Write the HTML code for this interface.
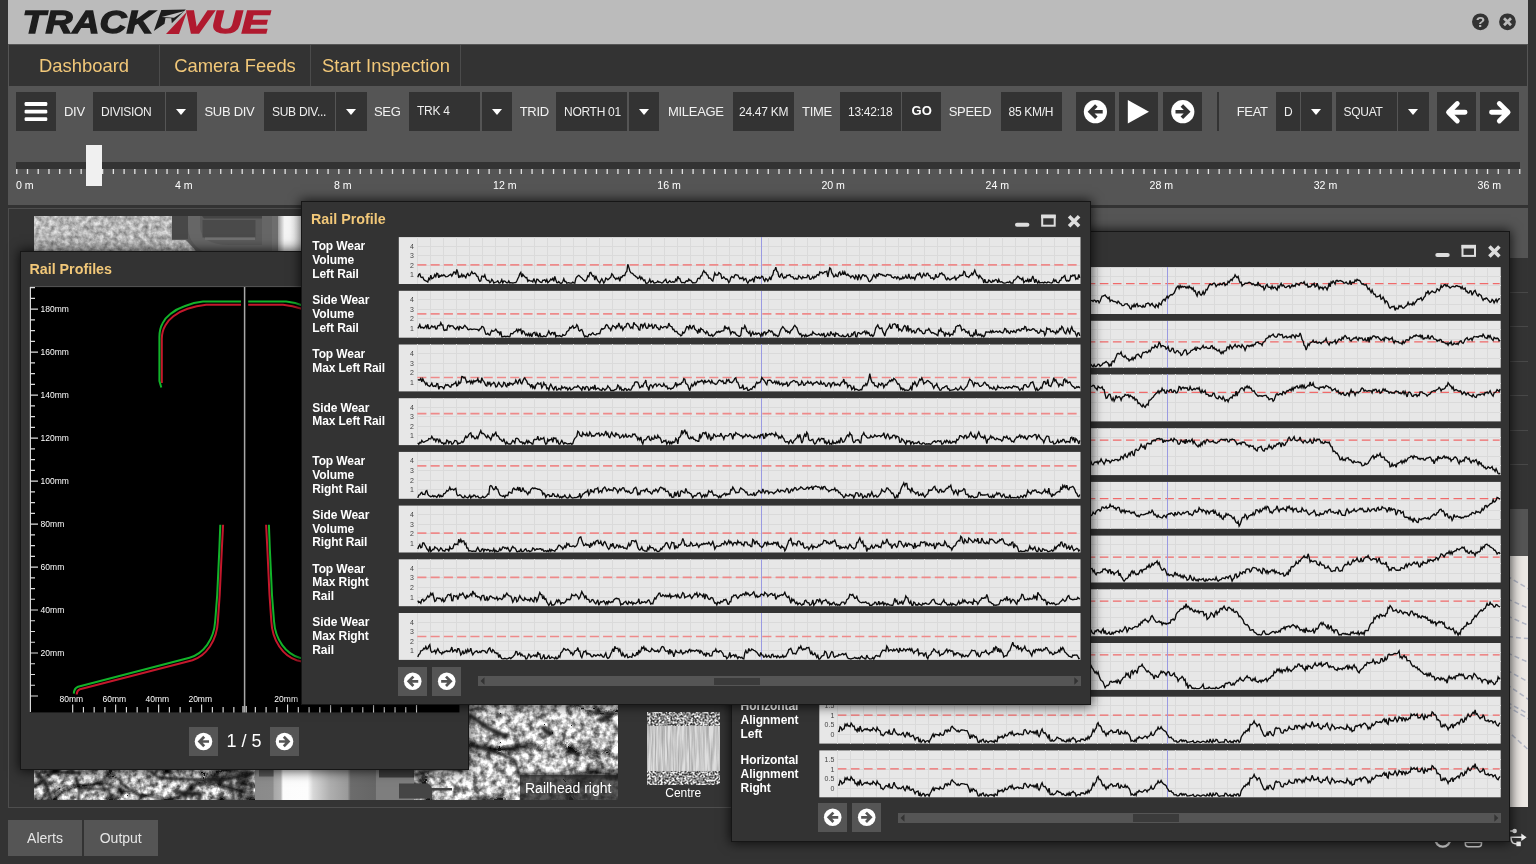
<!DOCTYPE html>
<html lang="en"><head><meta charset="utf-8"><title>TrackVue</title>
<style>
*{box-sizing:border-box;margin:0;padding:0}
html{background:#333}
html,body{width:1536px;height:864px;overflow:hidden;background:#333;font-family:"Liberation Sans",sans-serif;color:#fff}
#root{position:absolute;left:0;top:0;width:1536px;height:864px;overflow:hidden;will-change:transform}
.a{position:absolute}
#hdr{left:8px;top:0;width:1520px;height:44px;background:#bbb}
#nav{left:8px;top:44px;width:1520px;height:43px;background:#333;border:1px solid #555}
.tab{position:absolute;top:0;height:41px;line-height:41px;text-align:center;font-size:18.4px;color:#f2c879;width:150px}
.tsep{position:absolute;top:0;width:1px;height:41px;background:#4b4b4b}
#tb{left:8px;top:87px;width:1520px;height:117.5px;background:#555}
.bx{position:absolute;top:92px;height:39px;line-height:41px;background:#333;font-size:12px;letter-spacing:-.28px;color:#eee;padding-left:8px;white-space:nowrap;overflow:hidden}
.lb{position:absolute;top:92px;height:39px;line-height:39.4px;font-size:13px;letter-spacing:-.3px;color:#f2f2f2;white-space:nowrap}
.ar{position:absolute;top:92px;height:39px;background:#333;width:30.5px}
.ar:after{content:"";position:absolute;left:10.2px;top:17.2px;border-left:5.3px solid transparent;border-right:5.3px solid transparent;border-top:6.2px solid #fff}
.btn{position:absolute;top:92px;height:39px;width:39.2px;background:#333}
.btn svg{position:absolute;left:0;top:0}
.dlg{position:absolute;background:#333;box-shadow:inset 0 0 0 1px #161616,0 0 11px 1px rgba(0,0,0,.75)}
.dt{position:absolute;font-weight:bold;font-size:14px;color:#f2c879;white-space:nowrap;line-height:16px}
.rl{position:absolute;font-weight:bold;font-size:12px;letter-spacing:-.1px;line-height:13.8px;color:#fff;white-space:nowrap}
.yl{font-size:7px;fill:#444;font-family:"Liberation Sans",sans-serif}
.cl{font-size:8.5px;fill:#fff;font-family:"Liberation Sans",sans-serif}
.sb{position:absolute;background:#555;width:29px;height:29px}
.btab{position:absolute;top:820px;height:35.5px;line-height:37.5px;background:#555;color:#e6e6e6;font-size:14px;text-align:center}
.tl{position:absolute;top:178px;font-size:10.6px;line-height:14px;color:#fff;white-space:nowrap}
</style></head>
<body><div id="root">
<svg width="0" height="0" style="position:absolute">
<defs>
<filter id="rocks" x="0" y="0" width="100%" height="100%" color-interpolation-filters="sRGB">
 <feTurbulence type="turbulence" baseFrequency="0.018 0.035" numOctaves="2" seed="7" result="lo"/>
 <feColorMatrix in="lo" type="matrix" values="4.5 0 0 0 0  4.5 0 0 0 0  4.5 0 0 0 0  0 0 0 0 1" result="lo2"/>
 <feTurbulence type="fractalNoise" baseFrequency="0.16" numOctaves="3" seed="9" result="hi"/>
 <feColorMatrix in="hi" type="matrix" values="2.2 0 0 0 -.6  2.2 0 0 0 -.6  2.2 0 0 0 -.6  0 0 0 0 1" result="hi2"/>
 <feComposite in="lo2" in2="hi2" operator="arithmetic" k1="0.62" k2="0.3" k3="0.12" k4="0.02"/>
</filter>
<filter id="rocks2" x="0" y="0" width="100%" height="100%" color-interpolation-filters="sRGB">
 <feTurbulence type="turbulence" baseFrequency="0.014 0.02" numOctaves="2" seed="31" result="lo"/>
 <feColorMatrix in="lo" type="matrix" values="5 0 0 0 0  5 0 0 0 0  5 0 0 0 0  0 0 0 0 1" result="lo2"/>
 <feTurbulence type="fractalNoise" baseFrequency="0.15" numOctaves="3" seed="12" result="hi"/>
 <feColorMatrix in="hi" type="matrix" values="2.2 0 0 0 -.55  2.2 0 0 0 -.55  2.2 0 0 0 -.55  0 0 0 0 1" result="hi2"/>
 <feComposite in="lo2" in2="hi2" operator="arithmetic" k1="0.62" k2="0.32" k3="0.12" k4="0.02"/>
</filter>
<filter id="blur1" x="-5%" y="-5%" width="110%" height="110%"><feGaussianBlur stdDeviation="0.8"/></filter>
<filter id="grain" x="0" y="0" width="100%" height="100%" color-interpolation-filters="sRGB">
 <feTurbulence type="fractalNoise" baseFrequency="0.2" numOctaves="3" seed="3" result="n"/>
 <feColorMatrix in="n" type="matrix" values="0.62 0 0 0 .4  0.62 0 0 0 .4  0.62 0 0 0 .4  0 0 0 0 1"/>
</filter>
<filter id="speck" x="0" y="0" width="100%" height="100%" color-interpolation-filters="sRGB">
 <feTurbulence type="fractalNoise" baseFrequency="0.5" numOctaves="2" seed="11" result="n"/>
 <feColorMatrix in="n" type="matrix" values="0 0 0 0 0  0 0 0 0 0  0 0 0 0 0  2.4 2.4 0 0 -1.9" result="a"/>
 <feFlood flood-color="#f0f0f0"/><feComposite in2="a" operator="in" result="w"/>
 <feFlood flood-color="#3a3a3a" result="k"/>
 <feMerge><feMergeNode in="k"/><feMergeNode in="w"/></feMerge>
</filter>
<filter id="streak" x="0" y="0" width="100%" height="100%" color-interpolation-filters="sRGB">
 <feTurbulence type="fractalNoise" baseFrequency="0.6 0.03" numOctaves="2" seed="5" result="n"/>
 <feColorMatrix in="n" type="matrix" values="0 0 0 0 0  0 0 0 0 0  0 0 0 0 0  1.5 1.5 0 0 -1.1" result="a"/>
 <feFlood flood-color="#a8a8a8"/><feComposite in2="a" operator="in" result="w"/>
 <feFlood flood-color="#dedede" result="k"/>
 <feMerge><feMergeNode in="k"/><feMergeNode in="w"/></feMerge>
</filter>
</defs></svg>
<div id="hdr" class="a"></div>
<svg class="a" style="left:0;top:0" width="300" height="44" viewBox="0 0 300 44">
<text x="22.6" y="33.2" style="font:italic bold 32px 'Liberation Sans',sans-serif;text-transform:uppercase" fill="#1d1d1d" stroke="#1d1d1d" stroke-width="1.3" stroke-linejoin="miter" textLength="131" lengthAdjust="spacingAndGlyphs">Track</text>
<polygon points="161.3,10 185.8,9.5 171.8,23.3 171.3,18.3 165.5,18.1 164.5,23.8 153.8,31.1" fill="#1d1d1d"/>
<polygon points="161.6,17 184.6,11.1 174,17.7" fill="#c2c2c2"/>
<polygon points="186.9,11.8 179,33.9 166,33.9" fill="#b01a2f"/>
<text x="183.5" y="33.2" style="font:italic bold 32px 'Liberation Sans',sans-serif;text-transform:uppercase" fill="#b01a2f" stroke="#b01a2f" stroke-width="1.3" textLength="86" lengthAdjust="spacingAndGlyphs">Vue</text>
</svg>
<svg class="a" style="left:1468px;top:10px" width="56" height="24" viewBox="1468 10 56 24">
<circle cx="1480.4" cy="21.8" r="8.4" fill="#333"/>
<text x="1480.5" y="27.3" text-anchor="middle" font-family="Liberation Sans,sans-serif" font-weight="bold" font-size="15.5" fill="#bbb">?</text>
<circle cx="1507.5" cy="21.8" r="8.4" fill="#333"/>
<path d="M1504 18.3L1511 25.3M1511 18.3L1504 25.3" stroke="#bbb" stroke-width="2.7"/>
</svg>
<div id="nav" class="a">
<div class="tab" style="left:0">Dashboard</div><div class="tsep" style="left:150px"></div>
<div class="tab" style="left:151px">Camera Feeds</div><div class="tsep" style="left:301px"></div>
<div class="tab" style="left:302px">Start Inspection</div><div class="tsep" style="left:451px"></div>
</div>
<div id="tb" class="a"></div>
<div class="btn" style="left:16px;width:40px"><svg width="40" height="40"><rect x="8.6" y="10.1" width="22.7" height="3.8" rx="1.2" fill="#fff"/><rect x="8.6" y="17.7" width="22.7" height="3.8" rx="1.2" fill="#fff"/><rect x="8.6" y="25.2" width="22.7" height="3.8" rx="1.2" fill="#fff"/></svg></div>
<div class="lb" style="left:64px">DIV</div>
<div class="bx" style="left:93px;width:72px;">DIVISION</div>
<div class="ar" style="left:166px;width:30.5px"></div>
<div class="lb" style="left:204.5px">SUB DIV</div>
<div class="bx" style="left:264px;width:71px;">SUB DIV...</div>
<div class="ar" style="left:336px;width:30.5px"></div>
<div class="lb" style="left:374px">SEG</div>
<div class="bx" style="left:409px;width:71px;line-height:39px">TRK 4</div>
<div class="ar" style="left:481.5px;width:30.5px"></div>
<div class="lb" style="left:519.7px">TRID</div>
<div class="bx" style="left:556px;width:71px;">NORTH 01</div>
<div class="ar" style="left:628.5px;width:30.5px"></div>
<div class="lb" style="left:668px">MILEAGE</div>
<div class="bx" style="left:733px;width:61px;padding-left:6px">24.47 KM</div>
<div class="lb" style="left:802px">TIME</div>
<div class="bx" style="left:840px;width:61px;">13:42:18</div>
<div class="bx" style="left:902px;width:39.3px;padding:0;text-align:center;font-weight:bold;font-size:13px;color:#fff;line-height:38px;letter-spacing:0">GO</div>
<div class="lb" style="left:948.7px">SPEED</div>
<div class="bx" style="left:1001px;width:61px;padding-left:7.5px">85 KM/H</div>
<div class="btn" style="left:1075.7px"><svg width="40" height="40"><circle cx="19.4" cy="19.7" r="11.6" fill="#fff"/><path d="M26.71 19.70H14.18 M20.33 13.55L14.18 19.70L20.33 25.85" stroke="#333" stroke-width="3.60" fill="none" stroke-linecap="butt" stroke-linejoin="miter"/></svg></div>
<div class="btn" style="left:1119.1px"><svg width="40" height="40"><path d="M8.8 7.9L30 19.7L8.8 31.5Z" fill="#fff"/></svg></div>
<div class="btn" style="left:1162.5px"><svg width="40" height="40"><circle cx="19.8" cy="19.7" r="11.6" fill="#fff"/><path d="M12.49 19.70H25.02 M18.87 13.55L25.02 19.70L18.87 25.85" stroke="#333" stroke-width="3.60" fill="none" stroke-linecap="butt" stroke-linejoin="miter"/></svg></div>
<div class="a" style="left:1217px;top:92px;width:1.6px;height:39px;background:#333"></div>
<div class="lb" style="left:1236.7px">FEAT</div>
<div class="bx" style="left:1276px;width:24px;">D</div>
<div class="ar" style="left:1301px;width:31px"></div>
<div class="bx" style="left:1335.5px;width:61.5px;">SQUAT</div>
<div class="ar" style="left:1398px;width:30.5px"></div>
<div class="btn" style="left:1437px"><svg width="40" height="40"><path d="M28.1 20.25H12.2 M20.3 11.45L11.5 20.25L20.3 29.05" stroke="#fff" stroke-width="4.8" fill="none" stroke-linecap="round" stroke-linejoin="round"/></svg></div>
<div class="btn" style="left:1480px"><svg width="40" height="40"><path d="M11.5 20.25H27.4 M19.3 11.45L28.1 20.25L19.3 29.05" stroke="#fff" stroke-width="4.8" fill="none" stroke-linecap="round" stroke-linejoin="round"/></svg></div>
<div class="a" style="left:16px;top:162px;width:1504px;height:7px;background:#333"></div>
<svg class="a" style="left:16px;top:169px" width="1505" height="5"><path d="M0.75 0V5M11.49 0V5M22.22 0V5M32.96 0V5M43.69 0V5M54.43 0V5M65.16 0V5M75.90 0V5M86.64 0V5M97.37 0V5M108.11 0V5M118.84 0V5M129.58 0V5M140.31 0V5M151.05 0V5M161.79 0V5M172.52 0V5M183.26 0V5M193.99 0V5M204.73 0V5M215.46 0V5M226.20 0V5M236.94 0V5M247.67 0V5M258.41 0V5M269.14 0V5M279.88 0V5M290.61 0V5M301.35 0V5M312.09 0V5M322.82 0V5M333.56 0V5M344.29 0V5M355.03 0V5M365.76 0V5M376.50 0V5M387.24 0V5M397.97 0V5M408.71 0V5M419.44 0V5M430.18 0V5M440.91 0V5M451.65 0V5M462.39 0V5M473.12 0V5M483.86 0V5M494.59 0V5M505.33 0V5M516.06 0V5M526.80 0V5M537.54 0V5M548.27 0V5M559.01 0V5M569.74 0V5M580.48 0V5M591.21 0V5M601.95 0V5M612.69 0V5M623.42 0V5M634.16 0V5M644.89 0V5M655.63 0V5M666.36 0V5M677.10 0V5M687.84 0V5M698.57 0V5M709.31 0V5M720.04 0V5M730.78 0V5M741.51 0V5M752.25 0V5M762.99 0V5M773.72 0V5M784.46 0V5M795.19 0V5M805.93 0V5M816.66 0V5M827.40 0V5M838.14 0V5M848.87 0V5M859.61 0V5M870.34 0V5M881.08 0V5M891.81 0V5M902.55 0V5M913.29 0V5M924.02 0V5M934.76 0V5M945.49 0V5M956.23 0V5M966.96 0V5M977.70 0V5M988.44 0V5M999.17 0V5M1009.91 0V5M1020.64 0V5M1031.38 0V5M1042.11 0V5M1052.85 0V5M1063.59 0V5M1074.32 0V5M1085.06 0V5M1095.79 0V5M1106.53 0V5M1117.26 0V5M1128.00 0V5M1138.74 0V5M1149.47 0V5M1160.21 0V5M1170.94 0V5M1181.68 0V5M1192.41 0V5M1203.15 0V5M1213.89 0V5M1224.62 0V5M1235.36 0V5M1246.09 0V5M1256.83 0V5M1267.56 0V5M1278.30 0V5M1289.04 0V5M1299.77 0V5M1310.51 0V5M1321.24 0V5M1331.98 0V5M1342.71 0V5M1353.45 0V5M1364.19 0V5M1374.92 0V5M1385.66 0V5M1396.39 0V5M1407.13 0V5M1417.86 0V5M1428.60 0V5M1439.34 0V5M1450.07 0V5M1460.81 0V5M1471.54 0V5M1482.28 0V5M1493.01 0V5M1503.75 0V5" stroke="#e4e4e4" stroke-width="1.3"/></svg>
<div class="a" style="left:86px;top:145px;width:16px;height:41px;background:#f0f0f0"></div>
<div class="tl" style="left:16px">0 m</div>
<div class="tl" style="left:175px">4 m</div>
<div class="tl" style="left:334px">8 m</div>
<div class="tl" style="left:493px">12 m</div>
<div class="tl" style="left:657.3px">16 m</div>
<div class="tl" style="left:821.4px">20 m</div>
<div class="tl" style="left:985.5px">24 m</div>
<div class="tl" style="left:1149.6px">28 m</div>
<div class="tl" style="left:1313.7px">32 m</div>
<div class="tl" style="left:1477.5px">36 m</div>
<div class="a" style="left:8px;top:208px;width:1000px;height:600px;border:1px solid #4e4e4e;background:#343434"></div>
<div class="a" style="left:1000px;top:208px;width:528px;height:600px;background:#343434"></div>
<div class="a" style="left:1000px;top:208px;width:528px;height:50px;background:#555"></div>
<div class="a" style="left:1000px;top:292.0px;width:528px;height:1px;background:#494949"></div>
<div class="a" style="left:1000px;top:326.4px;width:528px;height:1px;background:#494949"></div>
<div class="a" style="left:1000px;top:360.8px;width:528px;height:1px;background:#494949"></div>
<div class="a" style="left:1000px;top:395.2px;width:528px;height:1px;background:#494949"></div>
<div class="a" style="left:1000px;top:429.6px;width:528px;height:1px;background:#494949"></div>
<div class="a" style="left:1000px;top:464.0px;width:528px;height:1px;background:#494949"></div>
<div class="a" style="left:1000px;top:508.5px;width:528px;height:48px;background:#555"></div>
<svg class="a" style="left:1400px;top:556px" width="128" height="251" viewBox="1400 556 128 251">
<rect x="1400" y="556" width="128" height="251" fill="#ece8e4"/>
<path d="M1500 571.8L1530 589.8M1500 595.6L1530 609.1M1500 612.6L1530 626.1M1500 635.8L1530 638.8M1500 649.6L1530 663.1M1500 666.4L1530 682.9M1500 679.6L1530 700.6M1500 698.4L1530 714.9M1500 701.8L1530 719.8M1500 724.2L1530 751.2" stroke="#b4b8c6" stroke-width="1.5" stroke-dasharray="5 3" fill="none"/>
</svg>
<svg class="a" style="left:34px;top:216px" width="270" height="40" viewBox="0 0 270 40">
<rect width="165" height="40" filter="url(#grain)"/>
<path d="M138 0H270V40H166Q160 32 152 24H138Z" fill="#5c5c5c"/>
<rect x="138" y="0" width="16" height="23" fill="#484848"/>
<path d="M165 -4 H232 V2.5 H170 Z" fill="#454545"/>
<path d="M160 -2 V10 C160 28 176 35 196 35 H234 V-2" stroke="#666" stroke-width="12" fill="none"/>
<rect x="168.5" y="4" width="53" height="17.5" fill="#4a4a4a"/>
<rect x="171" y="21.5" width="50" height="2.5" fill="#727272"/>
<rect x="238" width="9" height="40" fill="#6e6e6e"/>
<rect x="244" width="26" height="40" fill="url(#gw)"/>
<defs><linearGradient id="gw" x1="0" x2="1" y1="0" y2="0"><stop offset="0" stop-color="#9a9a9a"/><stop offset=".25" stop-color="#f4f4f4"/><stop offset="1" stop-color="#fff"/></linearGradient></defs>
</svg>
<svg class="a" style="left:34px;top:700px" width="584" height="100" viewBox="34 700 584 100">
<rect x="34" y="700" width="224" height="100" filter="url(#rocks)"/>
<rect x="255" y="700" width="215" height="100" fill="url(#gr)"/>
<rect x="259" y="769" width="14.5" height="7.5" fill="#595959"/>
<rect x="376" y="700" width="40" height="100" fill="#7e7e7e"/>
<rect x="379" y="769" width="37" height="8.5" fill="#3c3c3c"/>
<rect x="414" y="700" width="204" height="100" filter="url(#rocks2)"/>
<path d="M399 783.5H426Q431 784 431.5 788H452V790.5H432V798.6H399Z" fill="#454545"/>
<g fill="none" stroke="#161616" stroke-linecap="round" stroke-linejoin="round" opacity=".85" filter="url(#blur1)">
<path d="M35.3 771.5L44.4 780.6L51 799" stroke-width="3.2"/>
<path d="M45 771.5L80 773" stroke-width="3"/>
<path d="M75.3 777.6L79.8 788L78.3 799M79.8 788L108.5 789.7L111.5 799" stroke-width="2.6"/>
<path d="M120.6 783.6L141.8 796.5" stroke-width="2.4"/>
<path d="M150 771L158.4 777.6Q181 780 226.4 779.5L253.5 773" stroke-width="3"/>
<path d="M178 792.7L200.7 794.2L199 799" stroke-width="4"/>
<path d="M231 782L234 799" stroke-width="2.4"/>
<path d="M471 716L488 728L505.5 736.5" stroke-width="5"/>
<path d="M471 745.5L496 752L514.7 760L520 776.5" stroke-width="2.6"/>
<path d="M542 727L553 734L546 733Z" stroke-width="3"/>
<path d="M598.5 720L613 713.7L606 721Z" stroke-width="3"/>
<path d="M569 751L578 754" stroke-width="4"/>
<path d="M522 774L617 777" stroke-width="5" opacity=".6"/>
<path d="M415 775L440 768L462 771" stroke-width="2.4"/>
</g>
<rect x="520" y="775" width="98" height="25" fill="rgba(34,34,34,.74)"/>
<defs><linearGradient id="gr" x1="255" x2="470" y1="0" y2="0" gradientUnits="userSpaceOnUse">
<stop offset="0" stop-color="#8a8a8a"/><stop offset=".083" stop-color="#8c8c8c"/><stop offset=".09" stop-color="#a8a8a8"/><stop offset=".12" stop-color="#b4b4b4"/><stop offset=".13" stop-color="#fcfcfc"/><stop offset=".245" stop-color="#fdfdfd"/><stop offset=".27" stop-color="#d8d8d8"/><stop offset=".35" stop-color="#aeaeae"/><stop offset=".43" stop-color="#9a9a9a"/><stop offset=".445" stop-color="#6c6c6c"/><stop offset=".56" stop-color="#666"/><stop offset=".57" stop-color="#7e7e7e"/><stop offset="1" stop-color="#7e7e7e"/></linearGradient></defs>
</svg>
<div class="a" style="left:525px;top:777.5px;font-size:14px;line-height:20px;color:#fff;white-space:nowrap">Railhead right</div>
<svg class="a" style="left:647px;top:712px" width="72.5" height="73" viewBox="0 0 72.5 73">
<rect width="72.5" height="73" filter="url(#speck)"/>
<path d="M0 17 Q36 13 72.5 16 V56 Q60 54.5 50 57 Q36 60 20 57.5 Q8 56 0 59 Z" filter="url(#streak)"/>
</svg>
<div class="a" style="left:647px;top:786px;width:72.5px;text-align:center;font-size:12px;line-height:14px;color:#fff">Centre</div>
<div class="btab" style="left:8px;width:74px">Alerts</div>
<div class="btab" style="left:84px;width:73.5px">Output</div>
<svg class="a" style="left:1430px;top:824px" width="100" height="30" viewBox="1430 824 100 30">
<circle cx="1442.8" cy="839" r="7.6" fill="none" stroke="#ddd" stroke-width="2.2"/>
<rect x="1465.3" y="834" width="16.2" height="12.8" rx="3" fill="none" stroke="#ddd" stroke-width="1.5"/>
<path d="M1466 842.5H1481" stroke="#ddd" stroke-width="1.3"/>
<circle cx="1514.6" cy="831" r="2.3" fill="#eee"/>
<path d="M1510.5 837.3H1522 M1514.6 831H1510.2 M1511 837.3C1511 843 1513 844 1517.5 844" stroke="#eee" stroke-width="1.5" fill="none"/>
<path d="M1521.3 833.6L1526.6 837.3L1521.3 841Z" fill="#eee"/>
<rect x="1516.4" y="841.6" width="4.4" height="4.6" fill="#eee"/>
</svg>
<div class="dlg" style="left:20px;top:251px;width:449px;height:518.5px">
<div class="dt" style="left:9.4px;top:10.2px;font-size:14.3px">Rail Profiles</div>
<svg class="a" style="left:0;top:0" width="449" height="518.5" viewBox="20 251 449 518.5"><rect x="30" y="287" width="429.4" height="425.4" fill="#000"/>
<path d="M30 286.6H459.4" stroke="#555" stroke-width="1"/>
<path d="M30.4 287V712 M30 696.00H38.00M30 685.25H35.00M30 674.51H35.00M30 663.76H35.00M30 653.02H38.00M30 642.27H35.00M30 631.53H35.00M30 620.78H35.00M30 610.04H38.00M30 599.29H35.00M30 588.55H35.00M30 577.81H35.00M30 567.06H38.00M30 556.32H35.00M30 545.57H35.00M30 534.83H35.00M30 524.08H38.00M30 513.34H35.00M30 502.59H35.00M30 491.85H35.00M30 481.10H38.00M30 470.36H35.00M30 459.61H35.00M30 448.87H35.00M30 438.12H38.00M30 427.38H35.00M30 416.63H35.00M30 405.89H35.00M30 395.14H38.00M30 384.40H35.00M30 373.65H35.00M30 362.91H35.00M30 352.16H38.00M30 341.42H35.00M30 330.67H35.00M30 319.93H35.00M30 309.18H38.00M30 298.44H35.00M30 287.69H35.00" stroke="#ddd" stroke-width="1.15" fill="none"/>
<text class="cl" x="40.6" y="656.12">20mm</text>
<text class="cl" x="40.6" y="613.14">40mm</text>
<text class="cl" x="40.6" y="570.16">60mm</text>
<text class="cl" x="40.6" y="527.18">80mm</text>
<text class="cl" x="40.6" y="484.20">100mm</text>
<text class="cl" x="40.6" y="441.22">120mm</text>
<text class="cl" x="40.6" y="398.24">140mm</text>
<text class="cl" x="40.6" y="355.26">160mm</text>
<text class="cl" x="40.6" y="312.28">180mm</text>
<path d="M72.68 712.4V704.40M83.43 712.4V706.90M94.17 712.4V706.90M104.91 712.4V706.90M115.66 712.4V704.40M126.41 712.4V706.90M137.15 712.4V706.90M147.89 712.4V706.90M158.64 712.4V704.40M169.38 712.4V706.90M180.13 712.4V706.90M190.88 712.4V706.90M201.62 712.4V704.40M212.37 712.4V706.90M223.11 712.4V706.90M233.85 712.4V706.90M255.34 712.4V706.90M266.09 712.4V706.90M276.83 712.4V706.90M287.58 712.4V704.40M298.32 712.4V706.90M309.07 712.4V706.90M319.81 712.4V706.90M330.56 712.4V704.40M341.31 712.4V706.90M352.05 712.4V706.90M362.79 712.4V706.90M373.54 712.4V704.40M384.28 712.4V706.90M395.03 712.4V706.90M405.77 712.4V706.90M416.52 712.4V704.40" stroke="#ddd" stroke-width="1.15" fill="none"/>
<text class="cl" x="71.28" y="702.3" text-anchor="middle">80mm</text>
<text class="cl" x="114.26" y="702.3" text-anchor="middle">60mm</text>
<text class="cl" x="157.24" y="702.3" text-anchor="middle">40mm</text>
<text class="cl" x="200.22" y="702.3" text-anchor="middle">20mm</text>
<text class="cl" x="286.18" y="702.3" text-anchor="middle">20mm</text>
<text class="cl" x="329.16" y="702.3" text-anchor="middle">40mm</text>
<text class="cl" x="372.14" y="702.3" text-anchor="middle">60mm</text>
<text class="cl" x="415.12" y="702.3" text-anchor="middle">80mm</text>
<path d="M244.60 287V712.4" stroke="#a8a8a8" stroke-width="1.5"/>
<path d="M243 706V712.4M246.2 706V712.4" stroke="#ddd" stroke-width="1.2"/>
<g fill="none" stroke-width="2" stroke-linejoin="round">
<path d="M161.8 383V339C161.8 333 163.2 329 165.6 325C167.6 321.5 170 318.8 173.4 316.2C177.5 313 182 310.7 187.5 308.8C193 306.8 199 305.3 206.2 304.7H241" stroke="#c4182c"/><path d="M223.1 524.7L221.9 548L219.7 595L217.9 621C217 641 206 656 192.5 660.2L80 689.2C77.5 690.3 76.8 692 76.7 694.5" stroke="#c4182c"/>
<path d="M161.3 387.5L159.4 381V337C159.4 330 160.5 327 162.5 323.4C164.5 319.5 167 316.5 170.3 314C174.5 310.5 179 308 184.4 306.2C190 304 196 302.2 203 301.6H241" stroke="#12b32a"/><path d="M220.3 524.7L219.4 548L217.2 595L215.2 621C214 640 203 654 189.5 657.7L78 686.8C75 688 74 690 73.8 693.6" stroke="#12b32a"/>
</g>
<g transform="translate(489.20 0) scale(-1 1)" fill="none" stroke-width="2" stroke-linejoin="round">
<path d="M161.8 383V339C161.8 333 163.2 329 165.6 325C167.6 321.5 170 318.8 173.4 316.2C177.5 313 182 310.7 187.5 308.8C193 306.8 199 305.3 206.2 304.7H241" stroke="#c4182c"/><path d="M223.1 524.7L221.9 548L219.7 595L217.9 621C217 641 206 656 192.5 660.2L80 689.2C77.5 690.3 76.8 692 76.7 694.5" stroke="#c4182c"/>
<path d="M161.3 387.5L159.4 381V337C159.4 330 160.5 327 162.5 323.4C164.5 319.5 167 316.5 170.3 314C174.5 310.5 179 308 184.4 306.2C190 304 196 302.2 203 301.6H241" stroke="#12b32a"/><path d="M220.3 524.7L219.4 548L217.2 595L215.2 621C214 640 203 654 189.5 657.7L78 686.8C75 688 74 690 73.8 693.6" stroke="#12b32a"/>
</g></svg>
<div class="sb" style="left:169px;top:476px"><svg width="29" height="29"><circle cx="14.5" cy="14.5" r="8.8" fill="#fff"/><path d="M20.04 14.50H10.54 M15.20 9.84L10.54 14.50L15.20 19.16" stroke="#555" stroke-width="2.73" fill="none" stroke-linecap="butt" stroke-linejoin="miter"/></svg></div>
<div class="a" style="left:198px;top:476px;width:52px;text-align:center;font-size:18px;line-height:29px;color:#fff">1 / 5</div>
<div class="sb" style="left:250px;top:476px"><svg width="29" height="29"><circle cx="14.5" cy="14.5" r="8.8" fill="#fff"/><path d="M8.96 14.50H18.46 M13.80 9.84L18.46 14.50L13.80 19.16" stroke="#555" stroke-width="2.73" fill="none" stroke-linecap="butt" stroke-linejoin="miter"/></svg></div>
</div>
<div class="dlg" style="left:730.5px;top:231.4px;width:779px;height:610.3px">
<div class="rl" style="left:10.1px;top:468.9px">Horizontal<br>Alignment<br>Left</div>
<div class="rl" style="left:10.1px;top:522.6px">Horizontal<br>Alignment<br>Right</div>
<svg class="a" style="left:0;top:0" width="779" height="610.3" viewBox="730.5 231.4 779 610.3"><rect x="818.80" y="267.50" width="681.40" height="46.90" fill="#e7e7e7"/>
<path d="M837.30 267.50V314.40M850.30 267.50V314.40M863.30 267.50V314.40M876.30 267.50V314.40M889.30 267.50V314.40M902.30 267.50V314.40M915.30 267.50V314.40M928.30 267.50V314.40M941.30 267.50V314.40M954.30 267.50V314.40M967.30 267.50V314.40M980.30 267.50V314.40M993.30 267.50V314.40M1006.30 267.50V314.40M1019.30 267.50V314.40M1032.30 267.50V314.40M1045.30 267.50V314.40M1058.30 267.50V314.40M1071.30 267.50V314.40M1084.30 267.50V314.40M1097.30 267.50V314.40M1110.30 267.50V314.40M1123.30 267.50V314.40M1136.30 267.50V314.40M1149.30 267.50V314.40M1162.30 267.50V314.40M1175.30 267.50V314.40M1188.30 267.50V314.40M1201.30 267.50V314.40M1214.30 267.50V314.40M1227.30 267.50V314.40M1240.30 267.50V314.40M1253.30 267.50V314.40M1266.30 267.50V314.40M1279.30 267.50V314.40M1292.30 267.50V314.40M1305.30 267.50V314.40M1318.30 267.50V314.40M1331.30 267.50V314.40M1344.30 267.50V314.40M1357.30 267.50V314.40M1370.30 267.50V314.40M1383.30 267.50V314.40M1396.30 267.50V314.40M1409.30 267.50V314.40M1422.30 267.50V314.40M1435.30 267.50V314.40M1448.30 267.50V314.40M1461.30 267.50V314.40M1474.30 267.50V314.40M1487.30 267.50V314.40M837.30 276.60H1500.20M837.30 286.15H1500.20M837.30 295.70H1500.20M837.30 305.25H1500.20" stroke="#dadada" stroke-width="1" fill="none" shape-rendering="crispEdges"/>
<path d="M837.30 284.10H1499.20" stroke="#f06a6a" stroke-width="1.25" stroke-dasharray="8.6 4.5" fill="none"/>
<path d="M1167.20 267.50V314.40" stroke="#9a9ae2" stroke-width="1" fill="none" shape-rendering="crispEdges"/>
<polyline points="837.6,298.6 838.6,298.1 839.6,299.0 840.6,296.4 841.6,296.2 842.6,297.7 843.6,297.6 844.6,299.0 845.6,297.8 846.6,297.7 847.6,299.3 848.6,297.3 849.6,296.2 850.6,296.5 851.6,300.6 852.6,302.5 853.6,298.3 854.6,298.2 855.6,298.5 856.6,299.4 857.6,296.4 858.6,298.2 859.6,297.8 860.6,297.5 861.6,298.4 862.6,299.1 863.6,297.6 864.6,296.6 865.6,299.2 866.6,299.4 867.6,298.3 868.6,299.5 869.6,296.5 870.6,296.2 871.6,298.3 872.6,297.7 873.6,297.6 874.6,297.4 875.6,298.3 876.6,297.6 877.6,297.9 878.6,298.5 879.6,298.2 880.6,297.8 881.6,297.1 882.6,298.4 883.6,298.1 884.6,294.2 885.6,297.1 886.6,297.0 887.6,296.5 888.6,296.4 889.6,296.8 890.6,295.7 891.6,294.7 892.6,295.8 893.6,295.7 894.6,296.2 895.6,296.4 896.6,294.1 897.6,295.2 898.6,297.8 899.6,299.0 900.6,296.9 901.6,298.1 902.6,294.6 903.6,295.1 904.6,295.9 905.6,297.0 906.6,295.4 907.6,294.4 908.6,292.2 909.6,294.6 910.6,293.3 911.6,294.2 912.6,293.9 913.6,294.7 914.6,294.1 915.6,295.5 916.6,296.5 917.6,296.5 918.6,294.8 919.6,295.1 920.6,294.9 921.6,293.9 922.6,292.6 923.6,294.7 924.6,295.1 925.6,295.4 926.6,295.9 927.6,295.4 928.6,294.9 929.6,294.5 930.6,298.7 931.6,294.2 932.6,294.6 933.6,293.8 934.6,293.5 935.6,294.4 936.6,296.4 937.6,295.4 938.6,296.3 939.6,294.2 940.6,293.9 941.6,294.3 942.6,292.2 943.6,292.8 944.6,291.6 945.6,291.7 946.6,290.2 947.6,290.5 948.6,291.4 949.6,290.5 950.6,292.3 951.6,293.4 952.6,294.4 953.6,293.2 954.6,290.9 955.6,290.1 956.6,292.1 957.6,295.9 958.6,292.3 959.6,293.2 960.6,293.4 961.6,292.5 962.6,295.8 963.6,296.4 964.6,297.2 965.6,297.5 966.6,296.9 967.6,295.4 968.6,295.7 969.6,296.2 970.6,295.5 971.6,296.1 972.6,295.3 973.6,297.5 974.6,298.3 975.6,297.7 976.6,297.2 977.6,298.0 978.6,298.4 979.6,295.8 980.6,296.5 981.6,295.1 982.6,291.3 983.6,290.4 984.6,292.8 985.6,295.6 986.6,295.6 987.6,296.2 988.6,297.5 989.6,295.2 990.6,296.5 991.6,295.6 992.6,296.8 993.6,295.3 994.6,296.1 995.6,294.0 996.6,297.0 997.6,295.2 998.6,293.4 999.6,297.3 1000.6,295.7 1001.6,298.4 1002.6,296.9 1003.6,295.1 1004.6,295.0 1005.6,294.7 1006.6,295.6 1007.6,297.0 1008.6,296.7 1009.6,297.2 1010.6,295.5 1011.6,297.5 1012.6,298.9 1013.6,298.9 1014.6,300.9 1015.6,298.9 1016.6,300.0 1017.6,296.8 1018.6,299.3 1019.6,297.3 1020.6,299.0 1021.6,298.1 1022.6,298.5 1023.6,299.2 1024.6,298.3 1025.6,297.6 1026.6,301.3 1027.6,298.8 1028.6,299.3 1029.6,297.4 1030.6,295.3 1031.6,295.8 1032.6,296.6 1033.6,301.4 1034.6,300.2 1035.6,300.0 1036.6,295.5 1037.6,296.6 1038.6,298.3 1039.6,299.1 1040.6,298.8 1041.6,297.9 1042.6,300.3 1043.6,298.6 1044.6,300.3 1045.6,298.6 1046.6,300.2 1047.6,302.6 1048.6,303.0 1049.6,301.2 1050.6,299.1 1051.6,299.3 1052.6,301.4 1053.6,299.1 1054.6,303.1 1055.6,303.6 1056.6,304.3 1057.6,301.9 1058.6,302.6 1059.6,302.0 1060.6,302.5 1061.6,301.3 1062.6,301.3 1063.6,303.0 1064.6,301.1 1065.6,301.7 1066.6,303.7 1067.6,304.8 1068.6,304.4 1069.6,304.2 1070.6,301.3 1071.6,302.9 1072.6,304.0 1073.6,303.6 1074.6,301.1 1075.6,301.3 1076.6,301.9 1077.6,305.1 1078.6,302.3 1079.6,299.9 1080.6,299.0 1081.6,302.1 1082.6,300.8 1083.6,302.0 1084.6,302.5 1085.6,302.2 1086.6,301.2 1087.6,301.1 1088.6,301.5 1089.6,301.4 1090.6,301.1 1091.6,300.9 1092.6,301.9 1093.6,300.4 1094.6,300.9 1095.6,302.5 1096.6,301.0 1097.6,301.0 1098.6,303.3 1099.6,301.7 1100.6,298.8 1101.6,296.5 1102.6,296.4 1103.6,296.1 1104.6,295.3 1105.6,296.9 1106.6,297.8 1107.6,299.1 1108.6,297.7 1109.6,301.8 1110.6,300.6 1111.6,300.5 1112.6,301.7 1113.6,301.9 1114.6,302.1 1115.6,302.4 1116.6,303.6 1117.6,301.6 1118.6,302.7 1119.6,304.0 1120.6,304.2 1121.6,306.1 1122.6,306.1 1123.6,305.7 1124.6,304.3 1125.6,304.3 1126.6,304.1 1127.6,305.6 1128.6,306.4 1129.6,308.8 1130.6,309.6 1131.6,306.0 1132.6,307.2 1133.6,304.8 1134.6,307.8 1135.6,304.9 1136.6,304.0 1137.6,307.0 1138.6,306.2 1139.6,306.1 1140.6,306.9 1141.6,307.6 1142.6,306.0 1143.6,307.5 1144.6,307.2 1145.6,304.0 1146.6,303.8 1147.6,303.5 1148.6,304.2 1149.6,306.1 1150.6,304.7 1151.6,303.8 1152.6,305.9 1153.6,306.7 1154.6,308.0 1155.6,305.0 1156.6,306.0 1157.6,307.6 1158.6,303.4 1159.6,304.4 1160.6,305.2 1161.6,302.0 1162.6,300.4 1163.6,299.6 1164.6,301.1 1165.6,298.4 1166.6,296.6 1167.6,298.5 1168.6,296.5 1169.6,295.7 1170.6,295.0 1171.6,295.4 1172.6,294.5 1173.6,293.5 1174.6,291.3 1175.6,288.6 1176.6,287.4 1177.6,286.4 1178.6,288.9 1179.6,285.9 1180.6,287.9 1181.6,286.7 1182.6,287.6 1183.6,286.8 1184.6,287.1 1185.6,288.5 1186.6,287.0 1187.6,288.5 1188.6,286.5 1189.6,288.1 1190.6,287.9 1191.6,289.8 1192.6,288.2 1193.6,291.7 1194.6,291.1 1195.6,294.1 1196.6,296.3 1197.6,292.6 1198.6,292.0 1199.6,294.6 1200.6,295.6 1201.6,294.5 1202.6,291.9 1203.6,294.7 1204.6,293.0 1205.6,289.8 1206.6,290.2 1207.6,287.9 1208.6,285.6 1209.6,284.4 1210.6,285.2 1211.6,285.2 1212.6,283.9 1213.6,283.5 1214.6,284.4 1215.6,287.0 1216.6,285.6 1217.6,284.7 1218.6,285.4 1219.6,283.8 1220.6,284.8 1221.6,285.1 1222.6,283.5 1223.6,283.1 1224.6,285.9 1225.6,284.7 1226.6,285.0 1227.6,281.8 1228.6,283.0 1229.6,281.1 1230.6,279.7 1231.6,280.9 1232.6,278.3 1233.6,277.9 1234.6,275.2 1235.6,276.9 1236.6,278.0 1237.6,276.8 1238.6,280.6 1239.6,283.1 1240.6,282.6 1241.6,286.4 1242.6,285.0 1243.6,284.8 1244.6,283.7 1245.6,283.7 1246.6,283.8 1247.6,283.2 1248.6,282.7 1249.6,283.0 1250.6,283.7 1251.6,285.0 1252.6,284.1 1253.6,284.9 1254.6,285.9 1255.6,285.0 1256.6,285.7 1257.6,282.4 1258.6,285.9 1259.6,285.3 1260.6,286.9 1261.6,287.3 1262.6,286.7 1263.6,290.2 1264.6,288.5 1265.6,285.8 1266.6,284.7 1267.6,287.3 1268.6,287.8 1269.6,287.5 1270.6,289.3 1271.6,286.3 1272.6,288.8 1273.6,287.6 1274.6,287.6 1275.6,289.2 1276.6,290.4 1277.6,286.4 1278.6,288.0 1279.6,285.7 1280.6,283.8 1281.6,286.4 1282.6,285.4 1283.6,286.4 1284.6,287.7 1285.6,288.0 1286.6,286.9 1287.6,286.5 1288.6,286.1 1289.6,288.3 1290.6,287.0 1291.6,285.2 1292.6,286.8 1293.6,285.9 1294.6,286.7 1295.6,283.9 1296.6,284.3 1297.6,284.8 1298.6,285.6 1299.6,283.5 1300.6,282.9 1301.6,283.5 1302.6,283.7 1303.6,282.1 1304.6,284.9 1305.6,285.6 1306.6,284.4 1307.6,287.6 1308.6,287.0 1309.6,287.3 1310.6,286.7 1311.6,284.7 1312.6,285.3 1313.6,283.8 1314.6,287.4 1315.6,286.8 1316.6,283.7 1317.6,286.4 1318.6,289.4 1319.6,287.3 1320.6,288.3 1321.6,287.7 1322.6,289.9 1323.6,287.9 1324.6,287.2 1325.6,288.3 1326.6,290.3 1327.6,287.7 1328.6,283.4 1329.6,287.2 1330.6,282.3 1331.6,283.4 1332.6,281.4 1333.6,282.8 1334.6,284.5 1335.6,281.0 1336.6,280.6 1337.6,281.8 1338.6,281.4 1339.6,280.9 1340.6,281.2 1341.6,281.8 1342.6,282.4 1343.6,283.6 1344.6,283.3 1345.6,282.4 1346.6,283.7 1347.6,284.5 1348.6,284.2 1349.6,280.8 1350.6,285.2 1351.6,282.6 1352.6,282.8 1353.6,283.1 1354.6,280.5 1355.6,281.6 1356.6,279.8 1357.6,280.6 1358.6,280.5 1359.6,281.4 1360.6,283.2 1361.6,284.5 1362.6,284.2 1363.6,285.2 1364.6,285.4 1365.6,284.9 1366.6,287.3 1367.6,289.6 1368.6,288.6 1369.6,290.9 1370.6,292.9 1371.6,290.4 1372.6,293.2 1373.6,294.8 1374.6,294.6 1375.6,297.3 1376.6,297.3 1377.6,296.7 1378.6,296.6 1379.6,295.4 1380.6,299.7 1381.6,299.2 1382.6,297.4 1383.6,299.7 1384.6,303.2 1385.6,301.2 1386.6,302.0 1387.6,304.2 1388.6,307.4 1389.6,308.7 1390.6,307.7 1391.6,306.9 1392.6,307.1 1393.6,306.6 1394.6,310.8 1395.6,308.4 1396.6,309.3 1397.6,309.2 1398.6,306.2 1399.6,307.1 1400.6,306.0 1401.6,307.7 1402.6,308.7 1403.6,308.4 1404.6,307.1 1405.6,306.3 1406.6,305.5 1407.6,302.7 1408.6,305.2 1409.6,304.6 1410.6,304.4 1411.6,305.4 1412.6,302.8 1413.6,304.9 1414.6,303.1 1415.6,301.9 1416.6,300.2 1417.6,299.4 1418.6,299.6 1419.6,299.0 1420.6,298.1 1421.6,300.8 1422.6,299.5 1423.6,297.6 1424.6,296.8 1425.6,292.9 1426.6,293.4 1427.6,291.0 1428.6,294.5 1429.6,293.5 1430.6,292.4 1431.6,291.3 1432.6,292.3 1433.6,292.7 1434.6,293.1 1435.6,291.8 1436.6,289.2 1437.6,289.8 1438.6,291.1 1439.6,289.4 1440.6,286.0 1441.6,287.8 1442.6,286.8 1443.6,285.2 1444.6,284.9 1445.6,286.6 1446.6,285.2 1447.6,286.9 1448.6,287.2 1449.6,288.4 1450.6,287.6 1451.6,286.9 1452.6,286.6 1453.6,287.3 1454.6,287.2 1455.6,286.2 1456.6,286.2 1457.6,286.7 1458.6,286.9 1459.6,287.1 1460.6,288.9 1461.6,287.0 1462.6,289.5 1463.6,289.5 1464.6,288.5 1465.6,291.9 1466.6,291.7 1467.6,293.5 1468.6,293.3 1469.6,291.2 1470.6,291.4 1471.6,295.7 1472.6,293.5 1473.6,291.6 1474.6,290.8 1475.6,293.4 1476.6,295.5 1477.6,296.5 1478.6,294.4 1479.6,295.2 1480.6,295.9 1481.6,298.6 1482.6,300.7 1483.6,299.0 1484.6,299.6 1485.6,298.3 1486.6,299.0 1487.6,300.3 1488.6,301.4 1489.6,302.8 1490.6,302.1 1491.6,299.9 1492.6,300.9 1493.6,303.3 1494.6,301.3 1495.6,299.6 1496.6,302.3 1497.6,300.2 1498.6,299.1 1499.6,299.2" fill="none" stroke="#0c0c0c" stroke-width="1.35" stroke-linejoin="miter" stroke-miterlimit="3"/>
<rect x="818.80" y="321.20" width="681.40" height="46.90" fill="#e7e7e7"/>
<path d="M837.30 321.20V368.10M850.30 321.20V368.10M863.30 321.20V368.10M876.30 321.20V368.10M889.30 321.20V368.10M902.30 321.20V368.10M915.30 321.20V368.10M928.30 321.20V368.10M941.30 321.20V368.10M954.30 321.20V368.10M967.30 321.20V368.10M980.30 321.20V368.10M993.30 321.20V368.10M1006.30 321.20V368.10M1019.30 321.20V368.10M1032.30 321.20V368.10M1045.30 321.20V368.10M1058.30 321.20V368.10M1071.30 321.20V368.10M1084.30 321.20V368.10M1097.30 321.20V368.10M1110.30 321.20V368.10M1123.30 321.20V368.10M1136.30 321.20V368.10M1149.30 321.20V368.10M1162.30 321.20V368.10M1175.30 321.20V368.10M1188.30 321.20V368.10M1201.30 321.20V368.10M1214.30 321.20V368.10M1227.30 321.20V368.10M1240.30 321.20V368.10M1253.30 321.20V368.10M1266.30 321.20V368.10M1279.30 321.20V368.10M1292.30 321.20V368.10M1305.30 321.20V368.10M1318.30 321.20V368.10M1331.30 321.20V368.10M1344.30 321.20V368.10M1357.30 321.20V368.10M1370.30 321.20V368.10M1383.30 321.20V368.10M1396.30 321.20V368.10M1409.30 321.20V368.10M1422.30 321.20V368.10M1435.30 321.20V368.10M1448.30 321.20V368.10M1461.30 321.20V368.10M1474.30 321.20V368.10M1487.30 321.20V368.10M837.30 330.30H1500.20M837.30 339.85H1500.20M837.30 349.40H1500.20M837.30 358.95H1500.20" stroke="#dadada" stroke-width="1" fill="none" shape-rendering="crispEdges"/>
<path d="M837.30 342.20H1499.20" stroke="#f06a6a" stroke-width="1.25" stroke-dasharray="8.6 4.5" fill="none"/>
<path d="M1167.20 321.20V368.10" stroke="#9a9ae2" stroke-width="1" fill="none" shape-rendering="crispEdges"/>
<polyline points="837.6,362.6 838.6,361.1 839.6,358.7 840.6,360.6 841.6,361.6 842.6,358.8 843.6,359.5 844.6,360.1 845.6,364.3 846.6,363.4 847.6,365.6 848.6,360.8 849.6,363.6 850.6,364.2 851.6,363.7 852.6,362.2 853.6,365.5 854.6,366.6 855.6,366.6 856.6,364.3 857.6,363.7 858.6,363.9 859.6,366.2 860.6,364.3 861.6,363.2 862.6,362.3 863.6,361.6 864.6,360.7 865.6,360.5 866.6,359.6 867.6,363.5 868.6,360.3 869.6,360.6 870.6,363.9 871.6,362.3 872.6,361.7 873.6,362.5 874.6,362.0 875.6,365.4 876.6,362.7 877.6,360.1 878.6,363.6 879.6,364.8 880.6,361.7 881.6,362.2 882.6,362.3 883.6,360.0 884.6,361.2 885.6,361.9 886.6,362.6 887.6,361.1 888.6,363.6 889.6,364.6 890.6,363.5 891.6,362.2 892.6,361.4 893.6,359.6 894.6,360.1 895.6,361.9 896.6,363.0 897.6,361.3 898.6,357.7 899.6,359.9 900.6,359.9 901.6,361.7 902.6,359.5 903.6,361.5 904.6,360.0 905.6,360.1 906.6,360.3 907.6,359.6 908.6,359.6 909.6,361.4 910.6,360.3 911.6,361.5 912.6,362.2 913.6,360.9 914.6,361.5 915.6,359.9 916.6,362.7 917.6,362.9 918.6,361.4 919.6,360.6 920.6,362.4 921.6,363.6 922.6,362.1 923.6,362.9 924.6,362.8 925.6,361.9 926.6,363.5 927.6,360.3 928.6,359.5 929.6,363.7 930.6,365.4 931.6,365.2 932.6,364.1 933.6,364.8 934.6,362.4 935.6,359.6 936.6,358.1 937.6,359.9 938.6,361.8 939.6,363.3 940.6,361.3 941.6,360.2 942.6,363.4 943.6,362.6 944.6,362.3 945.6,361.6 946.6,362.7 947.6,363.6 948.6,364.6 949.6,365.9 950.6,363.4 951.6,363.0 952.6,361.2 953.6,360.9 954.6,363.4 955.6,362.8 956.6,364.1 957.6,364.7 958.6,364.2 959.6,362.0 960.6,361.3 961.6,361.4 962.6,360.1 963.6,362.6 964.6,362.6 965.6,364.2 966.6,363.9 967.6,361.0 968.6,363.4 969.6,364.0 970.6,363.1 971.6,363.2 972.6,361.5 973.6,358.5 974.6,361.8 975.6,360.1 976.6,362.2 977.6,364.5 978.6,364.9 979.6,365.5 980.6,363.5 981.6,362.8 982.6,363.9 983.6,358.3 984.6,362.7 985.6,361.7 986.6,363.1 987.6,362.4 988.6,362.1 989.6,363.7 990.6,363.9 991.6,364.2 992.6,366.9 993.6,366.1 994.6,365.8 995.6,364.7 996.6,362.6 997.6,365.3 998.6,361.8 999.6,360.7 1000.6,360.2 1001.6,358.6 1002.6,361.8 1003.6,360.3 1004.6,359.3 1005.6,358.6 1006.6,361.3 1007.6,361.0 1008.6,360.9 1009.6,364.6 1010.6,363.6 1011.6,362.9 1012.6,364.3 1013.6,364.9 1014.6,365.6 1015.6,363.9 1016.6,365.2 1017.6,364.5 1018.6,363.8 1019.6,363.6 1020.6,364.9 1021.6,367.0 1022.6,365.8 1023.6,365.2 1024.6,365.1 1025.6,364.3 1026.6,363.1 1027.6,362.8 1028.6,360.5 1029.6,359.9 1030.6,361.2 1031.6,362.1 1032.6,362.1 1033.6,360.3 1034.6,361.1 1035.6,361.4 1036.6,362.1 1037.6,364.1 1038.6,362.2 1039.6,362.3 1040.6,364.1 1041.6,365.2 1042.6,363.4 1043.6,364.2 1044.6,365.7 1045.6,363.4 1046.6,364.7 1047.6,363.2 1048.6,364.5 1049.6,364.8 1050.6,365.7 1051.6,366.8 1052.6,366.6 1053.6,364.0 1054.6,364.1 1055.6,363.5 1056.6,365.0 1057.6,364.3 1058.6,366.9 1059.6,366.1 1060.6,366.5 1061.6,367.0 1062.6,366.5 1063.6,366.6 1064.6,366.7 1065.6,366.4 1066.6,366.9 1067.6,365.2 1068.6,366.5 1069.6,366.8 1070.6,366.3 1071.6,366.7 1072.6,365.5 1073.6,365.1 1074.6,365.5 1075.6,362.6 1076.6,362.9 1077.6,364.4 1078.6,363.2 1079.6,360.8 1080.6,363.2 1081.6,364.3 1082.6,367.1 1083.6,366.9 1084.6,365.2 1085.6,366.5 1086.6,364.5 1087.6,362.8 1088.6,362.7 1089.6,365.2 1090.6,365.0 1091.6,366.4 1092.6,367.1 1093.6,364.9 1094.6,366.9 1095.6,366.7 1096.6,365.9 1097.6,364.6 1098.6,364.7 1099.6,366.6 1100.6,365.8 1101.6,365.1 1102.6,363.5 1103.6,363.5 1104.6,362.8 1105.6,361.8 1106.6,363.0 1107.6,363.6 1108.6,366.5 1109.6,364.7 1110.6,366.7 1111.6,362.0 1112.6,361.3 1113.6,362.5 1114.6,359.5 1115.6,357.1 1116.6,354.4 1117.6,353.7 1118.6,354.5 1119.6,354.3 1120.6,352.4 1121.6,356.1 1122.6,356.9 1123.6,357.6 1124.6,356.0 1125.6,357.9 1126.6,359.2 1127.6,359.1 1128.6,361.4 1129.6,360.0 1130.6,360.2 1131.6,358.1 1132.6,360.3 1133.6,357.8 1134.6,358.8 1135.6,355.6 1136.6,355.1 1137.6,354.6 1138.6,355.7 1139.6,357.0 1140.6,358.0 1141.6,354.6 1142.6,352.7 1143.6,353.0 1144.6,352.6 1145.6,352.0 1146.6,353.3 1147.6,352.5 1148.6,350.6 1149.6,352.1 1150.6,350.2 1151.6,347.6 1152.6,348.2 1153.6,348.2 1154.6,345.7 1155.6,347.2 1156.6,348.1 1157.6,345.9 1158.6,342.7 1159.6,343.9 1160.6,347.2 1161.6,346.1 1162.6,346.0 1163.6,346.7 1164.6,347.0 1165.6,349.5 1166.6,348.6 1167.6,347.0 1168.6,350.9 1169.6,352.0 1170.6,351.0 1171.6,348.7 1172.6,348.8 1173.6,352.4 1174.6,353.4 1175.6,352.3 1176.6,350.9 1177.6,351.4 1178.6,353.0 1179.6,353.2 1180.6,355.9 1181.6,355.1 1182.6,353.2 1183.6,351.1 1184.6,350.1 1185.6,350.6 1186.6,355.0 1187.6,353.9 1188.6,353.4 1189.6,352.7 1190.6,350.8 1191.6,350.8 1192.6,349.8 1193.6,349.8 1194.6,348.0 1195.6,351.1 1196.6,347.8 1197.6,348.5 1198.6,348.7 1199.6,349.7 1200.6,348.5 1201.6,347.6 1202.6,345.9 1203.6,348.4 1204.6,348.1 1205.6,347.1 1206.6,348.4 1207.6,349.0 1208.6,348.5 1209.6,348.6 1210.6,346.4 1211.6,346.0 1212.6,348.9 1213.6,347.9 1214.6,349.9 1215.6,349.5 1216.6,351.0 1217.6,351.4 1218.6,350.2 1219.6,352.5 1220.6,354.0 1221.6,352.0 1222.6,353.7 1223.6,351.3 1224.6,351.2 1225.6,351.0 1226.6,347.4 1227.6,347.2 1228.6,349.1 1229.6,345.5 1230.6,346.9 1231.6,349.1 1232.6,347.3 1233.6,346.5 1234.6,344.8 1235.6,347.0 1236.6,347.6 1237.6,345.9 1238.6,345.9 1239.6,347.1 1240.6,348.0 1241.6,345.2 1242.6,346.6 1243.6,347.9 1244.6,350.7 1245.6,348.2 1246.6,345.9 1247.6,345.9 1248.6,347.0 1249.6,345.8 1250.6,346.7 1251.6,345.1 1252.6,346.6 1253.6,344.9 1254.6,344.9 1255.6,342.6 1256.6,342.7 1257.6,342.4 1258.6,343.9 1259.6,344.0 1260.6,344.3 1261.6,345.8 1262.6,342.8 1263.6,342.1 1264.6,341.5 1265.6,338.9 1266.6,338.6 1267.6,338.1 1268.6,336.1 1269.6,337.5 1270.6,335.9 1271.6,335.6 1272.6,334.6 1273.6,336.5 1274.6,337.4 1275.6,337.7 1276.6,337.0 1277.6,334.6 1278.6,334.4 1279.6,335.5 1280.6,335.0 1281.6,334.9 1282.6,338.2 1283.6,338.0 1284.6,337.0 1285.6,336.6 1286.6,338.3 1287.6,337.6 1288.6,337.5 1289.6,336.6 1290.6,338.1 1291.6,335.4 1292.6,335.3 1293.6,336.5 1294.6,338.3 1295.6,335.4 1296.6,336.3 1297.6,336.8 1298.6,336.4 1299.6,333.3 1300.6,336.2 1301.6,340.1 1302.6,341.6 1303.6,345.7 1304.6,346.5 1305.6,350.4 1306.6,347.8 1307.6,344.2 1308.6,345.7 1309.6,343.4 1310.6,342.9 1311.6,342.4 1312.6,340.6 1313.6,342.8 1314.6,342.8 1315.6,341.7 1316.6,343.4 1317.6,343.4 1318.6,342.4 1319.6,343.0 1320.6,344.0 1321.6,342.6 1322.6,342.6 1323.6,341.2 1324.6,341.0 1325.6,338.9 1326.6,342.4 1327.6,343.9 1328.6,345.5 1329.6,342.8 1330.6,342.6 1331.6,343.4 1332.6,342.3 1333.6,342.2 1334.6,340.6 1335.6,344.0 1336.6,342.5 1337.6,340.7 1338.6,339.3 1339.6,340.2 1340.6,340.9 1341.6,337.8 1342.6,339.2 1343.6,337.0 1344.6,335.9 1345.6,337.1 1346.6,338.8 1347.6,338.6 1348.6,338.3 1349.6,340.8 1350.6,341.5 1351.6,339.8 1352.6,339.3 1353.6,338.3 1354.6,338.7 1355.6,337.4 1356.6,339.4 1357.6,340.8 1358.6,338.0 1359.6,338.9 1360.6,338.3 1361.6,338.5 1362.6,340.7 1363.6,340.5 1364.6,338.9 1365.6,341.2 1366.6,341.2 1367.6,337.5 1368.6,342.8 1369.6,337.2 1370.6,339.4 1371.6,337.7 1372.6,336.4 1373.6,336.4 1374.6,337.0 1375.6,338.3 1376.6,337.1 1377.6,337.3 1378.6,338.6 1379.6,339.7 1380.6,340.8 1381.6,340.4 1382.6,339.0 1383.6,341.2 1384.6,337.6 1385.6,337.7 1386.6,338.8 1387.6,338.7 1388.6,340.5 1389.6,339.1 1390.6,339.2 1391.6,337.9 1392.6,341.4 1393.6,343.5 1394.6,341.1 1395.6,341.9 1396.6,342.2 1397.6,342.0 1398.6,343.2 1399.6,343.5 1400.6,343.4 1401.6,344.5 1402.6,341.4 1403.6,343.6 1404.6,342.2 1405.6,340.3 1406.6,340.2 1407.6,340.6 1408.6,340.4 1409.6,337.4 1410.6,338.4 1411.6,338.2 1412.6,337.2 1413.6,336.0 1414.6,336.7 1415.6,335.3 1416.6,336.3 1417.6,336.3 1418.6,337.0 1419.6,335.6 1420.6,337.9 1421.6,335.4 1422.6,339.4 1423.6,339.2 1424.6,338.1 1425.6,338.5 1426.6,338.4 1427.6,335.3 1428.6,339.0 1429.6,339.1 1430.6,336.8 1431.6,336.2 1432.6,337.7 1433.6,339.6 1434.6,339.6 1435.6,339.9 1436.6,341.7 1437.6,340.6 1438.6,341.3 1439.6,339.8 1440.6,340.1 1441.6,342.6 1442.6,342.2 1443.6,343.1 1444.6,343.2 1445.6,344.2 1446.6,343.5 1447.6,345.6 1448.6,343.3 1449.6,344.0 1450.6,342.1 1451.6,345.3 1452.6,345.1 1453.6,343.5 1454.6,344.4 1455.6,344.6 1456.6,343.7 1457.6,344.9 1458.6,342.8 1459.6,341.6 1460.6,341.3 1461.6,343.2 1462.6,343.7 1463.6,342.2 1464.6,339.8 1465.6,338.8 1466.6,338.0 1467.6,340.3 1468.6,340.2 1469.6,339.1 1470.6,338.5 1471.6,340.7 1472.6,338.2 1473.6,336.9 1474.6,337.1 1475.6,337.2 1476.6,337.2 1477.6,337.6 1478.6,336.6 1479.6,336.4 1480.6,336.2 1481.6,337.0 1482.6,334.6 1483.6,336.2 1484.6,338.3 1485.6,338.3 1486.6,338.9 1487.6,335.3 1488.6,337.8 1489.6,335.9 1490.6,338.3 1491.6,339.8 1492.6,340.8 1493.6,337.8 1494.6,338.6 1495.6,339.1 1496.6,338.5 1497.6,339.0 1498.6,341.2 1499.6,340.3" fill="none" stroke="#0c0c0c" stroke-width="1.35" stroke-linejoin="miter" stroke-miterlimit="3"/>
<rect x="818.80" y="374.90" width="681.40" height="46.90" fill="#e7e7e7"/>
<path d="M837.30 374.90V421.80M850.30 374.90V421.80M863.30 374.90V421.80M876.30 374.90V421.80M889.30 374.90V421.80M902.30 374.90V421.80M915.30 374.90V421.80M928.30 374.90V421.80M941.30 374.90V421.80M954.30 374.90V421.80M967.30 374.90V421.80M980.30 374.90V421.80M993.30 374.90V421.80M1006.30 374.90V421.80M1019.30 374.90V421.80M1032.30 374.90V421.80M1045.30 374.90V421.80M1058.30 374.90V421.80M1071.30 374.90V421.80M1084.30 374.90V421.80M1097.30 374.90V421.80M1110.30 374.90V421.80M1123.30 374.90V421.80M1136.30 374.90V421.80M1149.30 374.90V421.80M1162.30 374.90V421.80M1175.30 374.90V421.80M1188.30 374.90V421.80M1201.30 374.90V421.80M1214.30 374.90V421.80M1227.30 374.90V421.80M1240.30 374.90V421.80M1253.30 374.90V421.80M1266.30 374.90V421.80M1279.30 374.90V421.80M1292.30 374.90V421.80M1305.30 374.90V421.80M1318.30 374.90V421.80M1331.30 374.90V421.80M1344.30 374.90V421.80M1357.30 374.90V421.80M1370.30 374.90V421.80M1383.30 374.90V421.80M1396.30 374.90V421.80M1409.30 374.90V421.80M1422.30 374.90V421.80M1435.30 374.90V421.80M1448.30 374.90V421.80M1461.30 374.90V421.80M1474.30 374.90V421.80M1487.30 374.90V421.80M837.30 384.00H1500.20M837.30 393.55H1500.20M837.30 403.10H1500.20M837.30 412.65H1500.20" stroke="#dadada" stroke-width="1" fill="none" shape-rendering="crispEdges"/>
<path d="M837.30 392.90H1499.20" stroke="#f06a6a" stroke-width="1.25" stroke-dasharray="8.6 4.5" fill="none"/>
<path d="M1167.20 374.90V421.80" stroke="#9a9ae2" stroke-width="1" fill="none" shape-rendering="crispEdges"/>
<polyline points="837.6,392.7 838.6,391.3 839.6,396.4 840.6,393.2 841.6,394.0 842.6,391.8 843.6,394.1 844.6,392.9 845.6,393.3 846.6,393.7 847.6,390.6 848.6,393.2 849.6,392.4 850.6,392.4 851.6,393.6 852.6,391.1 853.6,391.8 854.6,394.5 855.6,395.6 856.6,394.0 857.6,392.3 858.6,394.6 859.6,391.3 860.6,392.5 861.6,393.2 862.6,395.1 863.6,393.3 864.6,394.4 865.6,392.0 866.6,390.1 867.6,389.1 868.6,391.4 869.6,388.8 870.6,392.1 871.6,392.9 872.6,392.5 873.6,391.1 874.6,394.7 875.6,390.8 876.6,389.6 877.6,392.0 878.6,390.8 879.6,391.4 880.6,391.5 881.6,391.1 882.6,390.9 883.6,392.5 884.6,392.3 885.6,391.9 886.6,390.6 887.6,390.3 888.6,390.2 889.6,390.8 890.6,390.0 891.6,391.1 892.6,392.3 893.6,391.0 894.6,388.5 895.6,391.4 896.6,391.5 897.6,388.6 898.6,391.1 899.6,390.4 900.6,390.1 901.6,390.4 902.6,389.7 903.6,388.6 904.6,389.8 905.6,390.1 906.6,390.8 907.6,390.7 908.6,392.1 909.6,392.6 910.6,393.2 911.6,391.5 912.6,392.5 913.6,393.8 914.6,388.3 915.6,391.3 916.6,390.2 917.6,390.6 918.6,392.4 919.6,392.1 920.6,393.1 921.6,393.5 922.6,395.1 923.6,391.9 924.6,392.8 925.6,394.6 926.6,392.9 927.6,390.5 928.6,390.0 929.6,391.6 930.6,394.1 931.6,394.9 932.6,395.3 933.6,395.1 934.6,394.7 935.6,395.0 936.6,393.2 937.6,392.9 938.6,391.7 939.6,393.8 940.6,393.1 941.6,392.7 942.6,393.8 943.6,391.5 944.6,394.7 945.6,393.2 946.6,391.8 947.6,388.9 948.6,389.0 949.6,392.4 950.6,395.8 951.6,391.9 952.6,392.2 953.6,392.3 954.6,391.4 955.6,389.4 956.6,392.2 957.6,390.5 958.6,388.5 959.6,387.9 960.6,386.9 961.6,389.9 962.6,388.9 963.6,389.7 964.6,393.2 965.6,389.9 966.6,390.2 967.6,390.6 968.6,390.8 969.6,387.8 970.6,387.1 971.6,389.6 972.6,391.1 973.6,391.2 974.6,392.0 975.6,391.9 976.6,390.9 977.6,389.4 978.6,389.0 979.6,387.0 980.6,389.1 981.6,388.6 982.6,390.2 983.6,389.4 984.6,390.7 985.6,391.7 986.6,391.5 987.6,392.7 988.6,391.3 989.6,392.3 990.6,390.8 991.6,390.0 992.6,389.6 993.6,389.8 994.6,391.8 995.6,391.4 996.6,391.1 997.6,394.3 998.6,393.2 999.6,392.3 1000.6,393.4 1001.6,390.1 1002.6,391.3 1003.6,393.3 1004.6,392.0 1005.6,390.3 1006.6,390.5 1007.6,393.0 1008.6,393.5 1009.6,392.5 1010.6,390.0 1011.6,390.8 1012.6,393.4 1013.6,391.1 1014.6,391.7 1015.6,392.0 1016.6,389.9 1017.6,390.3 1018.6,391.5 1019.6,391.5 1020.6,392.1 1021.6,390.5 1022.6,393.5 1023.6,389.7 1024.6,392.1 1025.6,392.3 1026.6,390.8 1027.6,391.6 1028.6,391.3 1029.6,389.1 1030.6,389.4 1031.6,389.3 1032.6,387.1 1033.6,386.7 1034.6,389.2 1035.6,390.6 1036.6,391.9 1037.6,391.1 1038.6,388.8 1039.6,386.2 1040.6,387.7 1041.6,389.6 1042.6,389.9 1043.6,389.4 1044.6,389.8 1045.6,389.7 1046.6,390.2 1047.6,389.0 1048.6,385.4 1049.6,388.7 1050.6,388.2 1051.6,387.1 1052.6,386.3 1053.6,386.4 1054.6,387.1 1055.6,388.0 1056.6,388.2 1057.6,388.0 1058.6,387.9 1059.6,387.0 1060.6,386.4 1061.6,387.3 1062.6,385.1 1063.6,387.4 1064.6,384.5 1065.6,383.2 1066.6,389.4 1067.6,389.5 1068.6,388.3 1069.6,385.9 1070.6,387.7 1071.6,388.2 1072.6,387.8 1073.6,386.9 1074.6,388.0 1075.6,388.5 1076.6,390.5 1077.6,387.5 1078.6,389.3 1079.6,389.0 1080.6,390.0 1081.6,390.8 1082.6,390.0 1083.6,388.1 1084.6,389.8 1085.6,387.7 1086.6,385.8 1087.6,385.9 1088.6,386.3 1089.6,387.6 1090.6,386.7 1091.6,386.5 1092.6,385.7 1093.6,386.0 1094.6,388.2 1095.6,388.7 1096.6,390.3 1097.6,386.7 1098.6,387.6 1099.6,388.4 1100.6,388.3 1101.6,387.2 1102.6,390.1 1103.6,390.1 1104.6,394.7 1105.6,398.7 1106.6,398.3 1107.6,396.1 1108.6,394.6 1109.6,394.7 1110.6,398.6 1111.6,400.7 1112.6,398.3 1113.6,401.6 1114.6,399.4 1115.6,395.8 1116.6,398.3 1117.6,397.4 1118.6,397.0 1119.6,398.0 1120.6,400.6 1121.6,397.8 1122.6,397.0 1123.6,396.8 1124.6,394.9 1125.6,395.5 1126.6,395.6 1127.6,395.1 1128.6,397.5 1129.6,395.6 1130.6,396.7 1131.6,397.0 1132.6,398.9 1133.6,397.7 1134.6,400.5 1135.6,399.6 1136.6,400.3 1137.6,403.9 1138.6,403.5 1139.6,404.4 1140.6,406.1 1141.6,407.2 1142.6,404.9 1143.6,406.8 1144.6,407.8 1145.6,405.8 1146.6,404.6 1147.6,405.4 1148.6,400.6 1149.6,400.6 1150.6,399.8 1151.6,398.3 1152.6,397.7 1153.6,396.0 1154.6,395.0 1155.6,393.7 1156.6,393.1 1157.6,391.2 1158.6,393.5 1159.6,391.4 1160.6,392.0 1161.6,388.8 1162.6,391.0 1163.6,390.4 1164.6,393.4 1165.6,393.6 1166.6,390.7 1167.6,391.4 1168.6,392.0 1169.6,390.1 1170.6,389.9 1171.6,392.6 1172.6,392.7 1173.6,390.7 1174.6,391.3 1175.6,393.3 1176.6,393.1 1177.6,390.9 1178.6,387.0 1179.6,387.5 1180.6,390.1 1181.6,388.2 1182.6,387.5 1183.6,388.9 1184.6,388.0 1185.6,388.7 1186.6,388.1 1187.6,390.6 1188.6,390.3 1189.6,387.1 1190.6,389.5 1191.6,390.6 1192.6,389.8 1193.6,388.9 1194.6,389.9 1195.6,389.2 1196.6,388.3 1197.6,389.5 1198.6,388.0 1199.6,391.5 1200.6,393.1 1201.6,390.5 1202.6,392.8 1203.6,392.4 1204.6,391.0 1205.6,394.9 1206.6,394.6 1207.6,395.0 1208.6,396.6 1209.6,395.8 1210.6,396.8 1211.6,395.9 1212.6,393.5 1213.6,393.6 1214.6,396.7 1215.6,398.2 1216.6,399.0 1217.6,399.1 1218.6,396.7 1219.6,397.7 1220.6,398.9 1221.6,399.8 1222.6,397.1 1223.6,399.2 1224.6,401.5 1225.6,400.2 1226.6,400.0 1227.6,402.1 1228.6,399.4 1229.6,398.3 1230.6,397.5 1231.6,398.5 1232.6,395.4 1233.6,396.0 1234.6,396.1 1235.6,391.6 1236.6,396.4 1237.6,392.7 1238.6,392.5 1239.6,389.9 1240.6,388.8 1241.6,388.2 1242.6,389.2 1243.6,391.0 1244.6,387.6 1245.6,388.0 1246.6,386.4 1247.6,388.4 1248.6,386.9 1249.6,388.8 1250.6,388.6 1251.6,391.2 1252.6,391.7 1253.6,391.1 1254.6,393.4 1255.6,394.7 1256.6,395.6 1257.6,396.8 1258.6,395.9 1259.6,396.4 1260.6,396.1 1261.6,396.8 1262.6,396.2 1263.6,396.0 1264.6,395.8 1265.6,395.8 1266.6,397.6 1267.6,398.0 1268.6,400.2 1269.6,399.4 1270.6,399.0 1271.6,399.1 1272.6,401.6 1273.6,400.5 1274.6,397.6 1275.6,394.8 1276.6,394.1 1277.6,395.4 1278.6,394.8 1279.6,394.0 1280.6,394.3 1281.6,395.2 1282.6,391.9 1283.6,392.6 1284.6,394.2 1285.6,392.5 1286.6,391.0 1287.6,391.6 1288.6,390.4 1289.6,389.6 1290.6,391.1 1291.6,388.3 1292.6,390.6 1293.6,387.8 1294.6,388.5 1295.6,386.8 1296.6,386.3 1297.6,388.4 1298.6,388.3 1299.6,386.0 1300.6,388.1 1301.6,384.8 1302.6,388.2 1303.6,385.8 1304.6,388.8 1305.6,388.0 1306.6,386.8 1307.6,385.7 1308.6,386.3 1309.6,382.3 1310.6,385.9 1311.6,385.8 1312.6,383.4 1313.6,386.8 1314.6,387.6 1315.6,388.1 1316.6,388.3 1317.6,388.4 1318.6,389.8 1319.6,387.4 1320.6,387.7 1321.6,387.7 1322.6,387.1 1323.6,388.6 1324.6,387.4 1325.6,386.1 1326.6,386.6 1327.6,387.0 1328.6,388.3 1329.6,387.7 1330.6,388.9 1331.6,391.1 1332.6,390.3 1333.6,389.7 1334.6,389.0 1335.6,391.3 1336.6,392.1 1337.6,390.9 1338.6,394.0 1339.6,393.1 1340.6,394.9 1341.6,393.8 1342.6,393.2 1343.6,395.3 1344.6,395.8 1345.6,395.1 1346.6,393.2 1347.6,393.7 1348.6,396.1 1349.6,392.9 1350.6,390.2 1351.6,392.9 1352.6,391.9 1353.6,393.0 1354.6,395.7 1355.6,393.0 1356.6,392.4 1357.6,393.4 1358.6,392.3 1359.6,391.9 1360.6,389.6 1361.6,388.4 1362.6,389.0 1363.6,391.5 1364.6,390.6 1365.6,391.3 1366.6,391.7 1367.6,391.3 1368.6,390.9 1369.6,391.4 1370.6,391.1 1371.6,393.3 1372.6,390.1 1373.6,391.0 1374.6,389.7 1375.6,389.8 1376.6,392.4 1377.6,391.7 1378.6,390.5 1379.6,393.6 1380.6,393.1 1381.6,391.5 1382.6,389.4 1383.6,391.1 1384.6,389.5 1385.6,391.7 1386.6,391.4 1387.6,392.0 1388.6,393.6 1389.6,392.4 1390.6,392.6 1391.6,393.5 1392.6,393.1 1393.6,393.7 1394.6,392.0 1395.6,391.3 1396.6,392.1 1397.6,391.9 1398.6,393.7 1399.6,393.0 1400.6,394.3 1401.6,393.5 1402.6,391.7 1403.6,394.3 1404.6,391.8 1405.6,394.6 1406.6,397.3 1407.6,393.4 1408.6,392.5 1409.6,392.7 1410.6,394.3 1411.6,396.5 1412.6,396.8 1413.6,395.4 1414.6,395.3 1415.6,394.8 1416.6,396.8 1417.6,395.5 1418.6,395.9 1419.6,392.4 1420.6,392.3 1421.6,392.3 1422.6,393.8 1423.6,393.8 1424.6,394.4 1425.6,394.9 1426.6,396.5 1427.6,395.3 1428.6,394.7 1429.6,394.3 1430.6,392.7 1431.6,391.8 1432.6,391.5 1433.6,391.0 1434.6,391.8 1435.6,390.5 1436.6,389.9 1437.6,389.4 1438.6,387.8 1439.6,388.9 1440.6,391.4 1441.6,389.5 1442.6,389.6 1443.6,389.4 1444.6,388.4 1445.6,386.4 1446.6,386.4 1447.6,383.1 1448.6,384.5 1449.6,386.1 1450.6,386.7 1451.6,389.1 1452.6,387.4 1453.6,391.1 1454.6,390.5 1455.6,389.9 1456.6,390.6 1457.6,391.3 1458.6,391.9 1459.6,391.1 1460.6,392.1 1461.6,394.7 1462.6,393.7 1463.6,392.3 1464.6,393.3 1465.6,395.3 1466.6,394.0 1467.6,393.4 1468.6,395.2 1469.6,395.7 1470.6,396.1 1471.6,397.2 1472.6,394.9 1473.6,396.5 1474.6,397.6 1475.6,397.9 1476.6,395.3 1477.6,395.3 1478.6,394.7 1479.6,395.5 1480.6,394.5 1481.6,394.5 1482.6,394.1 1483.6,395.5 1484.6,392.9 1485.6,393.1 1486.6,392.4 1487.6,393.9 1488.6,392.8 1489.6,391.1 1490.6,393.5 1491.6,395.3 1492.6,396.5 1493.6,393.3 1494.6,392.9 1495.6,392.2 1496.6,390.0 1497.6,390.8 1498.6,392.0 1499.6,389.3" fill="none" stroke="#0c0c0c" stroke-width="1.35" stroke-linejoin="miter" stroke-miterlimit="3"/>
<rect x="818.80" y="428.60" width="681.40" height="46.90" fill="#e7e7e7"/>
<path d="M837.30 428.60V475.50M850.30 428.60V475.50M863.30 428.60V475.50M876.30 428.60V475.50M889.30 428.60V475.50M902.30 428.60V475.50M915.30 428.60V475.50M928.30 428.60V475.50M941.30 428.60V475.50M954.30 428.60V475.50M967.30 428.60V475.50M980.30 428.60V475.50M993.30 428.60V475.50M1006.30 428.60V475.50M1019.30 428.60V475.50M1032.30 428.60V475.50M1045.30 428.60V475.50M1058.30 428.60V475.50M1071.30 428.60V475.50M1084.30 428.60V475.50M1097.30 428.60V475.50M1110.30 428.60V475.50M1123.30 428.60V475.50M1136.30 428.60V475.50M1149.30 428.60V475.50M1162.30 428.60V475.50M1175.30 428.60V475.50M1188.30 428.60V475.50M1201.30 428.60V475.50M1214.30 428.60V475.50M1227.30 428.60V475.50M1240.30 428.60V475.50M1253.30 428.60V475.50M1266.30 428.60V475.50M1279.30 428.60V475.50M1292.30 428.60V475.50M1305.30 428.60V475.50M1318.30 428.60V475.50M1331.30 428.60V475.50M1344.30 428.60V475.50M1357.30 428.60V475.50M1370.30 428.60V475.50M1383.30 428.60V475.50M1396.30 428.60V475.50M1409.30 428.60V475.50M1422.30 428.60V475.50M1435.30 428.60V475.50M1448.30 428.60V475.50M1461.30 428.60V475.50M1474.30 428.60V475.50M1487.30 428.60V475.50M837.30 437.70H1500.20M837.30 447.25H1500.20M837.30 456.80H1500.20M837.30 466.35H1500.20" stroke="#dadada" stroke-width="1" fill="none" shape-rendering="crispEdges"/>
<path d="M837.30 440.60H1499.20" stroke="#f06a6a" stroke-width="1.25" stroke-dasharray="8.6 4.5" fill="none"/>
<path d="M1167.20 428.60V475.50" stroke="#9a9ae2" stroke-width="1" fill="none" shape-rendering="crispEdges"/>
<polyline points="837.6,463.7 838.6,462.5 839.6,461.4 840.6,461.0 841.6,459.1 842.6,460.3 843.6,460.3 844.6,458.2 845.6,459.1 846.6,460.0 847.6,456.4 848.6,462.1 849.6,462.3 850.6,460.5 851.6,460.1 852.6,460.8 853.6,458.3 854.6,456.9 855.6,459.9 856.6,460.2 857.6,454.9 858.6,456.0 859.6,455.2 860.6,458.8 861.6,459.9 862.6,458.2 863.6,457.9 864.6,458.8 865.6,455.1 866.6,457.9 867.6,459.1 868.6,459.0 869.6,460.1 870.6,458.8 871.6,459.7 872.6,460.7 873.6,458.3 874.6,460.4 875.6,459.1 876.6,457.5 877.6,458.6 878.6,459.4 879.6,456.7 880.6,458.4 881.6,457.4 882.6,456.5 883.6,459.0 884.6,459.9 885.6,457.0 886.6,458.9 887.6,455.8 888.6,458.9 889.6,463.0 890.6,459.4 891.6,462.2 892.6,459.0 893.6,462.4 894.6,458.7 895.6,460.4 896.6,460.8 897.6,459.9 898.6,462.3 899.6,459.4 900.6,460.7 901.6,460.0 902.6,461.8 903.6,463.9 904.6,460.0 905.6,462.0 906.6,462.6 907.6,460.2 908.6,461.9 909.6,459.3 910.6,461.9 911.6,461.4 912.6,460.9 913.6,458.2 914.6,453.9 915.6,459.5 916.6,460.5 917.6,461.7 918.6,465.0 919.6,462.8 920.6,462.5 921.6,462.4 922.6,462.4 923.6,459.7 924.6,460.1 925.6,460.3 926.6,462.3 927.6,464.8 928.6,463.8 929.6,462.1 930.6,462.6 931.6,463.2 932.6,465.0 933.6,464.3 934.6,462.1 935.6,460.4 936.6,461.0 937.6,458.9 938.6,460.4 939.6,461.1 940.6,462.5 941.6,460.4 942.6,460.5 943.6,458.7 944.6,460.1 945.6,456.9 946.6,458.7 947.6,461.8 948.6,463.6 949.6,462.0 950.6,461.6 951.6,460.4 952.6,459.0 953.6,459.0 954.6,461.4 955.6,464.5 956.6,462.4 957.6,461.4 958.6,460.1 959.6,461.1 960.6,460.9 961.6,458.6 962.6,458.3 963.6,460.6 964.6,462.5 965.6,461.7 966.6,460.2 967.6,462.0 968.6,459.4 969.6,459.0 970.6,460.1 971.6,459.8 972.6,461.0 973.6,460.9 974.6,460.0 975.6,462.3 976.6,461.4 977.6,460.9 978.6,460.3 979.6,463.4 980.6,461.3 981.6,462.9 982.6,461.0 983.6,460.0 984.6,460.8 985.6,462.5 986.6,463.4 987.6,463.0 988.6,462.9 989.6,463.6 990.6,462.1 991.6,462.1 992.6,461.4 993.6,460.7 994.6,462.8 995.6,463.8 996.6,464.0 997.6,461.6 998.6,461.5 999.6,461.0 1000.6,459.9 1001.6,459.0 1002.6,458.8 1003.6,459.9 1004.6,460.8 1005.6,461.3 1006.6,460.2 1007.6,460.9 1008.6,460.7 1009.6,462.2 1010.6,461.3 1011.6,463.6 1012.6,466.2 1013.6,464.8 1014.6,467.8 1015.6,461.6 1016.6,463.0 1017.6,463.9 1018.6,462.2 1019.6,463.9 1020.6,462.8 1021.6,462.2 1022.6,460.8 1023.6,461.6 1024.6,462.1 1025.6,460.8 1026.6,462.2 1027.6,463.0 1028.6,464.1 1029.6,465.6 1030.6,466.4 1031.6,465.5 1032.6,464.3 1033.6,464.7 1034.6,464.7 1035.6,464.4 1036.6,465.0 1037.6,466.9 1038.6,467.4 1039.6,465.1 1040.6,466.9 1041.6,465.4 1042.6,467.2 1043.6,465.5 1044.6,465.0 1045.6,463.6 1046.6,464.7 1047.6,467.3 1048.6,465.7 1049.6,468.0 1050.6,464.3 1051.6,467.6 1052.6,465.9 1053.6,466.4 1054.6,463.6 1055.6,464.8 1056.6,466.0 1057.6,467.2 1058.6,468.8 1059.6,467.3 1060.6,463.9 1061.6,466.3 1062.6,467.6 1063.6,466.5 1064.6,466.0 1065.6,464.4 1066.6,468.3 1067.6,466.2 1068.6,465.6 1069.6,466.7 1070.6,464.2 1071.6,466.4 1072.6,464.0 1073.6,466.4 1074.6,469.2 1075.6,469.2 1076.6,466.9 1077.6,467.4 1078.6,467.0 1079.6,466.6 1080.6,466.0 1081.6,465.5 1082.6,464.9 1083.6,465.9 1084.6,465.6 1085.6,465.2 1086.6,464.3 1087.6,464.6 1088.6,464.0 1089.6,463.9 1090.6,462.2 1091.6,465.1 1092.6,465.2 1093.6,463.2 1094.6,462.3 1095.6,462.9 1096.6,461.9 1097.6,464.0 1098.6,461.7 1099.6,462.0 1100.6,459.3 1101.6,461.5 1102.6,462.7 1103.6,464.7 1104.6,462.5 1105.6,459.9 1106.6,461.3 1107.6,460.9 1108.6,461.2 1109.6,463.2 1110.6,461.9 1111.6,460.3 1112.6,461.1 1113.6,461.1 1114.6,459.8 1115.6,460.0 1116.6,459.9 1117.6,461.1 1118.6,460.2 1119.6,460.2 1120.6,456.8 1121.6,457.2 1122.6,459.1 1123.6,455.9 1124.6,454.5 1125.6,457.1 1126.6,457.9 1127.6,455.5 1128.6,453.4 1129.6,455.5 1130.6,452.3 1131.6,451.9 1132.6,455.5 1133.6,456.0 1134.6,450.7 1135.6,449.7 1136.6,450.6 1137.6,450.9 1138.6,449.8 1139.6,447.8 1140.6,444.9 1141.6,446.9 1142.6,447.9 1143.6,446.3 1144.6,450.1 1145.6,446.0 1146.6,443.7 1147.6,443.6 1148.6,444.4 1149.6,443.9 1150.6,444.3 1151.6,441.0 1152.6,441.3 1153.6,440.4 1154.6,441.3 1155.6,439.9 1156.6,439.2 1157.6,439.2 1158.6,438.8 1159.6,439.8 1160.6,439.4 1161.6,439.5 1162.6,443.1 1163.6,440.7 1164.6,442.0 1165.6,441.1 1166.6,441.0 1167.6,441.4 1168.6,441.0 1169.6,440.8 1170.6,439.1 1171.6,440.5 1172.6,441.7 1173.6,438.7 1174.6,440.0 1175.6,440.2 1176.6,441.1 1177.6,444.4 1178.6,444.6 1179.6,443.4 1180.6,440.4 1181.6,441.5 1182.6,442.6 1183.6,441.2 1184.6,444.3 1185.6,439.6 1186.6,442.8 1187.6,441.5 1188.6,440.7 1189.6,442.3 1190.6,441.1 1191.6,439.6 1192.6,443.6 1193.6,441.6 1194.6,443.9 1195.6,445.3 1196.6,446.1 1197.6,447.3 1198.6,445.3 1199.6,446.7 1200.6,443.2 1201.6,445.2 1202.6,442.0 1203.6,441.3 1204.6,443.8 1205.6,441.5 1206.6,439.9 1207.6,440.6 1208.6,442.1 1209.6,442.5 1210.6,442.1 1211.6,442.1 1212.6,441.1 1213.6,442.9 1214.6,442.8 1215.6,443.7 1216.6,443.3 1217.6,442.0 1218.6,442.0 1219.6,440.5 1220.6,439.6 1221.6,439.8 1222.6,440.3 1223.6,439.7 1224.6,440.9 1225.6,439.4 1226.6,439.9 1227.6,442.3 1228.6,442.3 1229.6,439.8 1230.6,440.4 1231.6,439.5 1232.6,439.8 1233.6,440.0 1234.6,441.4 1235.6,442.6 1236.6,445.0 1237.6,443.9 1238.6,443.9 1239.6,443.2 1240.6,444.8 1241.6,442.5 1242.6,442.9 1243.6,442.5 1244.6,443.3 1245.6,445.3 1246.6,445.4 1247.6,445.7 1248.6,447.3 1249.6,445.7 1250.6,446.5 1251.6,446.8 1252.6,446.3 1253.6,449.3 1254.6,448.8 1255.6,450.7 1256.6,451.3 1257.6,448.0 1258.6,447.8 1259.6,447.3 1260.6,446.6 1261.6,449.5 1262.6,451.2 1263.6,451.5 1264.6,449.1 1265.6,448.9 1266.6,449.6 1267.6,447.9 1268.6,445.5 1269.6,448.0 1270.6,446.9 1271.6,449.4 1272.6,448.3 1273.6,445.8 1274.6,446.8 1275.6,445.7 1276.6,444.0 1277.6,444.7 1278.6,443.0 1279.6,443.5 1280.6,447.5 1281.6,443.5 1282.6,444.0 1283.6,445.9 1284.6,445.4 1285.6,442.9 1286.6,442.3 1287.6,439.1 1288.6,437.6 1289.6,439.3 1290.6,441.0 1291.6,440.5 1292.6,438.7 1293.6,437.1 1294.6,440.6 1295.6,440.8 1296.6,441.4 1297.6,440.4 1298.6,440.1 1299.6,437.3 1300.6,441.1 1301.6,441.9 1302.6,443.4 1303.6,441.3 1304.6,440.8 1305.6,442.3 1306.6,443.2 1307.6,442.5 1308.6,442.0 1309.6,439.8 1310.6,441.8 1311.6,443.8 1312.6,443.2 1313.6,439.1 1314.6,440.9 1315.6,441.4 1316.6,439.6 1317.6,440.1 1318.6,439.6 1319.6,440.7 1320.6,443.3 1321.6,442.3 1322.6,443.9 1323.6,443.5 1324.6,441.8 1325.6,442.9 1326.6,442.6 1327.6,443.3 1328.6,442.5 1329.6,445.0 1330.6,447.0 1331.6,447.3 1332.6,451.9 1333.6,451.5 1334.6,452.1 1335.6,453.8 1336.6,453.5 1337.6,455.3 1338.6,457.0 1339.6,460.2 1340.6,460.1 1341.6,458.0 1342.6,460.7 1343.6,459.8 1344.6,460.9 1345.6,458.6 1346.6,458.6 1347.6,458.1 1348.6,460.2 1349.6,460.2 1350.6,460.7 1351.6,462.4 1352.6,463.3 1353.6,461.3 1354.6,462.5 1355.6,462.8 1356.6,462.6 1357.6,462.1 1358.6,463.0 1359.6,462.7 1360.6,463.6 1361.6,466.2 1362.6,466.0 1363.6,465.7 1364.6,463.7 1365.6,464.8 1366.6,464.4 1367.6,463.8 1368.6,461.7 1369.6,460.3 1370.6,458.4 1371.6,457.1 1372.6,455.9 1373.6,458.9 1374.6,457.0 1375.6,457.5 1376.6,454.9 1377.6,456.2 1378.6,455.7 1379.6,453.7 1380.6,457.4 1381.6,457.8 1382.6,457.3 1383.6,457.5 1384.6,460.6 1385.6,460.6 1386.6,461.2 1387.6,462.7 1388.6,462.5 1389.6,467.2 1390.6,466.8 1391.6,464.1 1392.6,466.5 1393.6,465.5 1394.6,465.0 1395.6,467.7 1396.6,463.9 1397.6,463.9 1398.6,463.0 1399.6,462.7 1400.6,461.1 1401.6,463.7 1402.6,461.3 1403.6,462.8 1404.6,460.0 1405.6,461.9 1406.6,460.4 1407.6,458.4 1408.6,458.1 1409.6,457.7 1410.6,456.5 1411.6,456.8 1412.6,458.7 1413.6,456.1 1414.6,457.3 1415.6,457.0 1416.6,457.5 1417.6,459.3 1418.6,458.7 1419.6,459.9 1420.6,458.7 1421.6,459.2 1422.6,458.8 1423.6,460.6 1424.6,460.6 1425.6,459.0 1426.6,458.3 1427.6,458.4 1428.6,457.7 1429.6,457.4 1430.6,458.9 1431.6,461.3 1432.6,460.6 1433.6,464.2 1434.6,461.1 1435.6,459.3 1436.6,460.6 1437.6,456.5 1438.6,458.9 1439.6,458.0 1440.6,459.0 1441.6,458.7 1442.6,457.4 1443.6,456.4 1444.6,458.5 1445.6,457.3 1446.6,458.4 1447.6,457.5 1448.6,459.4 1449.6,458.7 1450.6,461.5 1451.6,459.9 1452.6,459.7 1453.6,458.0 1454.6,457.3 1455.6,458.0 1456.6,459.2 1457.6,462.2 1458.6,464.2 1459.6,460.9 1460.6,462.3 1461.6,461.6 1462.6,460.5 1463.6,461.6 1464.6,457.8 1465.6,457.3 1466.6,458.8 1467.6,459.7 1468.6,458.6 1469.6,461.6 1470.6,463.3 1471.6,461.3 1472.6,460.6 1473.6,462.2 1474.6,460.8 1475.6,460.0 1476.6,462.6 1477.6,464.9 1478.6,461.6 1479.6,464.3 1480.6,463.5 1481.6,466.3 1482.6,466.0 1483.6,468.1 1484.6,467.6 1485.6,469.4 1486.6,468.7 1487.6,467.2 1488.6,467.9 1489.6,468.8 1490.6,468.0 1491.6,466.9 1492.6,470.0 1493.6,469.8 1494.6,471.7 1495.6,469.2 1496.6,471.4 1497.6,473.9 1498.6,474.4 1499.6,473.4" fill="none" stroke="#0c0c0c" stroke-width="1.35" stroke-linejoin="miter" stroke-miterlimit="3"/>
<rect x="818.80" y="482.30" width="681.40" height="46.90" fill="#e7e7e7"/>
<path d="M837.30 482.30V529.20M850.30 482.30V529.20M863.30 482.30V529.20M876.30 482.30V529.20M889.30 482.30V529.20M902.30 482.30V529.20M915.30 482.30V529.20M928.30 482.30V529.20M941.30 482.30V529.20M954.30 482.30V529.20M967.30 482.30V529.20M980.30 482.30V529.20M993.30 482.30V529.20M1006.30 482.30V529.20M1019.30 482.30V529.20M1032.30 482.30V529.20M1045.30 482.30V529.20M1058.30 482.30V529.20M1071.30 482.30V529.20M1084.30 482.30V529.20M1097.30 482.30V529.20M1110.30 482.30V529.20M1123.30 482.30V529.20M1136.30 482.30V529.20M1149.30 482.30V529.20M1162.30 482.30V529.20M1175.30 482.30V529.20M1188.30 482.30V529.20M1201.30 482.30V529.20M1214.30 482.30V529.20M1227.30 482.30V529.20M1240.30 482.30V529.20M1253.30 482.30V529.20M1266.30 482.30V529.20M1279.30 482.30V529.20M1292.30 482.30V529.20M1305.30 482.30V529.20M1318.30 482.30V529.20M1331.30 482.30V529.20M1344.30 482.30V529.20M1357.30 482.30V529.20M1370.30 482.30V529.20M1383.30 482.30V529.20M1396.30 482.30V529.20M1409.30 482.30V529.20M1422.30 482.30V529.20M1435.30 482.30V529.20M1448.30 482.30V529.20M1461.30 482.30V529.20M1474.30 482.30V529.20M1487.30 482.30V529.20M837.30 491.40H1500.20M837.30 500.95H1500.20M837.30 510.50H1500.20M837.30 520.05H1500.20" stroke="#dadada" stroke-width="1" fill="none" shape-rendering="crispEdges"/>
<path d="M837.30 499.10H1499.20" stroke="#f06a6a" stroke-width="1.25" stroke-dasharray="8.6 4.5" fill="none"/>
<path d="M1167.20 482.30V529.20" stroke="#9a9ae2" stroke-width="1" fill="none" shape-rendering="crispEdges"/>
<polyline points="837.6,516.5 838.6,510.5 839.6,512.0 840.6,511.3 841.6,511.8 842.6,513.1 843.6,511.3 844.6,512.1 845.6,509.7 846.6,509.7 847.6,513.0 848.6,512.8 849.6,511.4 850.6,513.1 851.6,510.2 852.6,510.5 853.6,510.3 854.6,511.5 855.6,511.0 856.6,511.9 857.6,509.8 858.6,512.4 859.6,513.8 860.6,511.7 861.6,515.2 862.6,517.2 863.6,514.1 864.6,514.6 865.6,514.9 866.6,514.9 867.6,516.7 868.6,515.7 869.6,512.3 870.6,513.8 871.6,516.3 872.6,515.8 873.6,514.9 874.6,510.7 875.6,512.3 876.6,514.0 877.6,513.8 878.6,514.8 879.6,514.0 880.6,512.2 881.6,511.7 882.6,510.6 883.6,511.6 884.6,511.8 885.6,513.7 886.6,514.1 887.6,514.9 888.6,516.1 889.6,514.9 890.6,516.4 891.6,512.6 892.6,512.5 893.6,515.3 894.6,514.9 895.6,516.1 896.6,513.0 897.6,514.9 898.6,513.4 899.6,514.2 900.6,515.3 901.6,514.9 902.6,513.9 903.6,515.2 904.6,513.6 905.6,513.5 906.6,510.9 907.6,513.5 908.6,512.9 909.6,513.7 910.6,513.2 911.6,511.7 912.6,511.0 913.6,512.6 914.6,514.7 915.6,515.5 916.6,512.9 917.6,514.1 918.6,512.1 919.6,515.5 920.6,513.9 921.6,510.8 922.6,512.0 923.6,512.5 924.6,513.8 925.6,513.4 926.6,510.9 927.6,512.5 928.6,512.0 929.6,513.5 930.6,512.5 931.6,513.5 932.6,515.2 933.6,513.4 934.6,515.5 935.6,515.5 936.6,515.4 937.6,516.5 938.6,514.1 939.6,515.4 940.6,515.6 941.6,514.5 942.6,516.2 943.6,512.6 944.6,514.0 945.6,511.6 946.6,514.8 947.6,513.8 948.6,514.7 949.6,513.1 950.6,514.9 951.6,514.2 952.6,512.8 953.6,514.7 954.6,513.1 955.6,511.9 956.6,512.2 957.6,515.0 958.6,514.4 959.6,515.7 960.6,516.5 961.6,515.6 962.6,514.8 963.6,515.3 964.6,514.8 965.6,514.1 966.6,515.5 967.6,514.8 968.6,517.2 969.6,515.1 970.6,513.6 971.6,516.0 972.6,516.3 973.6,515.8 974.6,515.4 975.6,514.7 976.6,513.1 977.6,515.1 978.6,514.6 979.6,516.8 980.6,516.6 981.6,517.7 982.6,515.2 983.6,513.0 984.6,517.7 985.6,515.7 986.6,515.3 987.6,514.5 988.6,516.1 989.6,514.9 990.6,517.5 991.6,515.8 992.6,514.7 993.6,515.3 994.6,512.3 995.6,515.7 996.6,517.9 997.6,517.7 998.6,519.9 999.6,518.8 1000.6,516.8 1001.6,520.4 1002.6,516.3 1003.6,520.2 1004.6,521.1 1005.6,520.5 1006.6,520.5 1007.6,520.5 1008.6,519.1 1009.6,519.5 1010.6,519.4 1011.6,515.0 1012.6,514.2 1013.6,515.2 1014.6,517.8 1015.6,517.0 1016.6,519.7 1017.6,517.2 1018.6,518.5 1019.6,517.6 1020.6,518.4 1021.6,517.7 1022.6,519.1 1023.6,518.0 1024.6,517.4 1025.6,519.0 1026.6,516.5 1027.6,516.0 1028.6,517.3 1029.6,516.4 1030.6,515.4 1031.6,515.8 1032.6,516.0 1033.6,514.2 1034.6,514.1 1035.6,515.7 1036.6,519.1 1037.6,517.9 1038.6,517.0 1039.6,517.8 1040.6,518.9 1041.6,517.8 1042.6,517.7 1043.6,516.1 1044.6,515.6 1045.6,514.5 1046.6,517.7 1047.6,515.0 1048.6,518.3 1049.6,517.1 1050.6,516.5 1051.6,513.3 1052.6,515.3 1053.6,513.5 1054.6,516.4 1055.6,515.8 1056.6,516.3 1057.6,518.4 1058.6,514.9 1059.6,517.0 1060.6,517.8 1061.6,517.3 1062.6,517.6 1063.6,518.7 1064.6,518.7 1065.6,519.0 1066.6,518.2 1067.6,518.7 1068.6,520.5 1069.6,520.9 1070.6,519.7 1071.6,521.7 1072.6,519.9 1073.6,517.0 1074.6,518.0 1075.6,516.3 1076.6,514.2 1077.6,516.5 1078.6,513.8 1079.6,516.9 1080.6,517.0 1081.6,517.1 1082.6,519.6 1083.6,519.6 1084.6,519.1 1085.6,517.5 1086.6,517.0 1087.6,516.2 1088.6,518.1 1089.6,516.6 1090.6,516.1 1091.6,515.3 1092.6,512.5 1093.6,513.9 1094.6,514.4 1095.6,511.8 1096.6,511.0 1097.6,510.1 1098.6,510.1 1099.6,511.5 1100.6,510.4 1101.6,507.4 1102.6,507.5 1103.6,508.6 1104.6,508.3 1105.6,507.0 1106.6,508.9 1107.6,508.0 1108.6,507.8 1109.6,504.9 1110.6,506.9 1111.6,506.9 1112.6,506.3 1113.6,508.6 1114.6,508.1 1115.6,510.0 1116.6,508.4 1117.6,507.6 1118.6,508.0 1119.6,511.3 1120.6,512.9 1121.6,510.5 1122.6,511.9 1123.6,510.4 1124.6,513.2 1125.6,511.3 1126.6,511.7 1127.6,512.1 1128.6,511.4 1129.6,512.8 1130.6,513.8 1131.6,512.6 1132.6,513.2 1133.6,512.3 1134.6,514.4 1135.6,515.7 1136.6,516.7 1137.6,515.7 1138.6,517.2 1139.6,515.8 1140.6,514.7 1141.6,515.0 1142.6,515.2 1143.6,514.9 1144.6,514.8 1145.6,514.1 1146.6,513.9 1147.6,513.9 1148.6,511.9 1149.6,513.3 1150.6,512.9 1151.6,510.7 1152.6,512.3 1153.6,515.4 1154.6,514.7 1155.6,516.1 1156.6,517.6 1157.6,515.5 1158.6,517.3 1159.6,517.6 1160.6,518.0 1161.6,518.3 1162.6,516.9 1163.6,515.6 1164.6,516.5 1165.6,517.9 1166.6,515.1 1167.6,514.7 1168.6,514.0 1169.6,514.5 1170.6,513.2 1171.6,513.8 1172.6,515.0 1173.6,516.0 1174.6,512.6 1175.6,515.2 1176.6,514.8 1177.6,512.5 1178.6,512.9 1179.6,514.5 1180.6,515.2 1181.6,514.1 1182.6,512.7 1183.6,514.0 1184.6,513.1 1185.6,512.6 1186.6,511.9 1187.6,512.0 1188.6,514.8 1189.6,514.2 1190.6,515.0 1191.6,515.9 1192.6,514.6 1193.6,511.7 1194.6,510.6 1195.6,512.6 1196.6,512.4 1197.6,511.7 1198.6,508.1 1199.6,509.7 1200.6,509.9 1201.6,512.1 1202.6,510.1 1203.6,511.1 1204.6,511.6 1205.6,514.0 1206.6,511.0 1207.6,511.8 1208.6,514.1 1209.6,512.3 1210.6,511.3 1211.6,511.6 1212.6,510.5 1213.6,514.1 1214.6,511.3 1215.6,513.6 1216.6,515.5 1217.6,515.8 1218.6,513.8 1219.6,517.3 1220.6,516.1 1221.6,519.0 1222.6,519.8 1223.6,516.5 1224.6,517.2 1225.6,514.0 1226.6,515.5 1227.6,514.5 1228.6,515.6 1229.6,515.9 1230.6,516.3 1231.6,517.7 1232.6,519.0 1233.6,517.7 1234.6,520.8 1235.6,523.0 1236.6,523.5 1237.6,521.9 1238.6,526.5 1239.6,524.8 1240.6,522.0 1241.6,518.4 1242.6,517.7 1243.6,518.0 1244.6,514.8 1245.6,515.9 1246.6,519.4 1247.6,517.7 1248.6,516.1 1249.6,516.0 1250.6,515.0 1251.6,515.7 1252.6,513.2 1253.6,515.5 1254.6,513.8 1255.6,510.1 1256.6,510.2 1257.6,511.4 1258.6,512.9 1259.6,509.9 1260.6,512.1 1261.6,510.9 1262.6,508.7 1263.6,509.4 1264.6,507.2 1265.6,509.5 1266.6,506.6 1267.6,507.3 1268.6,509.7 1269.6,512.8 1270.6,512.1 1271.6,513.6 1272.6,512.0 1273.6,510.3 1274.6,510.1 1275.6,509.2 1276.6,506.2 1277.6,510.0 1278.6,512.0 1279.6,509.8 1280.6,509.4 1281.6,509.6 1282.6,508.3 1283.6,509.8 1284.6,510.0 1285.6,511.3 1286.6,507.3 1287.6,508.3 1288.6,506.7 1289.6,509.2 1290.6,509.7 1291.6,508.4 1292.6,511.8 1293.6,509.4 1294.6,509.4 1295.6,508.7 1296.6,511.5 1297.6,512.6 1298.6,512.0 1299.6,511.6 1300.6,512.3 1301.6,508.3 1302.6,510.0 1303.6,511.6 1304.6,511.6 1305.6,510.4 1306.6,512.3 1307.6,514.0 1308.6,515.2 1309.6,514.4 1310.6,513.5 1311.6,513.0 1312.6,512.4 1313.6,510.8 1314.6,512.7 1315.6,516.1 1316.6,515.0 1317.6,515.2 1318.6,516.1 1319.6,513.5 1320.6,514.9 1321.6,514.2 1322.6,514.8 1323.6,513.5 1324.6,511.6 1325.6,511.6 1326.6,513.3 1327.6,511.2 1328.6,509.9 1329.6,509.7 1330.6,512.6 1331.6,512.6 1332.6,512.0 1333.6,513.4 1334.6,513.6 1335.6,512.7 1336.6,512.6 1337.6,514.8 1338.6,510.6 1339.6,511.4 1340.6,513.8 1341.6,515.7 1342.6,515.5 1343.6,515.7 1344.6,515.8 1345.6,511.5 1346.6,509.3 1347.6,511.0 1348.6,513.6 1349.6,512.3 1350.6,512.7 1351.6,511.3 1352.6,511.2 1353.6,509.4 1354.6,511.4 1355.6,512.0 1356.6,510.9 1357.6,510.4 1358.6,509.9 1359.6,508.7 1360.6,509.9 1361.6,508.7 1362.6,510.3 1363.6,512.3 1364.6,511.7 1365.6,512.1 1366.6,511.9 1367.6,508.7 1368.6,510.2 1369.6,511.9 1370.6,510.9 1371.6,509.6 1372.6,509.5 1373.6,509.0 1374.6,511.2 1375.6,511.6 1376.6,508.5 1377.6,507.8 1378.6,510.4 1379.6,510.0 1380.6,509.9 1381.6,507.2 1382.6,508.2 1383.6,508.5 1384.6,508.6 1385.6,509.7 1386.6,512.2 1387.6,510.5 1388.6,507.6 1389.6,510.9 1390.6,508.8 1391.6,510.5 1392.6,509.6 1393.6,509.3 1394.6,510.3 1395.6,515.6 1396.6,513.3 1397.6,510.6 1398.6,511.0 1399.6,511.1 1400.6,513.6 1401.6,512.6 1402.6,512.0 1403.6,516.8 1404.6,517.9 1405.6,517.5 1406.6,517.9 1407.6,517.9 1408.6,519.7 1409.6,517.6 1410.6,520.3 1411.6,519.7 1412.6,522.7 1413.6,518.2 1414.6,520.7 1415.6,521.2 1416.6,522.7 1417.6,522.9 1418.6,518.9 1419.6,519.6 1420.6,520.3 1421.6,519.1 1422.6,519.2 1423.6,518.5 1424.6,518.1 1425.6,518.7 1426.6,519.1 1427.6,518.1 1428.6,519.7 1429.6,518.9 1430.6,516.8 1431.6,516.3 1432.6,515.2 1433.6,514.4 1434.6,515.6 1435.6,515.4 1436.6,513.3 1437.6,512.9 1438.6,510.8 1439.6,509.8 1440.6,509.7 1441.6,511.9 1442.6,511.2 1443.6,512.6 1444.6,516.8 1445.6,514.5 1446.6,514.2 1447.6,517.3 1448.6,518.4 1449.6,516.7 1450.6,517.4 1451.6,520.8 1452.6,518.9 1453.6,514.9 1454.6,517.3 1455.6,517.5 1456.6,516.3 1457.6,517.1 1458.6,517.8 1459.6,517.2 1460.6,518.7 1461.6,517.8 1462.6,518.3 1463.6,517.4 1464.6,516.5 1465.6,517.2 1466.6,516.4 1467.6,516.9 1468.6,516.0 1469.6,514.6 1470.6,515.0 1471.6,512.8 1472.6,513.0 1473.6,513.9 1474.6,514.1 1475.6,511.6 1476.6,512.6 1477.6,512.2 1478.6,512.5 1479.6,513.4 1480.6,511.9 1481.6,509.0 1482.6,510.7 1483.6,509.1 1484.6,506.1 1485.6,505.9 1486.6,507.7 1487.6,506.2 1488.6,505.3 1489.6,504.3 1490.6,503.9 1491.6,503.5 1492.6,500.2 1493.6,502.5 1494.6,502.1 1495.6,500.6 1496.6,497.8 1497.6,498.2 1498.6,499.1 1499.6,499.4" fill="none" stroke="#0c0c0c" stroke-width="1.35" stroke-linejoin="miter" stroke-miterlimit="3"/>
<rect x="818.80" y="536.00" width="681.40" height="46.90" fill="#e7e7e7"/>
<path d="M837.30 536.00V582.90M850.30 536.00V582.90M863.30 536.00V582.90M876.30 536.00V582.90M889.30 536.00V582.90M902.30 536.00V582.90M915.30 536.00V582.90M928.30 536.00V582.90M941.30 536.00V582.90M954.30 536.00V582.90M967.30 536.00V582.90M980.30 536.00V582.90M993.30 536.00V582.90M1006.30 536.00V582.90M1019.30 536.00V582.90M1032.30 536.00V582.90M1045.30 536.00V582.90M1058.30 536.00V582.90M1071.30 536.00V582.90M1084.30 536.00V582.90M1097.30 536.00V582.90M1110.30 536.00V582.90M1123.30 536.00V582.90M1136.30 536.00V582.90M1149.30 536.00V582.90M1162.30 536.00V582.90M1175.30 536.00V582.90M1188.30 536.00V582.90M1201.30 536.00V582.90M1214.30 536.00V582.90M1227.30 536.00V582.90M1240.30 536.00V582.90M1253.30 536.00V582.90M1266.30 536.00V582.90M1279.30 536.00V582.90M1292.30 536.00V582.90M1305.30 536.00V582.90M1318.30 536.00V582.90M1331.30 536.00V582.90M1344.30 536.00V582.90M1357.30 536.00V582.90M1370.30 536.00V582.90M1383.30 536.00V582.90M1396.30 536.00V582.90M1409.30 536.00V582.90M1422.30 536.00V582.90M1435.30 536.00V582.90M1448.30 536.00V582.90M1461.30 536.00V582.90M1474.30 536.00V582.90M1487.30 536.00V582.90M837.30 545.10H1500.20M837.30 554.65H1500.20M837.30 564.20H1500.20M837.30 573.75H1500.20" stroke="#dadada" stroke-width="1" fill="none" shape-rendering="crispEdges"/>
<path d="M837.30 557.50H1499.20" stroke="#f06a6a" stroke-width="1.25" stroke-dasharray="8.6 4.5" fill="none"/>
<path d="M1167.20 536.00V582.90" stroke="#9a9ae2" stroke-width="1" fill="none" shape-rendering="crispEdges"/>
<polyline points="837.6,567.8 838.6,568.9 839.6,570.4 840.6,569.9 841.6,569.7 842.6,569.9 843.6,572.4 844.6,571.0 845.6,569.6 846.6,571.2 847.6,569.9 848.6,569.9 849.6,569.3 850.6,569.1 851.6,570.8 852.6,573.5 853.6,573.3 854.6,571.2 855.6,570.5 856.6,571.5 857.6,571.8 858.6,571.9 859.6,570.5 860.6,571.5 861.6,571.0 862.6,572.9 863.6,570.1 864.6,569.9 865.6,569.5 866.6,571.0 867.6,573.1 868.6,571.9 869.6,570.8 870.6,571.3 871.6,571.8 872.6,572.3 873.6,571.4 874.6,571.6 875.6,572.1 876.6,572.3 877.6,571.0 878.6,567.8 879.6,567.8 880.6,568.7 881.6,570.9 882.6,568.4 883.6,566.9 884.6,568.1 885.6,568.9 886.6,569.6 887.6,571.5 888.6,573.2 889.6,572.6 890.6,571.4 891.6,570.1 892.6,569.3 893.6,567.7 894.6,567.8 895.6,572.6 896.6,572.4 897.6,573.8 898.6,572.2 899.6,572.4 900.6,574.2 901.6,572.5 902.6,572.2 903.6,570.5 904.6,570.4 905.6,570.2 906.6,571.5 907.6,571.7 908.6,571.2 909.6,572.6 910.6,572.2 911.6,574.1 912.6,571.6 913.6,569.9 914.6,570.7 915.6,571.7 916.6,569.8 917.6,570.5 918.6,569.0 919.6,569.8 920.6,571.6 921.6,572.1 922.6,570.6 923.6,568.2 924.6,570.6 925.6,569.5 926.6,568.7 927.6,566.3 928.6,569.1 929.6,567.8 930.6,569.5 931.6,572.7 932.6,573.0 933.6,571.7 934.6,568.6 935.6,570.8 936.6,571.2 937.6,572.1 938.6,572.2 939.6,571.5 940.6,571.2 941.6,571.0 942.6,570.8 943.6,570.5 944.6,571.6 945.6,573.5 946.6,572.1 947.6,570.8 948.6,569.1 949.6,571.2 950.6,574.9 951.6,575.6 952.6,573.4 953.6,574.1 954.6,575.6 955.6,574.6 956.6,570.3 957.6,572.5 958.6,572.9 959.6,570.1 960.6,573.6 961.6,574.9 962.6,576.9 963.6,574.8 964.6,573.8 965.6,576.4 966.6,575.4 967.6,575.5 968.6,572.3 969.6,573.5 970.6,573.8 971.6,574.1 972.6,571.7 973.6,573.6 974.6,572.3 975.6,572.2 976.6,569.6 977.6,571.5 978.6,573.9 979.6,572.3 980.6,572.5 981.6,569.9 982.6,570.9 983.6,572.0 984.6,570.5 985.6,571.4 986.6,570.4 987.6,570.5 988.6,570.1 989.6,571.6 990.6,568.6 991.6,569.1 992.6,569.4 993.6,572.3 994.6,573.6 995.6,573.0 996.6,569.6 997.6,572.1 998.6,574.2 999.6,573.5 1000.6,571.6 1001.6,572.1 1002.6,572.2 1003.6,571.4 1004.6,570.1 1005.6,570.9 1006.6,573.7 1007.6,574.3 1008.6,574.0 1009.6,572.5 1010.6,573.9 1011.6,574.4 1012.6,571.9 1013.6,573.6 1014.6,572.5 1015.6,574.3 1016.6,572.7 1017.6,574.2 1018.6,574.2 1019.6,570.5 1020.6,569.3 1021.6,572.3 1022.6,570.3 1023.6,571.8 1024.6,572.6 1025.6,571.7 1026.6,572.3 1027.6,572.2 1028.6,574.4 1029.6,573.2 1030.6,575.1 1031.6,572.9 1032.6,571.2 1033.6,572.9 1034.6,571.4 1035.6,575.2 1036.6,573.8 1037.6,574.1 1038.6,574.3 1039.6,572.4 1040.6,575.4 1041.6,574.0 1042.6,574.5 1043.6,573.5 1044.6,574.2 1045.6,574.5 1046.6,575.6 1047.6,576.5 1048.6,576.7 1049.6,574.1 1050.6,576.0 1051.6,574.8 1052.6,574.3 1053.6,574.8 1054.6,577.6 1055.6,577.9 1056.6,577.5 1057.6,576.2 1058.6,577.4 1059.6,576.6 1060.6,578.3 1061.6,577.2 1062.6,575.3 1063.6,576.3 1064.6,573.9 1065.6,575.0 1066.6,572.7 1067.6,573.6 1068.6,575.5 1069.6,576.4 1070.6,574.9 1071.6,572.4 1072.6,572.6 1073.6,573.7 1074.6,577.0 1075.6,575.6 1076.6,575.4 1077.6,573.8 1078.6,572.7 1079.6,572.0 1080.6,573.5 1081.6,574.0 1082.6,573.0 1083.6,572.8 1084.6,572.8 1085.6,574.9 1086.6,572.5 1087.6,575.1 1088.6,574.4 1089.6,569.6 1090.6,569.1 1091.6,569.0 1092.6,572.3 1093.6,570.6 1094.6,573.9 1095.6,575.1 1096.6,573.1 1097.6,573.0 1098.6,573.3 1099.6,573.3 1100.6,572.1 1101.6,572.4 1102.6,569.6 1103.6,569.9 1104.6,569.1 1105.6,570.8 1106.6,570.8 1107.6,573.7 1108.6,570.2 1109.6,570.1 1110.6,574.5 1111.6,572.1 1112.6,572.6 1113.6,574.9 1114.6,573.4 1115.6,572.9 1116.6,572.1 1117.6,571.0 1118.6,576.2 1119.6,573.7 1120.6,577.1 1121.6,578.1 1122.6,580.3 1123.6,581.5 1124.6,580.2 1125.6,578.8 1126.6,579.0 1127.6,577.9 1128.6,575.0 1129.6,576.2 1130.6,572.7 1131.6,571.3 1132.6,573.7 1133.6,571.7 1134.6,573.9 1135.6,575.2 1136.6,574.3 1137.6,574.9 1138.6,573.4 1139.6,570.8 1140.6,570.2 1141.6,572.6 1142.6,570.0 1143.6,569.9 1144.6,569.4 1145.6,569.4 1146.6,566.7 1147.6,567.5 1148.6,565.0 1149.6,567.8 1150.6,566.5 1151.6,564.0 1152.6,565.6 1153.6,564.4 1154.6,563.1 1155.6,563.1 1156.6,561.5 1157.6,564.7 1158.6,563.0 1159.6,566.6 1160.6,568.9 1161.6,570.6 1162.6,570.3 1163.6,568.9 1164.6,569.7 1165.6,572.5 1166.6,575.4 1167.6,574.3 1168.6,576.0 1169.6,575.3 1170.6,575.0 1171.6,575.4 1172.6,577.0 1173.6,575.4 1174.6,572.4 1175.6,575.4 1176.6,574.2 1177.6,576.1 1178.6,576.3 1179.6,575.2 1180.6,577.8 1181.6,576.3 1182.6,578.3 1183.6,575.8 1184.6,577.5 1185.6,578.0 1186.6,580.7 1187.6,580.1 1188.6,579.2 1189.6,575.3 1190.6,577.8 1191.6,580.5 1192.6,580.9 1193.6,578.0 1194.6,579.8 1195.6,581.0 1196.6,579.9 1197.6,581.5 1198.6,579.3 1199.6,580.0 1200.6,580.2 1201.6,579.6 1202.6,578.9 1203.6,581.2 1204.6,581.8 1205.6,579.6 1206.6,581.2 1207.6,580.5 1208.6,579.2 1209.6,579.8 1210.6,580.4 1211.6,580.2 1212.6,579.2 1213.6,580.0 1214.6,580.3 1215.6,577.6 1216.6,580.4 1217.6,581.6 1218.6,580.8 1219.6,580.1 1220.6,580.0 1221.6,578.6 1222.6,578.4 1223.6,578.7 1224.6,579.0 1225.6,577.1 1226.6,577.4 1227.6,578.6 1228.6,576.8 1229.6,576.0 1230.6,578.4 1231.6,581.6 1232.6,579.4 1233.6,578.5 1234.6,574.8 1235.6,574.5 1236.6,578.1 1237.6,577.0 1238.6,576.2 1239.6,572.7 1240.6,573.6 1241.6,574.3 1242.6,572.2 1243.6,572.3 1244.6,573.3 1245.6,569.8 1246.6,569.4 1247.6,569.6 1248.6,569.6 1249.6,572.4 1250.6,571.4 1251.6,569.1 1252.6,567.8 1253.6,568.0 1254.6,568.3 1255.6,568.5 1256.6,570.2 1257.6,571.3 1258.6,569.6 1259.6,570.7 1260.6,572.9 1261.6,573.8 1262.6,568.8 1263.6,569.4 1264.6,571.4 1265.6,573.4 1266.6,570.4 1267.6,573.9 1268.6,571.9 1269.6,572.3 1270.6,571.0 1271.6,570.1 1272.6,571.7 1273.6,570.2 1274.6,573.4 1275.6,571.7 1276.6,573.2 1277.6,573.5 1278.6,572.9 1279.6,574.8 1280.6,574.3 1281.6,574.1 1282.6,573.6 1283.6,576.5 1284.6,576.1 1285.6,574.8 1286.6,573.0 1287.6,575.5 1288.6,570.6 1289.6,571.4 1290.6,567.4 1291.6,566.9 1292.6,567.3 1293.6,566.4 1294.6,565.3 1295.6,562.2 1296.6,564.0 1297.6,564.0 1298.6,560.9 1299.6,561.6 1300.6,559.5 1301.6,558.6 1302.6,557.8 1303.6,556.2 1304.6,558.0 1305.6,557.4 1306.6,558.4 1307.6,554.2 1308.6,557.6 1309.6,562.4 1310.6,560.8 1311.6,561.8 1312.6,562.2 1313.6,561.4 1314.6,561.3 1315.6,561.7 1316.6,564.4 1317.6,565.0 1318.6,565.8 1319.6,562.5 1320.6,564.3 1321.6,565.6 1322.6,565.3 1323.6,565.6 1324.6,568.8 1325.6,568.3 1326.6,568.3 1327.6,566.5 1328.6,568.5 1329.6,569.4 1330.6,571.5 1331.6,571.9 1332.6,571.2 1333.6,571.1 1334.6,571.4 1335.6,568.1 1336.6,567.5 1337.6,568.6 1338.6,571.3 1339.6,571.6 1340.6,570.8 1341.6,571.2 1342.6,567.9 1343.6,566.2 1344.6,564.7 1345.6,565.2 1346.6,565.0 1347.6,562.4 1348.6,564.7 1349.6,565.4 1350.6,564.6 1351.6,562.1 1352.6,560.1 1353.6,562.0 1354.6,561.0 1355.6,560.5 1356.6,558.4 1357.6,561.1 1358.6,562.1 1359.6,562.0 1360.6,558.4 1361.6,562.0 1362.6,561.7 1363.6,558.8 1364.6,558.2 1365.6,557.3 1366.6,557.8 1367.6,556.0 1368.6,558.4 1369.6,559.2 1370.6,560.6 1371.6,560.0 1372.6,559.2 1373.6,559.2 1374.6,559.7 1375.6,559.2 1376.6,562.5 1377.6,560.9 1378.6,558.2 1379.6,561.8 1380.6,563.8 1381.6,564.3 1382.6,563.5 1383.6,564.4 1384.6,564.6 1385.6,562.3 1386.6,567.2 1387.6,567.1 1388.6,570.9 1389.6,569.6 1390.6,570.7 1391.6,568.0 1392.6,568.4 1393.6,568.0 1394.6,569.8 1395.6,570.7 1396.6,570.4 1397.6,570.9 1398.6,570.4 1399.6,570.6 1400.6,568.0 1401.6,568.3 1402.6,568.7 1403.6,569.0 1404.6,566.3 1405.6,564.6 1406.6,567.4 1407.6,565.3 1408.6,563.8 1409.6,564.9 1410.6,565.8 1411.6,564.7 1412.6,563.4 1413.6,562.5 1414.6,564.0 1415.6,564.3 1416.6,562.6 1417.6,564.3 1418.6,567.3 1419.6,567.2 1420.6,563.8 1421.6,565.2 1422.6,562.1 1423.6,563.4 1424.6,563.1 1425.6,563.9 1426.6,563.4 1427.6,560.3 1428.6,561.8 1429.6,560.0 1430.6,560.8 1431.6,560.6 1432.6,561.7 1433.6,560.1 1434.6,560.2 1435.6,557.8 1436.6,558.3 1437.6,560.3 1438.6,558.2 1439.6,556.8 1440.6,554.2 1441.6,554.6 1442.6,555.9 1443.6,557.3 1444.6,555.6 1445.6,554.1 1446.6,553.2 1447.6,553.9 1448.6,551.7 1449.6,554.4 1450.6,552.0 1451.6,554.6 1452.6,552.0 1453.6,551.9 1454.6,551.2 1455.6,551.2 1456.6,549.0 1457.6,549.6 1458.6,550.3 1459.6,549.1 1460.6,548.7 1461.6,547.4 1462.6,548.5 1463.6,547.6 1464.6,550.5 1465.6,552.2 1466.6,551.0 1467.6,553.3 1468.6,553.8 1469.6,552.0 1470.6,551.2 1471.6,553.6 1472.6,553.0 1473.6,553.9 1474.6,556.0 1475.6,552.7 1476.6,553.4 1477.6,552.1 1478.6,552.4 1479.6,551.7 1480.6,547.7 1481.6,549.6 1482.6,547.0 1483.6,548.0 1484.6,545.4 1485.6,544.8 1486.6,544.6 1487.6,546.0 1488.6,545.8 1489.6,547.3 1490.6,547.7 1491.6,548.4 1492.6,548.9 1493.6,550.6 1494.6,550.5 1495.6,552.2 1496.6,554.4 1497.6,553.3 1498.6,552.9 1499.6,554.3" fill="none" stroke="#0c0c0c" stroke-width="1.35" stroke-linejoin="miter" stroke-miterlimit="3"/>
<rect x="818.80" y="589.70" width="681.40" height="46.90" fill="#e7e7e7"/>
<path d="M837.30 589.70V636.60M850.30 589.70V636.60M863.30 589.70V636.60M876.30 589.70V636.60M889.30 589.70V636.60M902.30 589.70V636.60M915.30 589.70V636.60M928.30 589.70V636.60M941.30 589.70V636.60M954.30 589.70V636.60M967.30 589.70V636.60M980.30 589.70V636.60M993.30 589.70V636.60M1006.30 589.70V636.60M1019.30 589.70V636.60M1032.30 589.70V636.60M1045.30 589.70V636.60M1058.30 589.70V636.60M1071.30 589.70V636.60M1084.30 589.70V636.60M1097.30 589.70V636.60M1110.30 589.70V636.60M1123.30 589.70V636.60M1136.30 589.70V636.60M1149.30 589.70V636.60M1162.30 589.70V636.60M1175.30 589.70V636.60M1188.30 589.70V636.60M1201.30 589.70V636.60M1214.30 589.70V636.60M1227.30 589.70V636.60M1240.30 589.70V636.60M1253.30 589.70V636.60M1266.30 589.70V636.60M1279.30 589.70V636.60M1292.30 589.70V636.60M1305.30 589.70V636.60M1318.30 589.70V636.60M1331.30 589.70V636.60M1344.30 589.70V636.60M1357.30 589.70V636.60M1370.30 589.70V636.60M1383.30 589.70V636.60M1396.30 589.70V636.60M1409.30 589.70V636.60M1422.30 589.70V636.60M1435.30 589.70V636.60M1448.30 589.70V636.60M1461.30 589.70V636.60M1474.30 589.70V636.60M1487.30 589.70V636.60M837.30 598.80H1500.20M837.30 608.35H1500.20M837.30 617.90H1500.20M837.30 627.45H1500.20" stroke="#dadada" stroke-width="1" fill="none" shape-rendering="crispEdges"/>
<path d="M837.30 601.50H1499.20" stroke="#f06a6a" stroke-width="1.25" stroke-dasharray="8.6 4.5" fill="none"/>
<path d="M1167.20 589.70V636.60" stroke="#9a9ae2" stroke-width="1" fill="none" shape-rendering="crispEdges"/>
<polyline points="837.6,625.5 838.6,626.2 839.6,624.6 840.6,625.0 841.6,626.2 842.6,625.2 843.6,623.2 844.6,625.6 845.6,626.6 846.6,625.8 847.6,626.0 848.6,623.8 849.6,623.4 850.6,623.8 851.6,620.2 852.6,624.7 853.6,625.6 854.6,626.5 855.6,625.2 856.6,628.3 857.6,625.2 858.6,626.3 859.6,626.7 860.6,627.2 861.6,623.6 862.6,624.8 863.6,625.6 864.6,626.1 865.6,625.7 866.6,629.2 867.6,624.8 868.6,624.7 869.6,626.2 870.6,622.5 871.6,624.8 872.6,625.0 873.6,626.4 874.6,626.2 875.6,625.9 876.6,627.7 877.6,624.7 878.6,621.9 879.6,623.4 880.6,622.8 881.6,625.8 882.6,623.1 883.6,626.6 884.6,628.1 885.6,625.4 886.6,624.8 887.6,623.2 888.6,625.4 889.6,622.4 890.6,623.6 891.6,626.9 892.6,624.7 893.6,628.2 894.6,624.8 895.6,625.2 896.6,625.7 897.6,625.8 898.6,627.4 899.6,626.8 900.6,627.7 901.6,626.7 902.6,629.8 903.6,627.8 904.6,627.9 905.6,628.0 906.6,628.0 907.6,626.7 908.6,624.4 909.6,622.2 910.6,624.7 911.6,623.8 912.6,624.0 913.6,624.9 914.6,623.4 915.6,626.2 916.6,625.8 917.6,626.9 918.6,625.3 919.6,623.7 920.6,624.4 921.6,624.3 922.6,624.5 923.6,623.0 924.6,625.5 925.6,625.4 926.6,623.5 927.6,625.4 928.6,626.0 929.6,623.0 930.6,625.3 931.6,626.3 932.6,626.9 933.6,628.1 934.6,628.0 935.6,628.4 936.6,627.5 937.6,628.7 938.6,628.4 939.6,627.2 940.6,628.3 941.6,628.8 942.6,628.5 943.6,628.4 944.6,628.8 945.6,629.1 946.6,630.6 947.6,630.1 948.6,629.3 949.6,628.1 950.6,623.6 951.6,628.2 952.6,627.7 953.6,625.8 954.6,626.3 955.6,627.3 956.6,626.0 957.6,626.6 958.6,625.1 959.6,626.7 960.6,628.3 961.6,626.4 962.6,625.7 963.6,623.9 964.6,626.6 965.6,627.4 966.6,626.2 967.6,627.7 968.6,625.1 969.6,628.6 970.6,627.1 971.6,627.1 972.6,629.1 973.6,627.6 974.6,629.3 975.6,629.0 976.6,628.6 977.6,629.4 978.6,628.1 979.6,630.4 980.6,630.0 981.6,629.4 982.6,628.3 983.6,628.6 984.6,628.5 985.6,630.6 986.6,628.2 987.6,630.8 988.6,628.2 989.6,628.4 990.6,626.9 991.6,628.8 992.6,629.5 993.6,627.4 994.6,627.1 995.6,628.1 996.6,628.4 997.6,628.7 998.6,627.7 999.6,629.1 1000.6,629.2 1001.6,630.1 1002.6,632.6 1003.6,631.6 1004.6,632.3 1005.6,632.8 1006.6,629.5 1007.6,630.7 1008.6,629.9 1009.6,632.4 1010.6,630.8 1011.6,629.5 1012.6,629.4 1013.6,629.0 1014.6,633.2 1015.6,630.9 1016.6,631.5 1017.6,630.7 1018.6,630.5 1019.6,633.1 1020.6,633.9 1021.6,634.8 1022.6,635.1 1023.6,634.6 1024.6,633.2 1025.6,632.9 1026.6,633.1 1027.6,632.3 1028.6,632.0 1029.6,632.7 1030.6,632.9 1031.6,634.7 1032.6,633.6 1033.6,633.3 1034.6,631.0 1035.6,635.2 1036.6,635.3 1037.6,633.9 1038.6,631.9 1039.6,630.3 1040.6,628.7 1041.6,629.4 1042.6,631.7 1043.6,634.5 1044.6,631.0 1045.6,631.6 1046.6,630.5 1047.6,629.3 1048.6,628.6 1049.6,631.5 1050.6,629.8 1051.6,629.9 1052.6,629.9 1053.6,630.6 1054.6,633.5 1055.6,634.9 1056.6,630.0 1057.6,631.2 1058.6,631.0 1059.6,630.2 1060.6,629.9 1061.6,632.3 1062.6,629.1 1063.6,628.5 1064.6,628.2 1065.6,625.7 1066.6,626.7 1067.6,628.2 1068.6,629.5 1069.6,626.2 1070.6,630.1 1071.6,629.8 1072.6,629.7 1073.6,628.1 1074.6,629.6 1075.6,628.7 1076.6,630.7 1077.6,633.7 1078.6,631.7 1079.6,630.8 1080.6,629.5 1081.6,630.1 1082.6,632.3 1083.6,632.6 1084.6,631.9 1085.6,633.0 1086.6,633.4 1087.6,629.0 1088.6,629.4 1089.6,630.6 1090.6,630.5 1091.6,632.9 1092.6,633.8 1093.6,634.3 1094.6,631.2 1095.6,632.0 1096.6,630.3 1097.6,630.1 1098.6,632.1 1099.6,631.7 1100.6,633.3 1101.6,630.7 1102.6,629.2 1103.6,633.9 1104.6,630.9 1105.6,634.2 1106.6,634.4 1107.6,633.6 1108.6,632.4 1109.6,634.8 1110.6,634.7 1111.6,632.8 1112.6,634.3 1113.6,632.7 1114.6,633.1 1115.6,631.5 1116.6,631.7 1117.6,631.8 1118.6,632.9 1119.6,630.3 1120.6,631.3 1121.6,632.2 1122.6,630.8 1123.6,629.2 1124.6,627.1 1125.6,628.4 1126.6,632.3 1127.6,630.6 1128.6,628.1 1129.6,628.7 1130.6,629.3 1131.6,629.6 1132.6,628.1 1133.6,627.8 1134.6,626.9 1135.6,627.0 1136.6,627.4 1137.6,626.9 1138.6,624.3 1139.6,625.3 1140.6,622.4 1141.6,623.3 1142.6,620.9 1143.6,620.9 1144.6,619.5 1145.6,620.9 1146.6,621.3 1147.6,622.7 1148.6,621.1 1149.6,620.1 1150.6,617.1 1151.6,616.1 1152.6,617.7 1153.6,619.9 1154.6,621.0 1155.6,622.5 1156.6,622.8 1157.6,622.4 1158.6,621.5 1159.6,622.8 1160.6,622.3 1161.6,625.2 1162.6,623.1 1163.6,624.1 1164.6,623.5 1165.6,624.7 1166.6,623.8 1167.6,624.2 1168.6,623.2 1169.6,623.6 1170.6,620.1 1171.6,620.2 1172.6,619.4 1173.6,620.5 1174.6,619.3 1175.6,614.9 1176.6,613.2 1177.6,612.1 1178.6,611.7 1179.6,610.0 1180.6,609.4 1181.6,609.2 1182.6,609.2 1183.6,606.7 1184.6,607.9 1185.6,604.1 1186.6,607.8 1187.6,606.6 1188.6,607.8 1189.6,610.1 1190.6,608.8 1191.6,609.9 1192.6,611.5 1193.6,612.3 1194.6,610.4 1195.6,611.9 1196.6,612.4 1197.6,611.2 1198.6,613.4 1199.6,611.8 1200.6,612.0 1201.6,611.9 1202.6,612.1 1203.6,616.1 1204.6,614.6 1205.6,614.2 1206.6,619.8 1207.6,618.8 1208.6,618.0 1209.6,616.1 1210.6,613.2 1211.6,614.1 1212.6,615.5 1213.6,617.9 1214.6,613.3 1215.6,611.6 1216.6,614.7 1217.6,612.3 1218.6,612.5 1219.6,609.2 1220.6,608.7 1221.6,609.9 1222.6,608.1 1223.6,606.5 1224.6,608.8 1225.6,610.2 1226.6,610.8 1227.6,607.9 1228.6,607.7 1229.6,608.6 1230.6,609.4 1231.6,611.0 1232.6,609.8 1233.6,612.5 1234.6,612.9 1235.6,611.8 1236.6,612.4 1237.6,614.4 1238.6,617.2 1239.6,616.5 1240.6,617.7 1241.6,619.1 1242.6,620.5 1243.6,623.7 1244.6,624.7 1245.6,625.4 1246.6,624.9 1247.6,626.0 1248.6,627.8 1249.6,630.7 1250.6,630.5 1251.6,630.2 1252.6,630.2 1253.6,632.5 1254.6,633.0 1255.6,633.7 1256.6,634.8 1257.6,635.1 1258.6,634.9 1259.6,635.3 1260.6,635.4 1261.6,634.3 1262.6,631.6 1263.6,631.3 1264.6,633.5 1265.6,634.8 1266.6,634.6 1267.6,635.0 1268.6,634.5 1269.6,633.7 1270.6,633.1 1271.6,632.3 1272.6,631.8 1273.6,632.2 1274.6,633.5 1275.6,631.9 1276.6,632.7 1277.6,632.5 1278.6,631.0 1279.6,632.3 1280.6,629.5 1281.6,629.1 1282.6,629.0 1283.6,627.4 1284.6,629.6 1285.6,627.2 1286.6,627.2 1287.6,626.6 1288.6,626.4 1289.6,627.8 1290.6,626.7 1291.6,625.8 1292.6,625.1 1293.6,626.1 1294.6,626.7 1295.6,628.5 1296.6,626.2 1297.6,627.4 1298.6,628.5 1299.6,630.8 1300.6,629.9 1301.6,630.2 1302.6,631.8 1303.6,629.2 1304.6,633.4 1305.6,628.0 1306.6,631.0 1307.6,632.0 1308.6,630.9 1309.6,631.9 1310.6,631.8 1311.6,631.2 1312.6,629.6 1313.6,633.8 1314.6,631.3 1315.6,628.8 1316.6,629.6 1317.6,628.7 1318.6,625.8 1319.6,624.2 1320.6,623.0 1321.6,625.3 1322.6,623.0 1323.6,625.1 1324.6,625.3 1325.6,626.9 1326.6,628.5 1327.6,624.8 1328.6,629.2 1329.6,628.0 1330.6,626.0 1331.6,630.9 1332.6,630.4 1333.6,632.8 1334.6,630.3 1335.6,630.2 1336.6,630.6 1337.6,633.3 1338.6,635.5 1339.6,634.9 1340.6,635.5 1341.6,634.1 1342.6,633.7 1343.6,634.4 1344.6,633.8 1345.6,634.8 1346.6,634.2 1347.6,635.2 1348.6,634.7 1349.6,635.4 1350.6,632.6 1351.6,633.4 1352.6,632.2 1353.6,634.1 1354.6,633.8 1355.6,633.4 1356.6,634.3 1357.6,632.0 1358.6,635.1 1359.6,633.7 1360.6,632.5 1361.6,634.4 1362.6,632.9 1363.6,635.0 1364.6,631.1 1365.6,630.9 1366.6,631.0 1367.6,630.9 1368.6,628.0 1369.6,625.2 1370.6,623.8 1371.6,623.1 1372.6,623.2 1373.6,618.1 1374.6,619.2 1375.6,617.2 1376.6,615.9 1377.6,616.4 1378.6,618.1 1379.6,614.7 1380.6,615.0 1381.6,616.7 1382.6,615.8 1383.6,615.9 1384.6,616.8 1385.6,614.0 1386.6,613.6 1387.6,608.0 1388.6,608.8 1389.6,606.0 1390.6,607.3 1391.6,608.8 1392.6,611.5 1393.6,611.2 1394.6,611.1 1395.6,610.1 1396.6,611.7 1397.6,613.0 1398.6,612.7 1399.6,610.6 1400.6,611.3 1401.6,613.1 1402.6,614.3 1403.6,612.7 1404.6,612.7 1405.6,613.2 1406.6,613.2 1407.6,614.9 1408.6,616.0 1409.6,613.8 1410.6,611.6 1411.6,611.5 1412.6,613.9 1413.6,615.7 1414.6,614.0 1415.6,614.9 1416.6,614.4 1417.6,617.7 1418.6,616.3 1419.6,617.6 1420.6,618.3 1421.6,616.2 1422.6,616.7 1423.6,617.8 1424.6,616.9 1425.6,618.8 1426.6,617.9 1427.6,620.7 1428.6,620.8 1429.6,620.3 1430.6,623.8 1431.6,621.2 1432.6,623.7 1433.6,622.5 1434.6,622.3 1435.6,625.7 1436.6,623.4 1437.6,623.3 1438.6,621.8 1439.6,623.1 1440.6,622.1 1441.6,622.3 1442.6,624.4 1443.6,623.1 1444.6,627.7 1445.6,627.9 1446.6,628.7 1447.6,629.0 1448.6,627.6 1449.6,629.4 1450.6,630.2 1451.6,629.6 1452.6,628.7 1453.6,631.6 1454.6,633.9 1455.6,631.6 1456.6,633.2 1457.6,635.6 1458.6,633.3 1459.6,634.6 1460.6,630.1 1461.6,629.0 1462.6,629.3 1463.6,627.2 1464.6,626.6 1465.6,626.4 1466.6,622.4 1467.6,624.7 1468.6,624.2 1469.6,624.0 1470.6,623.7 1471.6,620.4 1472.6,619.8 1473.6,618.2 1474.6,616.0 1475.6,617.2 1476.6,615.5 1477.6,614.1 1478.6,612.5 1479.6,611.4 1480.6,610.3 1481.6,611.5 1482.6,610.6 1483.6,609.1 1484.6,608.9 1485.6,606.5 1486.6,603.8 1487.6,605.7 1488.6,605.6 1489.6,602.7 1490.6,604.8 1491.6,604.7 1492.6,606.1 1493.6,607.6 1494.6,607.1 1495.6,604.9 1496.6,605.3 1497.6,606.4 1498.6,606.9 1499.6,607.4" fill="none" stroke="#0c0c0c" stroke-width="1.35" stroke-linejoin="miter" stroke-miterlimit="3"/>
<rect x="818.80" y="643.40" width="681.40" height="46.90" fill="#e7e7e7"/>
<path d="M837.30 643.40V690.30M850.30 643.40V690.30M863.30 643.40V690.30M876.30 643.40V690.30M889.30 643.40V690.30M902.30 643.40V690.30M915.30 643.40V690.30M928.30 643.40V690.30M941.30 643.40V690.30M954.30 643.40V690.30M967.30 643.40V690.30M980.30 643.40V690.30M993.30 643.40V690.30M1006.30 643.40V690.30M1019.30 643.40V690.30M1032.30 643.40V690.30M1045.30 643.40V690.30M1058.30 643.40V690.30M1071.30 643.40V690.30M1084.30 643.40V690.30M1097.30 643.40V690.30M1110.30 643.40V690.30M1123.30 643.40V690.30M1136.30 643.40V690.30M1149.30 643.40V690.30M1162.30 643.40V690.30M1175.30 643.40V690.30M1188.30 643.40V690.30M1201.30 643.40V690.30M1214.30 643.40V690.30M1227.30 643.40V690.30M1240.30 643.40V690.30M1253.30 643.40V690.30M1266.30 643.40V690.30M1279.30 643.40V690.30M1292.30 643.40V690.30M1305.30 643.40V690.30M1318.30 643.40V690.30M1331.30 643.40V690.30M1344.30 643.40V690.30M1357.30 643.40V690.30M1370.30 643.40V690.30M1383.30 643.40V690.30M1396.30 643.40V690.30M1409.30 643.40V690.30M1422.30 643.40V690.30M1435.30 643.40V690.30M1448.30 643.40V690.30M1461.30 643.40V690.30M1474.30 643.40V690.30M1487.30 643.40V690.30M837.30 652.50H1500.20M837.30 662.05H1500.20M837.30 671.60H1500.20M837.30 681.15H1500.20" stroke="#dadada" stroke-width="1" fill="none" shape-rendering="crispEdges"/>
<path d="M837.30 655.40H1499.20" stroke="#f06a6a" stroke-width="1.25" stroke-dasharray="8.6 4.5" fill="none"/>
<path d="M1167.20 643.40V690.30" stroke="#9a9ae2" stroke-width="1" fill="none" shape-rendering="crispEdges"/>
<polyline points="837.6,672.0 838.6,674.0 839.6,670.8 840.6,671.1 841.6,673.7 842.6,676.5 843.6,676.9 844.6,677.8 845.6,675.5 846.6,673.6 847.6,674.6 848.6,674.2 849.6,673.6 850.6,672.4 851.6,674.7 852.6,675.1 853.6,674.7 854.6,673.4 855.6,673.3 856.6,672.8 857.6,673.5 858.6,673.3 859.6,672.2 860.6,675.0 861.6,675.1 862.6,674.4 863.6,673.8 864.6,673.4 865.6,672.0 866.6,672.7 867.6,669.5 868.6,670.2 869.6,672.5 870.6,673.3 871.6,674.1 872.6,674.2 873.6,673.7 874.6,671.8 875.6,673.1 876.6,673.3 877.6,673.6 878.6,673.7 879.6,670.7 880.6,670.2 881.6,670.4 882.6,669.9 883.6,672.4 884.6,670.9 885.6,674.4 886.6,671.1 887.6,671.2 888.6,674.2 889.6,673.4 890.6,670.6 891.6,673.8 892.6,671.7 893.6,672.2 894.6,670.8 895.6,668.8 896.6,671.0 897.6,669.8 898.6,671.3 899.6,673.4 900.6,672.5 901.6,673.1 902.6,670.7 903.6,670.6 904.6,671.1 905.6,674.0 906.6,669.6 907.6,670.3 908.6,667.5 909.6,670.2 910.6,671.6 911.6,671.0 912.6,669.0 913.6,667.9 914.6,668.4 915.6,668.9 916.6,668.3 917.6,666.7 918.6,666.9 919.6,665.3 920.6,666.2 921.6,667.1 922.6,667.7 923.6,669.3 924.6,670.4 925.6,668.5 926.6,667.5 927.6,669.2 928.6,670.6 929.6,670.2 930.6,669.4 931.6,668.7 932.6,670.8 933.6,673.3 934.6,673.1 935.6,673.1 936.6,672.1 937.6,673.8 938.6,674.4 939.6,671.8 940.6,675.1 941.6,675.4 942.6,673.9 943.6,670.7 944.6,670.5 945.6,672.6 946.6,672.8 947.6,676.2 948.6,673.5 949.6,673.6 950.6,673.8 951.6,676.7 952.6,677.0 953.6,675.3 954.6,672.3 955.6,672.6 956.6,671.4 957.6,672.5 958.6,670.4 959.6,673.8 960.6,672.4 961.6,671.6 962.6,673.7 963.6,674.2 964.6,674.5 965.6,671.8 966.6,673.9 967.6,674.7 968.6,670.8 969.6,672.5 970.6,668.6 971.6,673.3 972.6,674.5 973.6,671.0 974.6,671.2 975.6,672.1 976.6,673.0 977.6,672.5 978.6,671.5 979.6,672.0 980.6,673.2 981.6,672.1 982.6,670.3 983.6,670.6 984.6,670.5 985.6,671.5 986.6,672.6 987.6,672.2 988.6,672.9 989.6,669.6 990.6,668.6 991.6,668.8 992.6,668.4 993.6,667.8 994.6,667.5 995.6,667.7 996.6,667.8 997.6,669.9 998.6,672.6 999.6,670.8 1000.6,674.5 1001.6,672.7 1002.6,673.4 1003.6,673.4 1004.6,673.1 1005.6,673.0 1006.6,675.2 1007.6,671.3 1008.6,672.5 1009.6,669.5 1010.6,670.7 1011.6,669.6 1012.6,672.4 1013.6,672.8 1014.6,671.4 1015.6,670.5 1016.6,669.9 1017.6,671.5 1018.6,670.6 1019.6,671.4 1020.6,668.3 1021.6,669.3 1022.6,667.5 1023.6,668.2 1024.6,667.8 1025.6,669.4 1026.6,668.6 1027.6,671.6 1028.6,667.7 1029.6,667.3 1030.6,670.5 1031.6,672.4 1032.6,671.5 1033.6,675.7 1034.6,674.9 1035.6,672.0 1036.6,672.6 1037.6,674.5 1038.6,675.6 1039.6,673.6 1040.6,669.1 1041.6,668.9 1042.6,671.3 1043.6,670.9 1044.6,671.0 1045.6,670.4 1046.6,673.7 1047.6,670.8 1048.6,670.6 1049.6,669.5 1050.6,670.2 1051.6,671.3 1052.6,672.1 1053.6,670.4 1054.6,671.1 1055.6,671.4 1056.6,670.6 1057.6,669.2 1058.6,670.5 1059.6,670.9 1060.6,669.8 1061.6,668.0 1062.6,670.4 1063.6,670.5 1064.6,668.6 1065.6,667.4 1066.6,669.1 1067.6,669.4 1068.6,669.0 1069.6,669.1 1070.6,671.3 1071.6,669.6 1072.6,671.6 1073.6,670.8 1074.6,667.9 1075.6,668.4 1076.6,666.6 1077.6,668.9 1078.6,669.1 1079.6,669.2 1080.6,669.9 1081.6,673.4 1082.6,673.1 1083.6,670.7 1084.6,669.2 1085.6,668.1 1086.6,668.7 1087.6,667.5 1088.6,665.8 1089.6,670.4 1090.6,666.1 1091.6,668.0 1092.6,669.4 1093.6,671.6 1094.6,673.4 1095.6,672.0 1096.6,674.4 1097.6,672.5 1098.6,676.5 1099.6,679.0 1100.6,680.9 1101.6,681.4 1102.6,682.5 1103.6,685.3 1104.6,688.1 1105.6,686.5 1106.6,685.7 1107.6,686.0 1108.6,684.9 1109.6,681.9 1110.6,681.6 1111.6,682.6 1112.6,682.4 1113.6,682.0 1114.6,682.4 1115.6,681.1 1116.6,683.7 1117.6,680.3 1118.6,681.5 1119.6,684.4 1120.6,680.8 1121.6,680.0 1122.6,678.1 1123.6,677.6 1124.6,677.6 1125.6,673.6 1126.6,675.3 1127.6,673.7 1128.6,677.3 1129.6,678.2 1130.6,672.0 1131.6,671.0 1132.6,674.3 1133.6,672.1 1134.6,670.9 1135.6,671.6 1136.6,673.8 1137.6,669.1 1138.6,666.9 1139.6,666.8 1140.6,666.6 1141.6,664.7 1142.6,667.2 1143.6,667.8 1144.6,669.4 1145.6,671.1 1146.6,672.4 1147.6,671.2 1148.6,672.4 1149.6,673.1 1150.6,675.1 1151.6,674.7 1152.6,676.4 1153.6,679.4 1154.6,675.8 1155.6,676.0 1156.6,677.6 1157.6,677.7 1158.6,675.2 1159.6,674.1 1160.6,671.6 1161.6,673.2 1162.6,671.9 1163.6,672.6 1164.6,673.6 1165.6,675.5 1166.6,673.2 1167.6,672.0 1168.6,672.7 1169.6,675.7 1170.6,676.1 1171.6,675.8 1172.6,674.3 1173.6,673.4 1174.6,676.7 1175.6,677.3 1176.6,678.0 1177.6,681.6 1178.6,679.8 1179.6,678.7 1180.6,678.4 1181.6,676.7 1182.6,677.9 1183.6,680.7 1184.6,679.7 1185.6,685.5 1186.6,684.1 1187.6,689.0 1188.6,685.7 1189.6,685.6 1190.6,686.7 1191.6,688.8 1192.6,688.5 1193.6,689.2 1194.6,688.5 1195.6,689.0 1196.6,689.1 1197.6,689.1 1198.6,689.1 1199.6,688.4 1200.6,687.7 1201.6,686.6 1202.6,684.8 1203.6,689.1 1204.6,689.1 1205.6,688.9 1206.6,688.6 1207.6,688.8 1208.6,687.4 1209.6,688.5 1210.6,688.7 1211.6,688.9 1212.6,688.6 1213.6,688.8 1214.6,689.1 1215.6,687.6 1216.6,688.5 1217.6,688.9 1218.6,688.6 1219.6,687.7 1220.6,687.7 1221.6,686.2 1222.6,685.9 1223.6,688.4 1224.6,684.3 1225.6,683.4 1226.6,684.1 1227.6,683.3 1228.6,682.6 1229.6,683.2 1230.6,685.5 1231.6,685.4 1232.6,683.8 1233.6,685.4 1234.6,683.5 1235.6,682.5 1236.6,680.9 1237.6,681.4 1238.6,679.7 1239.6,678.1 1240.6,680.1 1241.6,680.7 1242.6,681.5 1243.6,680.2 1244.6,678.5 1245.6,677.8 1246.6,676.3 1247.6,678.2 1248.6,677.9 1249.6,678.4 1250.6,680.5 1251.6,681.4 1252.6,679.2 1253.6,680.6 1254.6,678.4 1255.6,681.9 1256.6,682.0 1257.6,682.7 1258.6,681.5 1259.6,680.7 1260.6,682.6 1261.6,680.6 1262.6,681.5 1263.6,680.6 1264.6,679.8 1265.6,678.8 1266.6,681.7 1267.6,679.9 1268.6,678.5 1269.6,678.6 1270.6,676.8 1271.6,676.2 1272.6,676.2 1273.6,672.0 1274.6,673.3 1275.6,672.5 1276.6,669.6 1277.6,671.1 1278.6,669.3 1279.6,672.3 1280.6,670.3 1281.6,672.9 1282.6,670.2 1283.6,670.1 1284.6,671.6 1285.6,670.0 1286.6,667.9 1287.6,671.6 1288.6,669.6 1289.6,670.5 1290.6,671.8 1291.6,670.5 1292.6,669.6 1293.6,668.7 1294.6,666.6 1295.6,667.6 1296.6,666.9 1297.6,664.6 1298.6,664.4 1299.6,666.3 1300.6,666.8 1301.6,665.9 1302.6,668.7 1303.6,669.4 1304.6,671.1 1305.6,666.3 1306.6,669.9 1307.6,665.9 1308.6,666.9 1309.6,666.6 1310.6,668.5 1311.6,668.8 1312.6,666.6 1313.6,665.3 1314.6,663.3 1315.6,665.8 1316.6,666.3 1317.6,665.7 1318.6,663.7 1319.6,665.1 1320.6,663.1 1321.6,666.7 1322.6,665.9 1323.6,664.4 1324.6,664.7 1325.6,663.2 1326.6,662.9 1327.6,666.0 1328.6,667.9 1329.6,666.3 1330.6,667.6 1331.6,667.2 1332.6,667.0 1333.6,668.3 1334.6,670.0 1335.6,670.1 1336.6,670.8 1337.6,668.3 1338.6,669.7 1339.6,669.1 1340.6,669.0 1341.6,670.0 1342.6,668.3 1343.6,669.1 1344.6,668.1 1345.6,666.8 1346.6,665.9 1347.6,669.9 1348.6,666.3 1349.6,668.3 1350.6,667.4 1351.6,669.4 1352.6,666.6 1353.6,665.1 1354.6,667.9 1355.6,667.7 1356.6,670.5 1357.6,672.2 1358.6,673.2 1359.6,670.9 1360.6,670.0 1361.6,669.1 1362.6,668.4 1363.6,666.4 1364.6,665.1 1365.6,665.8 1366.6,662.7 1367.6,663.0 1368.6,663.7 1369.6,662.9 1370.6,663.0 1371.6,662.7 1372.6,659.9 1373.6,662.0 1374.6,664.1 1375.6,662.4 1376.6,662.4 1377.6,663.5 1378.6,663.6 1379.6,662.8 1380.6,659.0 1381.6,659.0 1382.6,662.0 1383.6,661.4 1384.6,658.0 1385.6,660.3 1386.6,659.1 1387.6,655.0 1388.6,654.4 1389.6,655.3 1390.6,655.0 1391.6,655.3 1392.6,654.9 1393.6,654.0 1394.6,653.9 1395.6,654.1 1396.6,654.1 1397.6,653.1 1398.6,651.4 1399.6,657.9 1400.6,657.0 1401.6,658.9 1402.6,656.7 1403.6,655.8 1404.6,657.8 1405.6,657.4 1406.6,661.1 1407.6,661.0 1408.6,661.0 1409.6,661.4 1410.6,664.1 1411.6,665.7 1412.6,667.0 1413.6,666.2 1414.6,667.3 1415.6,668.3 1416.6,667.5 1417.6,670.1 1418.6,669.4 1419.6,671.0 1420.6,672.0 1421.6,672.4 1422.6,673.7 1423.6,674.8 1424.6,674.8 1425.6,673.9 1426.6,676.3 1427.6,674.2 1428.6,676.7 1429.6,673.0 1430.6,675.7 1431.6,677.3 1432.6,676.6 1433.6,677.2 1434.6,680.5 1435.6,679.7 1436.6,678.3 1437.6,678.1 1438.6,679.2 1439.6,680.4 1440.6,678.1 1441.6,679.8 1442.6,678.6 1443.6,679.3 1444.6,681.2 1445.6,680.4 1446.6,683.6 1447.6,678.9 1448.6,676.6 1449.6,678.9 1450.6,677.7 1451.6,679.4 1452.6,678.5 1453.6,677.1 1454.6,679.1 1455.6,676.2 1456.6,676.2 1457.6,676.2 1458.6,674.2 1459.6,675.8 1460.6,674.5 1461.6,676.0 1462.6,674.7 1463.6,677.0 1464.6,679.3 1465.6,678.4 1466.6,678.9 1467.6,676.9 1468.6,676.0 1469.6,676.0 1470.6,676.5 1471.6,679.2 1472.6,676.7 1473.6,673.8 1474.6,674.8 1475.6,676.2 1476.6,677.9 1477.6,679.4 1478.6,678.4 1479.6,678.7 1480.6,680.3 1481.6,682.6 1482.6,680.2 1483.6,680.1 1484.6,679.6 1485.6,680.6 1486.6,681.1 1487.6,684.7 1488.6,681.2 1489.6,682.6 1490.6,680.8 1491.6,682.5 1492.6,683.1 1493.6,685.0 1494.6,684.5 1495.6,682.2 1496.6,681.9 1497.6,677.4 1498.6,679.2 1499.6,678.1" fill="none" stroke="#0c0c0c" stroke-width="1.35" stroke-linejoin="miter" stroke-miterlimit="3"/>
<rect x="818.80" y="697.10" width="681.40" height="46.90" fill="#e7e7e7"/>
<path d="M837.30 697.10V744.00M850.30 697.10V744.00M863.30 697.10V744.00M876.30 697.10V744.00M889.30 697.10V744.00M902.30 697.10V744.00M915.30 697.10V744.00M928.30 697.10V744.00M941.30 697.10V744.00M954.30 697.10V744.00M967.30 697.10V744.00M980.30 697.10V744.00M993.30 697.10V744.00M1006.30 697.10V744.00M1019.30 697.10V744.00M1032.30 697.10V744.00M1045.30 697.10V744.00M1058.30 697.10V744.00M1071.30 697.10V744.00M1084.30 697.10V744.00M1097.30 697.10V744.00M1110.30 697.10V744.00M1123.30 697.10V744.00M1136.30 697.10V744.00M1149.30 697.10V744.00M1162.30 697.10V744.00M1175.30 697.10V744.00M1188.30 697.10V744.00M1201.30 697.10V744.00M1214.30 697.10V744.00M1227.30 697.10V744.00M1240.30 697.10V744.00M1253.30 697.10V744.00M1266.30 697.10V744.00M1279.30 697.10V744.00M1292.30 697.10V744.00M1305.30 697.10V744.00M1318.30 697.10V744.00M1331.30 697.10V744.00M1344.30 697.10V744.00M1357.30 697.10V744.00M1370.30 697.10V744.00M1383.30 697.10V744.00M1396.30 697.10V744.00M1409.30 697.10V744.00M1422.30 697.10V744.00M1435.30 697.10V744.00M1448.30 697.10V744.00M1461.30 697.10V744.00M1474.30 697.10V744.00M1487.30 697.10V744.00M837.30 706.20H1500.20M837.30 715.75H1500.20M837.30 725.30H1500.20M837.30 734.85H1500.20" stroke="#dadada" stroke-width="1" fill="none" shape-rendering="crispEdges"/>
<text x="833.80" y="708.70" text-anchor="end" class="yl">1.5</text>
<text x="833.80" y="718.25" text-anchor="end" class="yl">1</text>
<text x="833.80" y="727.80" text-anchor="end" class="yl">0.5</text>
<text x="833.80" y="737.35" text-anchor="end" class="yl">0</text>
<path d="M837.30 715.50H1499.20" stroke="#f06a6a" stroke-width="1.25" stroke-dasharray="8.6 4.5" fill="none"/>
<path d="M1167.20 697.10V744.00" stroke="#9a9ae2" stroke-width="1" fill="none" shape-rendering="crispEdges"/>
<polyline points="837.6,731.7 838.6,731.8 839.6,727.2 840.6,728.1 841.6,730.6 842.6,729.5 843.6,729.1 844.6,724.6 845.6,726.2 846.6,724.2 847.6,726.4 848.6,726.2 849.6,727.0 850.6,723.5 851.6,725.1 852.6,726.9 853.6,726.5 854.6,730.2 855.6,730.0 856.6,731.9 857.6,728.2 858.6,732.1 859.6,726.4 860.6,729.9 861.6,731.8 862.6,731.0 863.6,730.0 864.6,729.3 865.6,730.1 866.6,728.9 867.6,730.3 868.6,730.1 869.6,731.4 870.6,730.0 871.6,730.7 872.6,728.1 873.6,729.3 874.6,730.3 875.6,731.7 876.6,727.9 877.6,730.0 878.6,730.9 879.6,731.3 880.6,735.2 881.6,734.9 882.6,736.1 883.6,735.1 884.6,733.3 885.6,732.3 886.6,732.6 887.6,733.7 888.6,730.1 889.6,734.6 890.6,734.4 891.6,734.8 892.6,732.0 893.6,728.8 894.6,732.1 895.6,733.5 896.6,734.4 897.6,735.4 898.6,734.5 899.6,735.2 900.6,735.3 901.6,733.9 902.6,733.1 903.6,735.9 904.6,737.3 905.6,735.0 906.6,732.3 907.6,735.4 908.6,733.8 909.6,736.9 910.6,737.0 911.6,735.9 912.6,735.7 913.6,738.1 914.6,740.4 915.6,738.5 916.6,738.1 917.6,737.8 918.6,742.6 919.6,739.9 920.6,742.7 921.6,741.5 922.6,740.2 923.6,740.8 924.6,742.9 925.6,741.6 926.6,741.2 927.6,741.1 928.6,742.8 929.6,740.2 930.6,738.5 931.6,736.3 932.6,734.4 933.6,737.7 934.6,734.7 935.6,734.8 936.6,735.2 937.6,735.2 938.6,736.1 939.6,733.6 940.6,735.1 941.6,735.4 942.6,735.6 943.6,734.0 944.6,730.8 945.6,730.5 946.6,732.2 947.6,730.2 948.6,731.4 949.6,731.5 950.6,727.7 951.6,726.6 952.6,727.9 953.6,729.0 954.6,729.6 955.6,730.8 956.6,731.9 957.6,730.7 958.6,732.3 959.6,731.5 960.6,730.4 961.6,730.3 962.6,730.6 963.6,730.6 964.6,731.0 965.6,731.1 966.6,731.1 967.6,733.1 968.6,735.6 969.6,739.2 970.6,735.8 971.6,737.7 972.6,735.4 973.6,736.2 974.6,737.8 975.6,737.0 976.6,739.5 977.6,742.6 978.6,742.8 979.6,740.8 980.6,742.1 981.6,740.1 982.6,739.6 983.6,742.2 984.6,742.7 985.6,741.0 986.6,741.8 987.6,742.9 988.6,741.9 989.6,741.5 990.6,741.2 991.6,742.2 992.6,741.5 993.6,743.0 994.6,740.6 995.6,741.7 996.6,742.0 997.6,737.0 998.6,738.3 999.6,737.3 1000.6,737.7 1001.6,736.4 1002.6,738.5 1003.6,737.4 1004.6,734.8 1005.6,736.3 1006.6,736.2 1007.6,735.1 1008.6,733.4 1009.6,732.7 1010.6,734.6 1011.6,732.0 1012.6,734.7 1013.6,736.0 1014.6,734.6 1015.6,734.7 1016.6,733.9 1017.6,733.9 1018.6,735.0 1019.6,734.5 1020.6,734.6 1021.6,735.3 1022.6,735.1 1023.6,730.5 1024.6,730.0 1025.6,731.2 1026.6,733.4 1027.6,734.2 1028.6,733.0 1029.6,731.2 1030.6,732.2 1031.6,732.9 1032.6,732.0 1033.6,733.8 1034.6,732.1 1035.6,734.2 1036.6,730.2 1037.6,735.4 1038.6,736.9 1039.6,734.6 1040.6,731.4 1041.6,729.4 1042.6,732.6 1043.6,733.5 1044.6,733.0 1045.6,734.8 1046.6,736.6 1047.6,738.5 1048.6,734.8 1049.6,741.2 1050.6,741.5 1051.6,740.1 1052.6,741.6 1053.6,741.2 1054.6,740.4 1055.6,739.3 1056.6,737.6 1057.6,738.1 1058.6,739.0 1059.6,739.0 1060.6,739.7 1061.6,741.4 1062.6,740.4 1063.6,741.5 1064.6,742.1 1065.6,742.3 1066.6,740.3 1067.6,741.8 1068.6,739.5 1069.6,742.4 1070.6,739.4 1071.6,739.2 1072.6,738.0 1073.6,739.3 1074.6,739.7 1075.6,742.8 1076.6,741.7 1077.6,741.3 1078.6,741.1 1079.6,741.9 1080.6,739.5 1081.6,739.9 1082.6,739.5 1083.6,740.6 1084.6,740.8 1085.6,738.4 1086.6,739.7 1087.6,736.9 1088.6,739.1 1089.6,737.0 1090.6,736.6 1091.6,733.5 1092.6,730.1 1093.6,732.2 1094.6,729.8 1095.6,728.5 1096.6,724.5 1097.6,723.1 1098.6,726.3 1099.6,726.1 1100.6,727.5 1101.6,730.9 1102.6,732.6 1103.6,731.5 1104.6,733.6 1105.6,736.0 1106.6,733.4 1107.6,734.6 1108.6,732.1 1109.6,731.9 1110.6,730.6 1111.6,731.2 1112.6,733.2 1113.6,732.4 1114.6,732.7 1115.6,732.7 1116.6,730.4 1117.6,730.1 1118.6,734.6 1119.6,734.7 1120.6,731.8 1121.6,733.1 1122.6,734.0 1123.6,734.1 1124.6,731.7 1125.6,734.1 1126.6,732.9 1127.6,734.2 1128.6,735.2 1129.6,737.4 1130.6,741.6 1131.6,740.7 1132.6,741.6 1133.6,742.0 1134.6,740.1 1135.6,742.1 1136.6,738.5 1137.6,738.8 1138.6,737.1 1139.6,738.3 1140.6,738.3 1141.6,739.0 1142.6,738.3 1143.6,737.3 1144.6,736.4 1145.6,736.9 1146.6,738.5 1147.6,736.7 1148.6,736.6 1149.6,735.4 1150.6,732.8 1151.6,735.7 1152.6,736.0 1153.6,734.8 1154.6,732.5 1155.6,730.7 1156.6,730.4 1157.6,727.6 1158.6,729.6 1159.6,729.1 1160.6,727.2 1161.6,729.2 1162.6,730.2 1163.6,731.1 1164.6,731.6 1165.6,732.3 1166.6,734.8 1167.6,736.1 1168.6,738.0 1169.6,738.0 1170.6,737.6 1171.6,739.2 1172.6,739.5 1173.6,741.6 1174.6,741.6 1175.6,741.2 1176.6,742.6 1177.6,742.5 1178.6,742.1 1179.6,740.6 1180.6,740.1 1181.6,741.9 1182.6,740.5 1183.6,741.8 1184.6,740.6 1185.6,741.0 1186.6,742.8 1187.6,742.6 1188.6,742.5 1189.6,742.2 1190.6,742.0 1191.6,741.8 1192.6,741.2 1193.6,742.9 1194.6,743.0 1195.6,742.8 1196.6,741.7 1197.6,741.9 1198.6,742.2 1199.6,742.7 1200.6,742.8 1201.6,742.0 1202.6,741.6 1203.6,741.9 1204.6,742.6 1205.6,742.7 1206.6,740.9 1207.6,742.2 1208.6,742.5 1209.6,739.4 1210.6,742.0 1211.6,743.0 1212.6,740.1 1213.6,742.0 1214.6,741.7 1215.6,739.7 1216.6,740.2 1217.6,742.2 1218.6,743.0 1219.6,742.8 1220.6,742.6 1221.6,742.5 1222.6,742.3 1223.6,742.8 1224.6,740.0 1225.6,740.1 1226.6,741.5 1227.6,742.7 1228.6,742.2 1229.6,741.3 1230.6,742.9 1231.6,742.1 1232.6,743.0 1233.6,740.9 1234.6,741.5 1235.6,742.4 1236.6,740.7 1237.6,740.7 1238.6,742.8 1239.6,742.3 1240.6,737.9 1241.6,735.9 1242.6,734.7 1243.6,732.6 1244.6,733.2 1245.6,731.1 1246.6,731.5 1247.6,729.5 1248.6,731.1 1249.6,724.8 1250.6,725.1 1251.6,724.9 1252.6,723.6 1253.6,721.3 1254.6,723.8 1255.6,724.3 1256.6,726.7 1257.6,725.3 1258.6,724.5 1259.6,726.2 1260.6,729.8 1261.6,731.7 1262.6,734.2 1263.6,736.1 1264.6,736.7 1265.6,735.8 1266.6,733.2 1267.6,736.1 1268.6,732.2 1269.6,731.9 1270.6,733.7 1271.6,735.5 1272.6,736.2 1273.6,734.1 1274.6,729.2 1275.6,727.9 1276.6,729.1 1277.6,728.6 1278.6,728.6 1279.6,729.6 1280.6,733.0 1281.6,733.6 1282.6,733.6 1283.6,730.6 1284.6,730.1 1285.6,731.3 1286.6,731.1 1287.6,729.7 1288.6,727.0 1289.6,728.9 1290.6,729.3 1291.6,729.9 1292.6,729.8 1293.6,729.8 1294.6,726.1 1295.6,726.0 1296.6,728.6 1297.6,726.1 1298.6,725.7 1299.6,726.7 1300.6,727.0 1301.6,729.3 1302.6,726.8 1303.6,728.6 1304.6,725.9 1305.6,724.1 1306.6,725.7 1307.6,726.2 1308.6,726.1 1309.6,727.6 1310.6,725.8 1311.6,722.0 1312.6,724.5 1313.6,726.9 1314.6,726.1 1315.6,726.5 1316.6,725.8 1317.6,723.6 1318.6,728.0 1319.6,728.3 1320.6,729.6 1321.6,728.8 1322.6,726.3 1323.6,727.0 1324.6,727.0 1325.6,724.7 1326.6,723.6 1327.6,727.2 1328.6,728.9 1329.6,730.5 1330.6,728.0 1331.6,725.0 1332.6,726.5 1333.6,727.1 1334.6,729.5 1335.6,728.7 1336.6,728.0 1337.6,728.1 1338.6,728.7 1339.6,727.4 1340.6,727.6 1341.6,728.4 1342.6,728.3 1343.6,729.6 1344.6,729.3 1345.6,729.5 1346.6,725.4 1347.6,727.5 1348.6,727.9 1349.6,730.4 1350.6,728.6 1351.6,731.9 1352.6,731.1 1353.6,731.0 1354.6,727.1 1355.6,726.1 1356.6,727.0 1357.6,725.8 1358.6,725.8 1359.6,724.8 1360.6,727.6 1361.6,725.2 1362.6,724.9 1363.6,723.6 1364.6,723.8 1365.6,725.3 1366.6,726.3 1367.6,729.5 1368.6,727.6 1369.6,729.2 1370.6,727.2 1371.6,724.3 1372.6,726.1 1373.6,725.1 1374.6,724.1 1375.6,722.0 1376.6,722.2 1377.6,722.7 1378.6,722.8 1379.6,722.1 1380.6,723.0 1381.6,722.2 1382.6,720.3 1383.6,719.2 1384.6,722.6 1385.6,719.4 1386.6,723.9 1387.6,724.8 1388.6,718.3 1389.6,720.2 1390.6,721.4 1391.6,721.0 1392.6,721.5 1393.6,719.9 1394.6,717.6 1395.6,719.4 1396.6,722.2 1397.6,720.6 1398.6,717.3 1399.6,718.6 1400.6,718.3 1401.6,721.7 1402.6,718.1 1403.6,718.8 1404.6,721.2 1405.6,718.6 1406.6,720.3 1407.6,720.0 1408.6,718.5 1409.6,718.9 1410.6,714.5 1411.6,716.0 1412.6,715.3 1413.6,714.4 1414.6,716.0 1415.6,715.8 1416.6,714.5 1417.6,718.3 1418.6,718.2 1419.6,718.3 1420.6,716.3 1421.6,714.7 1422.6,717.4 1423.6,720.4 1424.6,715.5 1425.6,717.4 1426.6,718.1 1427.6,715.7 1428.6,716.1 1429.6,715.6 1430.6,716.4 1431.6,712.4 1432.6,713.2 1433.6,715.3 1434.6,714.9 1435.6,716.2 1436.6,720.3 1437.6,720.0 1438.6,721.0 1439.6,721.5 1440.6,727.1 1441.6,727.3 1442.6,725.2 1443.6,726.8 1444.6,724.7 1445.6,726.2 1446.6,727.5 1447.6,730.1 1448.6,727.8 1449.6,728.0 1450.6,725.4 1451.6,724.8 1452.6,728.6 1453.6,725.2 1454.6,725.7 1455.6,724.4 1456.6,723.2 1457.6,722.7 1458.6,724.6 1459.6,722.0 1460.6,719.7 1461.6,719.7 1462.6,722.6 1463.6,722.1 1464.6,718.3 1465.6,719.8 1466.6,717.0 1467.6,714.5 1468.6,716.5 1469.6,717.3 1470.6,716.1 1471.6,714.0 1472.6,712.6 1473.6,714.2 1474.6,710.4 1475.6,714.8 1476.6,714.2 1477.6,716.1 1478.6,717.6 1479.6,719.0 1480.6,717.9 1481.6,717.9 1482.6,715.5 1483.6,716.8 1484.6,720.8 1485.6,721.3 1486.6,721.4 1487.6,720.4 1488.6,722.2 1489.6,721.6 1490.6,721.1 1491.6,721.4 1492.6,723.4 1493.6,722.2 1494.6,721.7 1495.6,724.2 1496.6,725.7 1497.6,726.4 1498.6,724.3 1499.6,723.1" fill="none" stroke="#0c0c0c" stroke-width="1.35" stroke-linejoin="miter" stroke-miterlimit="3"/>
<rect x="818.80" y="750.80" width="681.40" height="46.90" fill="#e7e7e7"/>
<path d="M837.30 750.80V797.70M850.30 750.80V797.70M863.30 750.80V797.70M876.30 750.80V797.70M889.30 750.80V797.70M902.30 750.80V797.70M915.30 750.80V797.70M928.30 750.80V797.70M941.30 750.80V797.70M954.30 750.80V797.70M967.30 750.80V797.70M980.30 750.80V797.70M993.30 750.80V797.70M1006.30 750.80V797.70M1019.30 750.80V797.70M1032.30 750.80V797.70M1045.30 750.80V797.70M1058.30 750.80V797.70M1071.30 750.80V797.70M1084.30 750.80V797.70M1097.30 750.80V797.70M1110.30 750.80V797.70M1123.30 750.80V797.70M1136.30 750.80V797.70M1149.30 750.80V797.70M1162.30 750.80V797.70M1175.30 750.80V797.70M1188.30 750.80V797.70M1201.30 750.80V797.70M1214.30 750.80V797.70M1227.30 750.80V797.70M1240.30 750.80V797.70M1253.30 750.80V797.70M1266.30 750.80V797.70M1279.30 750.80V797.70M1292.30 750.80V797.70M1305.30 750.80V797.70M1318.30 750.80V797.70M1331.30 750.80V797.70M1344.30 750.80V797.70M1357.30 750.80V797.70M1370.30 750.80V797.70M1383.30 750.80V797.70M1396.30 750.80V797.70M1409.30 750.80V797.70M1422.30 750.80V797.70M1435.30 750.80V797.70M1448.30 750.80V797.70M1461.30 750.80V797.70M1474.30 750.80V797.70M1487.30 750.80V797.70M837.30 759.90H1500.20M837.30 769.45H1500.20M837.30 779.00H1500.20M837.30 788.55H1500.20" stroke="#dadada" stroke-width="1" fill="none" shape-rendering="crispEdges"/>
<text x="833.80" y="762.40" text-anchor="end" class="yl">1.5</text>
<text x="833.80" y="771.95" text-anchor="end" class="yl">1</text>
<text x="833.80" y="781.50" text-anchor="end" class="yl">0.5</text>
<text x="833.80" y="791.05" text-anchor="end" class="yl">0</text>
<path d="M837.30 769.20H1499.20" stroke="#f06a6a" stroke-width="1.25" stroke-dasharray="8.6 4.5" fill="none"/>
<path d="M1167.20 750.80V797.70" stroke="#9a9ae2" stroke-width="1" fill="none" shape-rendering="crispEdges"/>
<polyline points="837.6,785.4 838.6,785.5 839.6,780.9 840.6,781.8 841.6,784.3 842.6,783.2 843.6,782.8 844.6,778.3 845.6,779.9 846.6,777.9 847.6,780.1 848.6,779.9 849.6,780.7 850.6,777.2 851.6,778.8 852.6,780.6 853.6,780.2 854.6,783.9 855.6,783.7 856.6,785.6 857.6,781.9 858.6,785.8 859.6,780.1 860.6,783.6 861.6,785.5 862.6,784.7 863.6,783.7 864.6,783.0 865.6,783.8 866.6,782.6 867.6,784.0 868.6,783.8 869.6,785.1 870.6,783.7 871.6,784.4 872.6,781.8 873.6,783.0 874.6,784.0 875.6,785.4 876.6,781.6 877.6,783.7 878.6,784.6 879.6,785.0 880.6,788.9 881.6,788.6 882.6,789.8 883.6,788.8 884.6,787.0 885.6,786.0 886.6,786.3 887.6,787.4 888.6,783.8 889.6,788.3 890.6,788.1 891.6,788.5 892.6,785.7 893.6,782.5 894.6,785.8 895.6,787.2 896.6,788.1 897.6,789.1 898.6,788.2 899.6,788.9 900.6,789.0 901.6,787.6 902.6,786.8 903.6,789.6 904.6,791.0 905.6,788.7 906.6,786.0 907.6,789.1 908.6,787.5 909.6,790.6 910.6,790.7 911.6,789.6 912.6,789.4 913.6,791.8 914.6,794.1 915.6,792.2 916.6,791.8 917.6,791.5 918.6,796.3 919.6,793.6 920.6,796.4 921.6,795.2 922.6,793.9 923.6,794.5 924.6,796.6 925.6,795.3 926.6,794.9 927.6,794.8 928.6,796.5 929.6,793.9 930.6,792.2 931.6,790.0 932.6,788.1 933.6,791.4 934.6,788.4 935.6,788.5 936.6,788.9 937.6,788.9 938.6,789.8 939.6,787.3 940.6,788.8 941.6,789.1 942.6,789.3 943.6,787.7 944.6,784.5 945.6,784.2 946.6,785.9 947.6,783.9 948.6,785.1 949.6,785.2 950.6,781.4 951.6,780.3 952.6,781.6 953.6,782.7 954.6,783.3 955.6,784.5 956.6,785.6 957.6,784.4 958.6,786.0 959.6,785.2 960.6,784.1 961.6,784.0 962.6,784.3 963.6,784.3 964.6,784.7 965.6,784.8 966.6,784.8 967.6,786.8 968.6,789.3 969.6,792.9 970.6,789.5 971.6,791.4 972.6,789.1 973.6,789.9 974.6,791.5 975.6,790.7 976.6,793.2 977.6,796.3 978.6,796.5 979.6,794.5 980.6,795.8 981.6,793.8 982.6,793.3 983.6,795.9 984.6,796.4 985.6,794.7 986.6,795.5 987.6,796.6 988.6,795.6 989.6,795.2 990.6,794.9 991.6,795.9 992.6,795.2 993.6,796.7 994.6,794.3 995.6,795.4 996.6,795.7 997.6,790.7 998.6,792.0 999.6,791.0 1000.6,791.4 1001.6,790.1 1002.6,792.2 1003.6,791.1 1004.6,788.5 1005.6,790.0 1006.6,789.9 1007.6,788.8 1008.6,787.1 1009.6,786.4 1010.6,788.3 1011.6,785.7 1012.6,788.4 1013.6,789.7 1014.6,788.3 1015.6,788.4 1016.6,787.6 1017.6,787.6 1018.6,788.7 1019.6,788.2 1020.6,788.3 1021.6,789.0 1022.6,788.8 1023.6,784.2 1024.6,783.7 1025.6,784.9 1026.6,787.1 1027.6,787.9 1028.6,786.7 1029.6,784.9 1030.6,785.9 1031.6,786.6 1032.6,785.7 1033.6,787.5 1034.6,785.8 1035.6,787.9 1036.6,783.9 1037.6,789.1 1038.6,790.6 1039.6,788.3 1040.6,785.1 1041.6,783.1 1042.6,786.3 1043.6,787.2 1044.6,786.7 1045.6,788.5 1046.6,790.3 1047.6,792.2 1048.6,788.5 1049.6,794.9 1050.6,795.2 1051.6,793.8 1052.6,795.3 1053.6,794.9 1054.6,794.1 1055.6,793.0 1056.6,791.3 1057.6,791.8 1058.6,792.7 1059.6,792.7 1060.6,793.4 1061.6,795.1 1062.6,794.1 1063.6,795.2 1064.6,795.8 1065.6,796.0 1066.6,794.0 1067.6,795.5 1068.6,793.2 1069.6,796.1 1070.6,793.1 1071.6,792.9 1072.6,791.7 1073.6,793.0 1074.6,793.4 1075.6,796.5 1076.6,795.4 1077.6,795.0 1078.6,794.8 1079.6,795.6 1080.6,793.2 1081.6,793.6 1082.6,793.2 1083.6,794.3 1084.6,794.5 1085.6,792.1 1086.6,793.4 1087.6,790.6 1088.6,792.8 1089.6,790.7 1090.6,790.3 1091.6,787.2 1092.6,783.8 1093.6,785.9 1094.6,783.5 1095.6,782.2 1096.6,778.2 1097.6,776.8 1098.6,780.0 1099.6,779.8 1100.6,781.2 1101.6,784.6 1102.6,786.3 1103.6,785.2 1104.6,787.3 1105.6,789.7 1106.6,787.1 1107.6,788.3 1108.6,785.8 1109.6,785.6 1110.6,784.3 1111.6,784.9 1112.6,786.9 1113.6,786.1 1114.6,786.4 1115.6,786.4 1116.6,784.1 1117.6,783.8 1118.6,788.3 1119.6,788.4 1120.6,785.5 1121.6,786.8 1122.6,787.7 1123.6,787.8 1124.6,785.4 1125.6,787.8 1126.6,786.6 1127.6,787.9 1128.6,788.9 1129.6,791.1 1130.6,795.3 1131.6,794.4 1132.6,795.3 1133.6,795.7 1134.6,793.8 1135.6,795.8 1136.6,792.2 1137.6,792.5 1138.6,790.8 1139.6,792.0 1140.6,792.0 1141.6,792.7 1142.6,792.0 1143.6,791.0 1144.6,790.1 1145.6,790.6 1146.6,792.2 1147.6,790.4 1148.6,790.3 1149.6,789.1 1150.6,786.5 1151.6,789.4 1152.6,789.7 1153.6,788.5 1154.6,786.2 1155.6,784.4 1156.6,784.1 1157.6,781.3 1158.6,783.3 1159.6,782.8 1160.6,780.9 1161.6,782.9 1162.6,783.9 1163.6,784.8 1164.6,785.3 1165.6,786.0 1166.6,788.5 1167.6,789.8 1168.6,791.7 1169.6,791.7 1170.6,791.3 1171.6,792.9 1172.6,793.2 1173.6,795.3 1174.6,795.3 1175.6,794.9 1176.6,796.3 1177.6,796.2 1178.6,795.8 1179.6,794.3 1180.6,793.8 1181.6,795.6 1182.6,794.2 1183.6,795.5 1184.6,794.3 1185.6,794.7 1186.6,796.5 1187.6,796.3 1188.6,796.2 1189.6,795.9 1190.6,795.7 1191.6,795.5 1192.6,794.9 1193.6,796.6 1194.6,796.7 1195.6,796.5 1196.6,795.4 1197.6,795.6 1198.6,795.9 1199.6,796.4 1200.6,796.5 1201.6,795.7 1202.6,795.3 1203.6,795.6 1204.6,796.3 1205.6,796.4 1206.6,794.6 1207.6,795.9 1208.6,796.2 1209.6,793.1 1210.6,795.7 1211.6,796.7 1212.6,793.8 1213.6,795.7 1214.6,795.4 1215.6,793.4 1216.6,793.9 1217.6,795.9 1218.6,796.7 1219.6,796.5 1220.6,796.3 1221.6,796.2 1222.6,796.0 1223.6,796.5 1224.6,793.7 1225.6,793.8 1226.6,795.2 1227.6,796.4 1228.6,795.9 1229.6,795.0 1230.6,796.6 1231.6,795.8 1232.6,796.7 1233.6,794.6 1234.6,795.2 1235.6,796.1 1236.6,794.4 1237.6,794.4 1238.6,796.5 1239.6,796.0 1240.6,791.6 1241.6,789.6 1242.6,788.4 1243.6,786.3 1244.6,786.9 1245.6,784.8 1246.6,785.2 1247.6,783.2 1248.6,784.8 1249.6,778.5 1250.6,778.8 1251.6,778.6 1252.6,777.3 1253.6,775.0 1254.6,777.5 1255.6,778.0 1256.6,780.4 1257.6,779.0 1258.6,778.2 1259.6,779.9 1260.6,783.5 1261.6,785.4 1262.6,787.9 1263.6,789.8 1264.6,790.4 1265.6,789.5 1266.6,786.9 1267.6,789.8 1268.6,785.9 1269.6,785.6 1270.6,787.4 1271.6,789.2 1272.6,789.9 1273.6,787.8 1274.6,782.9 1275.6,781.6 1276.6,782.8 1277.6,782.3 1278.6,782.3 1279.6,783.3 1280.6,786.7 1281.6,787.3 1282.6,787.3 1283.6,784.3 1284.6,783.8 1285.6,785.0 1286.6,784.8 1287.6,783.4 1288.6,780.7 1289.6,782.6 1290.6,783.0 1291.6,783.6 1292.6,783.5 1293.6,783.5 1294.6,779.8 1295.6,779.7 1296.6,782.3 1297.6,779.8 1298.6,779.4 1299.6,780.4 1300.6,780.7 1301.6,783.0 1302.6,780.5 1303.6,782.3 1304.6,779.6 1305.6,777.8 1306.6,779.4 1307.6,779.9 1308.6,779.8 1309.6,781.3 1310.6,779.5 1311.6,775.7 1312.6,778.2 1313.6,780.6 1314.6,779.8 1315.6,780.2 1316.6,779.5 1317.6,777.3 1318.6,781.7 1319.6,782.0 1320.6,783.3 1321.6,782.5 1322.6,780.0 1323.6,780.7 1324.6,780.7 1325.6,778.4 1326.6,777.3 1327.6,780.9 1328.6,782.6 1329.6,784.2 1330.6,781.7 1331.6,778.7 1332.6,780.2 1333.6,780.8 1334.6,783.2 1335.6,782.4 1336.6,781.7 1337.6,781.8 1338.6,782.4 1339.6,781.1 1340.6,781.3 1341.6,782.1 1342.6,782.0 1343.6,783.3 1344.6,783.0 1345.6,783.2 1346.6,779.1 1347.6,781.2 1348.6,781.6 1349.6,784.1 1350.6,782.3 1351.6,785.6 1352.6,784.8 1353.6,784.7 1354.6,780.8 1355.6,779.8 1356.6,780.7 1357.6,779.5 1358.6,779.5 1359.6,778.5 1360.6,781.3 1361.6,778.9 1362.6,778.6 1363.6,777.3 1364.6,777.5 1365.6,779.0 1366.6,780.0 1367.6,783.2 1368.6,781.3 1369.6,782.9 1370.6,780.9 1371.6,778.0 1372.6,779.8 1373.6,778.8 1374.6,777.8 1375.6,775.7 1376.6,775.9 1377.6,776.4 1378.6,776.5 1379.6,775.8 1380.6,776.7 1381.6,775.9 1382.6,774.0 1383.6,772.9 1384.6,776.3 1385.6,773.1 1386.6,777.6 1387.6,778.5 1388.6,772.0 1389.6,773.9 1390.6,775.1 1391.6,774.7 1392.6,775.2 1393.6,773.6 1394.6,771.3 1395.6,773.1 1396.6,775.9 1397.6,774.3 1398.6,771.0 1399.6,772.3 1400.6,772.0 1401.6,775.4 1402.6,771.8 1403.6,772.5 1404.6,774.9 1405.6,772.3 1406.6,774.0 1407.6,773.7 1408.6,772.2 1409.6,772.6 1410.6,768.2 1411.6,769.7 1412.6,769.0 1413.6,768.1 1414.6,769.7 1415.6,769.5 1416.6,768.2 1417.6,772.0 1418.6,771.9 1419.6,772.0 1420.6,770.0 1421.6,768.4 1422.6,771.1 1423.6,774.1 1424.6,769.2 1425.6,771.1 1426.6,771.8 1427.6,769.4 1428.6,769.8 1429.6,769.3 1430.6,770.1 1431.6,766.1 1432.6,766.9 1433.6,769.0 1434.6,768.6 1435.6,769.9 1436.6,774.0 1437.6,773.7 1438.6,774.7 1439.6,775.2 1440.6,780.8 1441.6,781.0 1442.6,778.9 1443.6,780.5 1444.6,778.4 1445.6,779.9 1446.6,781.2 1447.6,783.8 1448.6,781.5 1449.6,781.7 1450.6,779.1 1451.6,778.5 1452.6,782.3 1453.6,778.9 1454.6,779.4 1455.6,778.1 1456.6,776.9 1457.6,776.4 1458.6,778.3 1459.6,775.7 1460.6,773.4 1461.6,773.4 1462.6,776.3 1463.6,775.8 1464.6,772.0 1465.6,773.5 1466.6,770.7 1467.6,768.2 1468.6,770.2 1469.6,771.0 1470.6,769.8 1471.6,767.7 1472.6,766.3 1473.6,767.9 1474.6,764.1 1475.6,768.5 1476.6,767.9 1477.6,769.8 1478.6,771.3 1479.6,772.7 1480.6,771.6 1481.6,771.6 1482.6,769.2 1483.6,770.5 1484.6,774.5 1485.6,775.0 1486.6,775.1 1487.6,774.1 1488.6,775.9 1489.6,775.3 1490.6,774.8 1491.6,775.1 1492.6,777.1 1493.6,775.9 1494.6,775.4 1495.6,777.9 1496.6,779.4 1497.6,780.1 1498.6,778.0 1499.6,776.8" fill="none" stroke="#0c0c0c" stroke-width="1.35" stroke-linejoin="miter" stroke-miterlimit="3"/>
<path d="M1436.8 255.3H1447.2" stroke="#ddd" stroke-width="4" stroke-linecap="round"/><rect x="1462.0" y="246.3" width="12.5" height="10" fill="none" stroke="#ddd" stroke-width="2"/><rect x="1461.0" y="245.3" width="14.5" height="3.6" fill="#ddd"/><path d="M1488.9 246.9L1498.9 256.9M1498.9 246.9L1488.9 256.9" stroke="#ddd" stroke-width="3.6"/></svg>
<div class="sb" style="left:87.3px;top:572.1px"><svg width="29" height="29"><circle cx="14.7" cy="14.3" r="8.8" fill="#fff"/><path d="M20.24 14.30H10.74 M15.40 9.64L10.74 14.30L15.40 18.96" stroke="#555" stroke-width="2.73" fill="none" stroke-linecap="butt" stroke-linejoin="miter"/></svg></div>
<div class="sb" style="left:121.3px;top:572.1px"><svg width="29" height="29"><circle cx="14.7" cy="14.3" r="8.8" fill="#fff"/><path d="M9.16 14.30H18.66 M14.00 9.64L18.66 14.30L14.00 18.96" stroke="#555" stroke-width="2.73" fill="none" stroke-linecap="butt" stroke-linejoin="miter"/></svg></div>
<div class="a" style="left:167.7px;top:581.4px;width:602.8px;height:10px;background:#555"></div>
<div class="a" style="left:402.5px;top:582.6px;width:46px;height:7.6px;background:#3b3b3b"></div>
<svg class="a" style="left:167.7px;top:581.4px" width="602.8" height="10"><path d="M2.5 5L6.5 1.3V8.7Z M600.3 5L596.3 1.3V8.7Z" fill="#333"/></svg>
</div>
<div class="dlg" style="left:301px;top:201px;width:790px;height:503.6px">
<div class="dt" style="left:10px;top:9.6px;font-size:14.3px">Rail Profile</div>
<div class="rl" style="left:11.3px;top:39.4px">Top Wear<br>Volume<br>Left Rail</div>
<div class="rl" style="left:11.3px;top:93.1px">Side Wear<br>Volume<br>Left Rail</div>
<div class="rl" style="left:11.3px;top:146.8px">Top Wear<br>Max Left Rail</div>
<div class="rl" style="left:11.3px;top:200.5px">Side Wear<br>Max Left Rail</div>
<div class="rl" style="left:11.3px;top:254.2px">Top Wear<br>Volume<br>Right Rail</div>
<div class="rl" style="left:11.3px;top:307.9px">Side Wear<br>Volume<br>Right Rail</div>
<div class="rl" style="left:11.3px;top:361.6px">Top Wear<br>Max Right<br>Rail</div>
<div class="rl" style="left:11.3px;top:415.3px">Side Wear<br>Max Right<br>Rail</div>
<svg class="a" style="left:0;top:0" width="790" height="503.6" viewBox="301 201 790 503.6"><rect x="398.80" y="237.10" width="681.70" height="46.90" fill="#e7e7e7"/>
<path d="M417.30 237.10V284.00M430.30 237.10V284.00M443.30 237.10V284.00M456.30 237.10V284.00M469.30 237.10V284.00M482.30 237.10V284.00M495.30 237.10V284.00M508.30 237.10V284.00M521.30 237.10V284.00M534.30 237.10V284.00M547.30 237.10V284.00M560.30 237.10V284.00M573.30 237.10V284.00M586.30 237.10V284.00M599.30 237.10V284.00M612.30 237.10V284.00M625.30 237.10V284.00M638.30 237.10V284.00M651.30 237.10V284.00M664.30 237.10V284.00M677.30 237.10V284.00M690.30 237.10V284.00M703.30 237.10V284.00M716.30 237.10V284.00M729.30 237.10V284.00M742.30 237.10V284.00M755.30 237.10V284.00M768.30 237.10V284.00M781.30 237.10V284.00M794.30 237.10V284.00M807.30 237.10V284.00M820.30 237.10V284.00M833.30 237.10V284.00M846.30 237.10V284.00M859.30 237.10V284.00M872.30 237.10V284.00M885.30 237.10V284.00M898.30 237.10V284.00M911.30 237.10V284.00M924.30 237.10V284.00M937.30 237.10V284.00M950.30 237.10V284.00M963.30 237.10V284.00M976.30 237.10V284.00M989.30 237.10V284.00M1002.30 237.10V284.00M1015.30 237.10V284.00M1028.30 237.10V284.00M1041.30 237.10V284.00M1054.30 237.10V284.00M1067.30 237.10V284.00M417.30 246.20H1080.50M417.30 255.75H1080.50M417.30 265.30H1080.50M417.30 274.85H1080.50" stroke="#dadada" stroke-width="1" fill="none" shape-rendering="crispEdges"/>
<text x="413.80" y="248.70" text-anchor="end" class="yl">4</text>
<text x="413.80" y="258.25" text-anchor="end" class="yl">3</text>
<text x="413.80" y="267.80" text-anchor="end" class="yl">2</text>
<text x="413.80" y="277.35" text-anchor="end" class="yl">1</text>
<path d="M417.30 264.90H1079.50" stroke="#ee8a8a" stroke-width="1.7" stroke-dasharray="9.1 4.17" fill="none"/>
<path d="M761.30 237.10V284.00" stroke="#9a9ae2" stroke-width="1" fill="none" shape-rendering="crispEdges"/>
<polyline points="417.8,277.2 418.8,274.5 419.8,273.8 420.8,277.0 421.8,277.6 422.8,277.1 423.8,279.5 424.8,280.5 425.8,280.9 426.8,281.3 427.8,282.1 428.8,278.2 429.8,279.6 430.8,275.1 431.8,278.7 432.8,278.2 433.8,277.1 434.8,274.7 435.8,276.7 436.8,273.2 437.8,273.8 438.8,277.8 439.8,275.6 440.8,276.4 441.8,275.0 442.8,275.9 443.8,274.8 444.8,275.7 445.8,276.8 446.8,276.6 447.8,276.3 448.8,275.5 449.8,274.8 450.8,274.2 451.8,276.0 452.8,274.2 453.8,272.0 454.8,272.2 455.8,274.5 456.8,269.5 457.8,272.4 458.8,277.9 459.8,276.0 460.8,276.8 461.8,274.3 462.8,276.7 463.8,275.2 464.8,276.3 465.8,277.8 466.8,274.6 467.8,273.4 468.8,275.6 469.8,275.5 470.8,273.5 471.8,271.7 472.8,273.5 473.8,273.6 474.8,273.0 475.8,274.1 476.8,276.1 477.8,276.4 478.8,279.7 479.8,281.4 480.8,280.9 481.8,276.2 482.8,276.1 483.8,277.1 484.8,274.9 485.8,278.6 486.8,280.1 487.8,280.6 488.8,280.3 489.8,282.7 490.8,281.9 491.8,279.4 492.8,280.6 493.8,283.0 494.8,282.4 495.8,282.2 496.8,281.8 497.8,280.8 498.8,282.9 499.8,283.1 500.8,281.9 501.8,279.7 502.8,282.9 503.8,280.9 504.8,281.1 505.8,282.1 506.8,282.8 507.8,282.9 508.8,281.0 509.8,283.0 510.8,282.7 511.8,282.9 512.8,283.0 513.8,282.9 514.8,282.7 515.8,282.7 516.8,281.0 517.8,278.7 518.8,276.8 519.8,273.8 520.8,272.4 521.8,277.0 522.8,274.3 523.8,275.8 524.8,276.8 525.8,277.7 526.8,277.6 527.8,281.4 528.8,280.2 529.8,280.7 530.8,281.1 531.8,280.9 532.8,281.9 533.8,278.6 534.8,281.2 535.8,283.2 536.8,279.3 537.8,279.4 538.8,280.7 539.8,281.6 540.8,282.3 541.8,282.5 542.8,280.2 543.8,280.3 544.8,279.7 545.8,281.7 546.8,279.6 547.8,282.8 548.8,281.7 549.8,280.8 550.8,279.0 551.8,280.0 552.8,278.3 553.8,281.3 554.8,276.4 555.8,279.8 556.8,282.6 557.8,282.8 558.8,281.6 559.8,282.9 560.8,283.2 561.8,283.1 562.8,281.5 563.8,278.7 564.8,281.5 565.8,281.5 566.8,283.2 567.8,282.9 568.8,282.7 569.8,283.1 570.8,283.1 571.8,283.1 572.8,282.2 573.8,282.8 574.8,283.1 575.8,278.5 576.8,277.0 577.8,276.0 578.8,275.3 579.8,276.2 580.8,277.2 581.8,277.9 582.8,279.2 583.8,280.0 584.8,281.2 585.8,280.9 586.8,279.2 587.8,275.9 588.8,276.6 589.8,272.8 590.8,272.4 591.8,274.6 592.8,276.2 593.8,275.7 594.8,280.2 595.8,275.8 596.8,278.8 597.8,280.6 598.8,281.7 599.8,282.9 600.8,280.6 601.8,278.7 602.8,280.7 603.8,283.1 604.8,281.5 605.8,278.1 606.8,278.8 607.8,279.8 608.8,278.9 609.8,278.0 610.8,277.1 611.8,273.8 612.8,274.8 613.8,277.1 614.8,278.0 615.8,279.3 616.8,278.1 617.8,278.9 618.8,277.5 619.8,281.3 620.8,277.1 621.8,277.4 622.8,275.6 623.8,275.5 624.8,275.5 625.8,272.3 626.8,271.6 627.8,264.3 628.8,267.1 629.8,270.8 630.8,272.8 631.8,273.2 632.8,273.6 633.8,275.1 634.8,275.6 635.8,276.6 636.8,277.0 637.8,278.6 638.8,278.1 639.8,276.4 640.8,279.1 641.8,277.3 642.8,279.2 643.8,280.8 644.8,279.9 645.8,283.1 646.8,283.2 647.8,282.9 648.8,281.7 649.8,279.3 650.8,282.4 651.8,281.4 652.8,280.9 653.8,282.8 654.8,283.0 655.8,282.7 656.8,282.5 657.8,281.1 658.8,282.2 659.8,282.0 660.8,282.5 661.8,283.1 662.8,282.7 663.8,281.2 664.8,280.3 665.8,279.3 666.8,282.5 667.8,282.9 668.8,281.7 669.8,280.7 670.8,282.1 671.8,282.3 672.8,281.6 673.8,282.2 674.8,281.9 675.8,279.2 676.8,280.8 677.8,276.4 678.8,278.6 679.8,278.5 680.8,281.5 681.8,282.8 682.8,282.4 683.8,282.6 684.8,282.9 685.8,281.3 686.8,280.8 687.8,281.3 688.8,279.1 689.8,280.4 690.8,280.2 691.8,281.8 692.8,282.9 693.8,282.6 694.8,282.9 695.8,282.7 696.8,281.5 697.8,278.6 698.8,278.2 699.8,278.7 700.8,276.1 701.8,275.7 702.8,272.4 703.8,270.7 704.8,272.5 705.8,272.5 706.8,274.7 707.8,275.0 708.8,278.1 709.8,277.9 710.8,278.7 711.8,280.3 712.8,281.1 713.8,277.2 714.8,273.0 715.8,275.0 716.8,275.0 717.8,275.0 718.8,272.6 719.8,273.4 720.8,274.1 721.8,278.4 722.8,278.2 723.8,276.9 724.8,278.2 725.8,279.4 726.8,278.8 727.8,280.2 728.8,282.6 729.8,281.3 730.8,277.8 731.8,276.5 732.8,277.2 733.8,277.7 734.8,275.2 735.8,274.6 736.8,275.1 737.8,275.1 738.8,277.0 739.8,278.7 740.8,278.1 741.8,278.6 742.8,277.4 743.8,280.4 744.8,279.0 745.8,278.4 746.8,281.5 747.8,283.2 748.8,281.4 749.8,279.9 750.8,280.8 751.8,279.6 752.8,278.5 753.8,282.3 754.8,277.3 755.8,276.5 756.8,277.6 757.8,278.1 758.8,277.0 759.8,278.5 760.8,277.8 761.8,276.2 762.8,276.7 763.8,279.7 764.8,281.2 765.8,278.6 766.8,279.2 767.8,281.1 768.8,279.3 769.8,277.4 770.8,280.0 771.8,276.3 772.8,275.0 773.8,270.5 774.8,270.1 775.8,267.1 776.8,271.1 777.8,272.1 778.8,276.3 779.8,277.2 780.8,274.7 781.8,273.8 782.8,276.8 783.8,278.3 784.8,277.0 785.8,277.7 786.8,275.3 787.8,275.6 788.8,275.1 789.8,274.6 790.8,276.6 791.8,276.9 792.8,276.8 793.8,278.6 794.8,279.0 795.8,278.1 796.8,279.2 797.8,279.0 798.8,275.7 799.8,276.6 800.8,277.8 801.8,278.9 802.8,276.7 803.8,277.8 804.8,277.6 805.8,277.6 806.8,277.6 807.8,275.0 808.8,275.8 809.8,279.1 810.8,279.2 811.8,278.1 812.8,276.6 813.8,278.3 814.8,276.5 815.8,277.1 816.8,275.1 817.8,274.5 818.8,275.4 819.8,271.9 820.8,272.7 821.8,272.3 822.8,273.6 823.8,272.8 824.8,271.8 825.8,271.9 826.8,271.3 827.8,277.0 828.8,271.8 829.8,267.8 830.8,268.8 831.8,273.0 832.8,274.3 833.8,276.8 834.8,276.4 835.8,274.5 836.8,276.3 837.8,276.7 838.8,272.9 839.8,271.9 840.8,275.0 841.8,274.3 842.8,271.8 843.8,274.8 844.8,271.9 845.8,274.6 846.8,275.4 847.8,274.2 848.8,275.7 849.8,276.0 850.8,277.7 851.8,276.0 852.8,275.8 853.8,277.3 854.8,278.8 855.8,275.5 856.8,276.7 857.8,280.2 858.8,274.4 859.8,276.8 860.8,279.0 861.8,276.3 862.8,274.8 863.8,274.9 864.8,276.3 865.8,275.4 866.8,276.9 867.8,278.3 868.8,281.3 869.8,281.7 870.8,280.5 871.8,279.3 872.8,276.5 873.8,274.8 874.8,276.7 875.8,277.8 876.8,273.9 877.8,276.6 878.8,273.6 879.8,273.8 880.8,274.8 881.8,274.4 882.8,275.5 883.8,275.3 884.8,276.1 885.8,276.3 886.8,274.6 887.8,274.5 888.8,275.1 889.8,274.9 890.8,275.1 891.8,277.1 892.8,277.4 893.8,278.0 894.8,276.7 895.8,277.1 896.8,278.6 897.8,276.8 898.8,277.7 899.8,279.6 900.8,278.4 901.8,279.1 902.8,276.9 903.8,278.4 904.8,277.5 905.8,275.6 906.8,278.0 907.8,278.1 908.8,273.8 909.8,277.7 910.8,278.7 911.8,277.0 912.8,278.3 913.8,277.4 914.8,279.5 915.8,276.6 916.8,274.8 917.8,274.1 918.8,275.0 919.8,272.6 920.8,276.3 921.8,277.7 922.8,275.6 923.8,273.5 924.8,275.7 925.8,275.9 926.8,273.4 927.8,273.3 928.8,275.5 929.8,275.6 930.8,278.2 931.8,278.1 932.8,277.6 933.8,279.4 934.8,278.4 935.8,274.1 936.8,277.2 937.8,277.3 938.8,276.3 939.8,273.5 940.8,273.9 941.8,272.8 942.8,274.7 943.8,274.5 944.8,276.1 945.8,278.9 946.8,279.9 947.8,277.9 948.8,278.8 949.8,279.9 950.8,279.3 951.8,278.7 952.8,278.1 953.8,277.8 954.8,276.5 955.8,280.4 956.8,278.0 957.8,277.8 958.8,277.0 959.8,275.1 960.8,275.9 961.8,275.1 962.8,275.2 963.8,271.3 964.8,272.0 965.8,275.6 966.8,276.5 967.8,276.6 968.8,277.5 969.8,275.7 970.8,275.2 971.8,273.1 972.8,274.8 973.8,272.5 974.8,270.1 975.8,273.0 976.8,275.4 977.8,275.5 978.8,278.0 979.8,275.4 980.8,277.0 981.8,278.4 982.8,279.1 983.8,283.2 984.8,279.1 985.8,282.5 986.8,282.4 987.8,282.6 988.8,280.0 989.8,280.8 990.8,282.1 991.8,282.4 992.8,280.5 993.8,281.5 994.8,280.2 995.8,279.5 996.8,280.2 997.8,282.8 998.8,279.5 999.8,281.9 1000.8,282.0 1001.8,281.7 1002.8,282.7 1003.8,283.1 1004.8,283.1 1005.8,282.8 1006.8,282.4 1007.8,282.3 1008.8,282.6 1009.8,281.4 1010.8,283.0 1011.8,282.9 1012.8,283.1 1013.8,280.0 1014.8,279.8 1015.8,278.9 1016.8,277.7 1017.8,276.2 1018.8,277.0 1019.8,278.5 1020.8,278.4 1021.8,279.7 1022.8,278.1 1023.8,282.6 1024.8,281.6 1025.8,280.4 1026.8,281.4 1027.8,279.3 1028.8,282.3 1029.8,279.0 1030.8,281.8 1031.8,278.8 1032.8,276.0 1033.8,279.1 1034.8,282.7 1035.8,279.1 1036.8,281.6 1037.8,283.1 1038.8,281.0 1039.8,283.0 1040.8,282.7 1041.8,282.7 1042.8,282.5 1043.8,282.9 1044.8,282.1 1045.8,282.5 1046.8,283.0 1047.8,282.0 1048.8,282.2 1049.8,282.7 1050.8,282.8 1051.8,283.1 1052.8,282.1 1053.8,279.4 1054.8,281.3 1055.8,280.0 1056.8,282.3 1057.8,282.6 1058.8,282.7 1059.8,280.5 1060.8,280.4 1061.8,277.5 1062.8,277.7 1063.8,276.4 1064.8,275.5 1065.8,279.9 1066.8,281.1 1067.8,280.4 1068.8,281.1 1069.8,280.1 1070.8,275.8 1071.8,276.4 1072.8,275.2 1073.8,275.7 1074.8,275.1 1075.8,279.2 1076.8,278.4 1077.8,278.9 1078.8,274.5 1079.8,277.9" fill="none" stroke="#0c0c0c" stroke-width="1.35" stroke-linejoin="miter" stroke-miterlimit="3"/>
<rect x="398.80" y="290.80" width="681.70" height="46.90" fill="#e7e7e7"/>
<path d="M417.30 290.80V337.70M430.30 290.80V337.70M443.30 290.80V337.70M456.30 290.80V337.70M469.30 290.80V337.70M482.30 290.80V337.70M495.30 290.80V337.70M508.30 290.80V337.70M521.30 290.80V337.70M534.30 290.80V337.70M547.30 290.80V337.70M560.30 290.80V337.70M573.30 290.80V337.70M586.30 290.80V337.70M599.30 290.80V337.70M612.30 290.80V337.70M625.30 290.80V337.70M638.30 290.80V337.70M651.30 290.80V337.70M664.30 290.80V337.70M677.30 290.80V337.70M690.30 290.80V337.70M703.30 290.80V337.70M716.30 290.80V337.70M729.30 290.80V337.70M742.30 290.80V337.70M755.30 290.80V337.70M768.30 290.80V337.70M781.30 290.80V337.70M794.30 290.80V337.70M807.30 290.80V337.70M820.30 290.80V337.70M833.30 290.80V337.70M846.30 290.80V337.70M859.30 290.80V337.70M872.30 290.80V337.70M885.30 290.80V337.70M898.30 290.80V337.70M911.30 290.80V337.70M924.30 290.80V337.70M937.30 290.80V337.70M950.30 290.80V337.70M963.30 290.80V337.70M976.30 290.80V337.70M989.30 290.80V337.70M1002.30 290.80V337.70M1015.30 290.80V337.70M1028.30 290.80V337.70M1041.30 290.80V337.70M1054.30 290.80V337.70M1067.30 290.80V337.70M417.30 299.90H1080.50M417.30 309.45H1080.50M417.30 319.00H1080.50M417.30 328.55H1080.50" stroke="#dadada" stroke-width="1" fill="none" shape-rendering="crispEdges"/>
<text x="413.80" y="302.40" text-anchor="end" class="yl">4</text>
<text x="413.80" y="311.95" text-anchor="end" class="yl">3</text>
<text x="413.80" y="321.50" text-anchor="end" class="yl">2</text>
<text x="413.80" y="331.05" text-anchor="end" class="yl">1</text>
<path d="M417.30 313.90H1079.50" stroke="#ee8a8a" stroke-width="1.7" stroke-dasharray="9.1 4.17" fill="none"/>
<path d="M761.30 290.80V337.70" stroke="#9a9ae2" stroke-width="1" fill="none" shape-rendering="crispEdges"/>
<polyline points="417.8,328.3 418.8,326.9 419.8,324.7 420.8,327.8 421.8,327.3 422.8,327.5 423.8,328.3 424.8,327.1 425.8,325.7 426.8,327.9 427.8,324.3 428.8,328.6 429.8,328.6 430.8,327.4 431.8,325.8 432.8,327.0 433.8,327.0 434.8,326.2 435.8,329.0 436.8,328.8 437.8,325.8 438.8,325.4 439.8,325.7 440.8,322.7 441.8,325.1 442.8,325.0 443.8,330.0 444.8,330.4 445.8,329.8 446.8,330.1 447.8,325.6 448.8,325.1 449.8,326.9 450.8,325.7 451.8,325.8 452.8,325.9 453.8,327.5 454.8,328.4 455.8,329.4 456.8,327.7 457.8,326.7 458.8,330.3 459.8,326.5 460.8,327.0 461.8,328.3 462.8,328.3 463.8,326.6 464.8,325.3 465.8,326.7 466.8,327.4 467.8,329.4 468.8,329.7 469.8,329.2 470.8,329.0 471.8,329.5 472.8,329.4 473.8,329.1 474.8,329.1 475.8,329.3 476.8,329.4 477.8,329.7 478.8,330.7 479.8,329.1 480.8,328.7 481.8,326.4 482.8,326.6 483.8,327.9 484.8,331.0 485.8,334.2 486.8,334.3 487.8,333.3 488.8,334.6 489.8,335.0 490.8,332.2 491.8,330.4 492.8,331.2 493.8,331.1 494.8,330.5 495.8,329.2 496.8,330.6 497.8,332.3 498.8,331.9 499.8,334.3 500.8,331.4 501.8,336.8 502.8,336.8 503.8,336.4 504.8,336.3 505.8,336.7 506.8,336.4 507.8,336.3 508.8,336.8 509.8,336.6 510.8,333.5 511.8,333.6 512.8,333.8 513.8,332.2 514.8,331.7 515.8,331.0 516.8,329.2 517.8,331.7 518.8,329.3 519.8,330.2 520.8,329.1 521.8,334.3 522.8,330.9 523.8,331.2 524.8,333.4 525.8,335.3 526.8,333.9 527.8,335.6 528.8,333.5 529.8,335.9 530.8,334.0 531.8,336.7 532.8,333.5 533.8,332.5 534.8,332.3 535.8,335.9 536.8,333.2 537.8,335.8 538.8,336.8 539.8,332.9 540.8,336.7 541.8,336.4 542.8,336.8 543.8,335.8 544.8,336.4 545.8,336.6 546.8,335.3 547.8,333.5 548.8,331.1 549.8,333.5 550.8,334.8 551.8,332.7 552.8,332.5 553.8,334.2 554.8,331.9 555.8,336.7 556.8,335.6 557.8,335.8 558.8,336.0 559.8,335.6 560.8,336.5 561.8,336.6 562.8,334.6 563.8,335.4 564.8,335.4 565.8,334.4 566.8,331.7 567.8,331.0 568.8,330.3 569.8,327.4 570.8,328.3 571.8,326.9 572.8,325.7 573.8,328.3 574.8,327.6 575.8,327.3 576.8,324.7 577.8,326.3 578.8,330.3 579.8,331.1 580.8,329.9 581.8,329.6 582.8,331.8 583.8,334.9 584.8,336.8 585.8,335.9 586.8,336.8 587.8,336.8 588.8,334.6 589.8,334.2 590.8,335.1 591.8,333.6 592.8,332.7 593.8,334.3 594.8,334.7 595.8,335.0 596.8,333.7 597.8,333.8 598.8,333.4 599.8,333.7 600.8,330.2 601.8,328.6 602.8,329.2 603.8,328.7 604.8,328.0 605.8,325.3 606.8,324.6 607.8,325.8 608.8,328.2 609.8,328.2 610.8,330.5 611.8,328.0 612.8,325.5 613.8,326.3 614.8,326.8 615.8,328.4 616.8,325.9 617.8,326.6 618.8,323.0 619.8,326.2 620.8,328.0 621.8,326.4 622.8,330.1 623.8,328.0 624.8,326.7 625.8,327.0 626.8,323.8 627.8,323.3 628.8,324.1 629.8,326.6 630.8,328.2 631.8,327.0 632.8,328.2 633.8,322.4 634.8,324.3 635.8,324.8 636.8,326.1 637.8,326.8 638.8,329.8 639.8,330.1 640.8,324.4 641.8,324.5 642.8,327.5 643.8,324.9 644.8,323.5 645.8,327.3 646.8,328.5 647.8,328.0 648.8,324.5 649.8,326.3 650.8,325.8 651.8,324.5 652.8,328.2 653.8,327.7 654.8,325.0 655.8,325.0 656.8,327.5 657.8,327.9 658.8,329.6 659.8,329.5 660.8,326.3 661.8,327.2 662.8,327.9 663.8,326.8 664.8,326.6 665.8,326.5 666.8,328.0 667.8,327.1 668.8,323.1 669.8,325.8 670.8,326.3 671.8,326.6 672.8,329.5 673.8,329.3 674.8,331.6 675.8,331.4 676.8,331.5 677.8,333.4 678.8,334.2 679.8,334.3 680.8,335.9 681.8,335.4 682.8,332.1 683.8,333.2 684.8,332.0 685.8,329.0 686.8,326.6 687.8,326.8 688.8,328.9 689.8,324.9 690.8,328.0 691.8,328.7 692.8,326.3 693.8,325.6 694.8,329.1 695.8,330.0 696.8,330.7 697.8,333.6 698.8,328.8 699.8,332.7 700.8,328.3 701.8,329.3 702.8,329.5 703.8,331.5 704.8,332.2 705.8,333.7 706.8,331.3 707.8,332.6 708.8,335.3 709.8,335.5 710.8,335.7 711.8,334.4 712.8,336.2 713.8,335.5 714.8,334.3 715.8,333.0 716.8,331.7 717.8,332.3 718.8,331.2 719.8,332.3 720.8,331.4 721.8,331.0 722.8,330.8 723.8,330.7 724.8,325.7 725.8,328.5 726.8,327.7 727.8,329.0 728.8,327.5 729.8,330.3 730.8,334.1 731.8,332.0 732.8,331.5 733.8,332.9 734.8,332.3 735.8,334.0 736.8,335.2 737.8,335.5 738.8,336.3 739.8,336.3 740.8,335.3 741.8,327.9 742.8,328.3 743.8,328.6 744.8,325.5 745.8,327.7 746.8,331.3 747.8,332.0 748.8,333.3 749.8,331.5 750.8,336.6 751.8,333.5 752.8,331.8 753.8,334.5 754.8,334.4 755.8,333.0 756.8,334.5 757.8,333.3 758.8,333.0 759.8,334.1 760.8,336.4 761.8,333.3 762.8,335.4 763.8,332.2 764.8,331.9 765.8,334.5 766.8,332.7 767.8,332.5 768.8,330.2 769.8,330.8 770.8,332.0 771.8,331.1 772.8,332.5 773.8,335.3 774.8,334.2 775.8,335.7 776.8,335.3 777.8,336.6 778.8,335.7 779.8,332.3 780.8,329.5 781.8,328.2 782.8,326.6 783.8,327.9 784.8,329.0 785.8,331.3 786.8,330.5 787.8,332.4 788.8,331.7 789.8,333.2 790.8,330.7 791.8,329.9 792.8,328.8 793.8,326.5 794.8,325.3 795.8,326.9 796.8,327.6 797.8,330.8 798.8,333.2 799.8,334.5 800.8,333.6 801.8,336.7 802.8,335.1 803.8,335.1 804.8,336.6 805.8,334.7 806.8,336.6 807.8,335.9 808.8,335.5 809.8,335.1 810.8,334.3 811.8,334.9 812.8,331.8 813.8,333.2 814.8,333.6 815.8,334.5 816.8,334.9 817.8,334.7 818.8,333.8 819.8,334.9 820.8,335.6 821.8,334.0 822.8,335.4 823.8,333.0 824.8,336.8 825.8,336.4 826.8,335.2 827.8,333.5 828.8,335.6 829.8,335.6 830.8,331.5 831.8,333.7 832.8,334.7 833.8,333.7 834.8,336.9 835.8,332.8 836.8,333.9 837.8,333.7 838.8,335.4 839.8,335.9 840.8,336.1 841.8,336.5 842.8,335.2 843.8,336.5 844.8,336.5 845.8,336.6 846.8,335.3 847.8,334.1 848.8,336.8 849.8,336.7 850.8,336.5 851.8,333.9 852.8,335.1 853.8,332.5 854.8,331.9 855.8,336.6 856.8,336.9 857.8,333.0 858.8,332.5 859.8,333.4 860.8,334.1 861.8,333.7 862.8,332.2 863.8,332.1 864.8,331.1 865.8,333.9 866.8,331.6 867.8,333.4 868.8,332.6 869.8,335.2 870.8,335.8 871.8,334.6 872.8,336.5 873.8,335.2 874.8,331.9 875.8,327.7 876.8,326.5 877.8,325.0 878.8,327.5 879.8,328.7 880.8,328.3 881.8,327.9 882.8,331.7 883.8,333.4 884.8,336.1 885.8,332.0 886.8,329.8 887.8,328.7 888.8,326.8 889.8,324.7 890.8,328.3 891.8,328.2 892.8,324.3 893.8,324.2 894.8,323.8 895.8,324.9 896.8,328.0 897.8,324.2 898.8,330.3 899.8,329.0 900.8,329.8 901.8,331.2 902.8,329.3 903.8,326.7 904.8,325.6 905.8,326.7 906.8,331.3 907.8,325.3 908.8,330.8 909.8,329.0 910.8,329.0 911.8,332.3 912.8,331.0 913.8,330.5 914.8,332.9 915.8,332.7 916.8,330.0 917.8,328.9 918.8,328.4 919.8,330.7 920.8,330.5 921.8,331.6 922.8,333.5 923.8,333.7 924.8,333.2 925.8,330.1 926.8,330.1 927.8,330.3 928.8,328.6 929.8,330.3 930.8,332.1 931.8,333.1 932.8,332.5 933.8,333.1 934.8,333.9 935.8,334.0 936.8,334.9 937.8,335.6 938.8,330.3 939.8,331.1 940.8,328.7 941.8,331.8 942.8,331.7 943.8,332.9 944.8,336.7 945.8,332.9 946.8,333.9 947.8,334.4 948.8,332.9 949.8,336.0 950.8,334.4 951.8,334.3 952.8,334.8 953.8,331.0 954.8,331.9 955.8,326.9 956.8,326.3 957.8,325.6 958.8,326.0 959.8,325.1 960.8,326.5 961.8,330.6 962.8,329.7 963.8,329.1 964.8,329.9 965.8,332.1 966.8,331.6 967.8,333.0 968.8,331.4 969.8,335.2 970.8,336.1 971.8,335.2 972.8,336.6 973.8,333.3 974.8,335.5 975.8,329.4 976.8,334.5 977.8,335.4 978.8,334.1 979.8,335.3 980.8,334.2 981.8,336.5 982.8,335.4 983.8,336.9 984.8,335.5 985.8,332.0 986.8,332.0 987.8,332.1 988.8,332.0 989.8,332.6 990.8,330.8 991.8,332.6 992.8,330.7 993.8,332.3 994.8,332.2 995.8,331.3 996.8,331.2 997.8,332.2 998.8,331.8 999.8,330.9 1000.8,332.2 1001.8,332.5 1002.8,332.9 1003.8,331.3 1004.8,328.4 1005.8,329.0 1006.8,332.0 1007.8,330.9 1008.8,332.8 1009.8,333.5 1010.8,331.0 1011.8,331.3 1012.8,332.2 1013.8,330.6 1014.8,332.0 1015.8,332.6 1016.8,329.9 1017.8,330.0 1018.8,329.3 1019.8,330.8 1020.8,330.8 1021.8,328.8 1022.8,328.8 1023.8,329.3 1024.8,326.5 1025.8,327.0 1026.8,330.8 1027.8,329.5 1028.8,329.3 1029.8,330.3 1030.8,330.3 1031.8,329.7 1032.8,328.8 1033.8,328.9 1034.8,329.9 1035.8,331.1 1036.8,330.6 1037.8,332.9 1038.8,333.3 1039.8,332.2 1040.8,329.8 1041.8,331.4 1042.8,331.3 1043.8,331.6 1044.8,335.4 1045.8,333.6 1046.8,328.0 1047.8,329.2 1048.8,329.0 1049.8,329.0 1050.8,331.8 1051.8,331.7 1052.8,330.8 1053.8,332.2 1054.8,332.2 1055.8,333.7 1056.8,330.8 1057.8,332.5 1058.8,331.1 1059.8,328.7 1060.8,329.6 1061.8,326.4 1062.8,327.5 1063.8,330.7 1064.8,332.9 1065.8,333.8 1066.8,330.8 1067.8,328.6 1068.8,331.4 1069.8,333.3 1070.8,329.2 1071.8,326.9 1072.8,330.1 1073.8,331.4 1074.8,331.4 1075.8,334.3 1076.8,336.2 1077.8,333.1 1078.8,332.8 1079.8,335.9" fill="none" stroke="#0c0c0c" stroke-width="1.35" stroke-linejoin="miter" stroke-miterlimit="3"/>
<rect x="398.80" y="344.50" width="681.70" height="46.90" fill="#e7e7e7"/>
<path d="M417.30 344.50V391.40M430.30 344.50V391.40M443.30 344.50V391.40M456.30 344.50V391.40M469.30 344.50V391.40M482.30 344.50V391.40M495.30 344.50V391.40M508.30 344.50V391.40M521.30 344.50V391.40M534.30 344.50V391.40M547.30 344.50V391.40M560.30 344.50V391.40M573.30 344.50V391.40M586.30 344.50V391.40M599.30 344.50V391.40M612.30 344.50V391.40M625.30 344.50V391.40M638.30 344.50V391.40M651.30 344.50V391.40M664.30 344.50V391.40M677.30 344.50V391.40M690.30 344.50V391.40M703.30 344.50V391.40M716.30 344.50V391.40M729.30 344.50V391.40M742.30 344.50V391.40M755.30 344.50V391.40M768.30 344.50V391.40M781.30 344.50V391.40M794.30 344.50V391.40M807.30 344.50V391.40M820.30 344.50V391.40M833.30 344.50V391.40M846.30 344.50V391.40M859.30 344.50V391.40M872.30 344.50V391.40M885.30 344.50V391.40M898.30 344.50V391.40M911.30 344.50V391.40M924.30 344.50V391.40M937.30 344.50V391.40M950.30 344.50V391.40M963.30 344.50V391.40M976.30 344.50V391.40M989.30 344.50V391.40M1002.30 344.50V391.40M1015.30 344.50V391.40M1028.30 344.50V391.40M1041.30 344.50V391.40M1054.30 344.50V391.40M1067.30 344.50V391.40M417.30 353.60H1080.50M417.30 363.15H1080.50M417.30 372.70H1080.50M417.30 382.25H1080.50" stroke="#dadada" stroke-width="1" fill="none" shape-rendering="crispEdges"/>
<text x="413.80" y="356.10" text-anchor="end" class="yl">4</text>
<text x="413.80" y="365.65" text-anchor="end" class="yl">3</text>
<text x="413.80" y="375.20" text-anchor="end" class="yl">2</text>
<text x="413.80" y="384.75" text-anchor="end" class="yl">1</text>
<path d="M417.30 377.50H1079.50" stroke="#ee8a8a" stroke-width="1.7" stroke-dasharray="9.1 4.17" fill="none"/>
<path d="M761.30 344.50V391.40" stroke="#9a9ae2" stroke-width="1" fill="none" shape-rendering="crispEdges"/>
<polyline points="417.8,379.5 418.8,380.0 419.8,380.0 420.8,378.5 421.8,381.8 422.8,378.8 423.8,381.1 424.8,382.4 425.8,384.6 426.8,383.0 427.8,385.5 428.8,385.8 429.8,386.4 430.8,385.0 431.8,383.2 432.8,385.9 433.8,386.4 434.8,385.8 435.8,386.4 436.8,383.5 437.8,383.8 438.8,389.3 439.8,386.7 440.8,386.7 441.8,386.7 442.8,387.5 443.8,388.7 444.8,386.2 445.8,384.6 446.8,385.4 447.8,384.7 448.8,385.8 449.8,386.8 450.8,387.1 451.8,384.6 452.8,385.0 453.8,383.9 454.8,383.5 455.8,381.9 456.8,385.9 457.8,385.3 458.8,381.7 459.8,383.6 460.8,382.3 461.8,376.6 462.8,376.7 463.8,377.9 464.8,377.3 465.8,379.8 466.8,382.6 467.8,381.5 468.8,381.7 469.8,380.7 470.8,383.4 471.8,381.0 472.8,383.4 473.8,380.6 474.8,381.8 475.8,380.7 476.8,380.8 477.8,378.6 478.8,381.8 479.8,381.0 480.8,383.1 481.8,377.7 482.8,380.4 483.8,381.3 484.8,383.4 485.8,385.5 486.8,386.0 487.8,381.7 488.8,384.2 489.8,382.6 490.8,385.8 491.8,383.8 492.8,383.6 493.8,382.3 494.8,383.5 495.8,386.9 496.8,386.7 497.8,384.4 498.8,382.5 499.8,384.4 500.8,385.3 501.8,386.9 502.8,385.9 503.8,382.3 504.8,382.9 505.8,385.9 506.8,386.8 507.8,383.1 508.8,385.8 509.8,382.8 510.8,383.9 511.8,383.5 512.8,384.8 513.8,383.4 514.8,383.1 515.8,380.0 516.8,382.1 517.8,383.7 518.8,380.4 519.8,379.4 520.8,382.8 521.8,383.8 522.8,381.1 523.8,379.0 524.8,377.9 525.8,380.0 526.8,381.2 527.8,384.1 528.8,384.0 529.8,385.0 530.8,387.0 531.8,384.3 532.8,388.0 533.8,386.3 534.8,389.2 535.8,385.2 536.8,384.2 537.8,382.8 538.8,384.0 539.8,384.1 540.8,383.0 541.8,387.8 542.8,386.1 543.8,382.7 544.8,385.0 545.8,384.6 546.8,388.6 547.8,387.9 548.8,390.0 549.8,386.3 550.8,384.3 551.8,386.3 552.8,388.5 553.8,389.9 554.8,387.3 555.8,386.6 556.8,390.2 557.8,389.8 558.8,388.3 559.8,388.9 560.8,389.8 561.8,386.4 562.8,388.1 563.8,387.6 564.8,386.9 565.8,388.6 566.8,387.6 567.8,390.1 568.8,388.7 569.8,387.5 570.8,389.9 571.8,389.5 572.8,388.7 573.8,387.6 574.8,387.0 575.8,387.1 576.8,387.2 577.8,385.7 578.8,386.8 579.8,387.7 580.8,388.7 581.8,390.3 582.8,386.9 583.8,387.3 584.8,390.0 585.8,387.0 586.8,386.5 587.8,387.1 588.8,390.2 589.8,389.7 590.8,387.4 591.8,388.2 592.8,387.0 593.8,389.5 594.8,384.8 595.8,389.5 596.8,388.7 597.8,388.1 598.8,388.6 599.8,389.9 600.8,390.0 601.8,390.6 602.8,388.3 603.8,388.9 604.8,390.3 605.8,389.2 606.8,388.4 607.8,385.8 608.8,387.1 609.8,388.2 610.8,390.6 611.8,390.5 612.8,390.4 613.8,390.5 614.8,389.6 615.8,389.5 616.8,388.4 617.8,385.1 618.8,386.2 619.8,389.1 620.8,387.4 621.8,390.2 622.8,389.7 623.8,390.4 624.8,388.5 625.8,388.6 626.8,390.4 627.8,390.0 628.8,389.0 629.8,390.1 630.8,390.1 631.8,388.1 632.8,385.9 633.8,385.6 634.8,382.3 635.8,381.9 636.8,382.0 637.8,382.3 638.8,384.8 639.8,387.7 640.8,387.2 641.8,385.6 642.8,386.7 643.8,383.6 644.8,382.7 645.8,380.1 646.8,386.2 647.8,386.9 648.8,390.5 649.8,385.8 650.8,384.8 651.8,385.7 652.8,387.7 653.8,385.3 654.8,384.2 655.8,383.8 656.8,386.3 657.8,385.4 658.8,384.2 659.8,384.2 660.8,385.6 661.8,386.6 662.8,386.3 663.8,383.7 664.8,385.7 665.8,386.8 666.8,386.1 667.8,389.0 668.8,388.2 669.8,388.2 670.8,389.2 671.8,388.3 672.8,388.3 673.8,386.8 674.8,385.4 675.8,382.3 676.8,386.1 677.8,384.2 678.8,384.9 679.8,383.8 680.8,384.4 681.8,382.4 682.8,382.1 683.8,378.6 684.8,379.1 685.8,383.5 686.8,384.1 687.8,385.1 688.8,388.4 689.8,390.6 690.8,386.6 691.8,384.3 692.8,386.2 693.8,384.7 694.8,382.3 695.8,384.8 696.8,382.7 697.8,381.3 698.8,382.3 699.8,381.5 700.8,381.3 701.8,380.2 702.8,381.3 703.8,383.4 704.8,379.9 705.8,382.3 706.8,381.8 707.8,381.5 708.8,380.4 709.8,381.7 710.8,383.2 711.8,380.6 712.8,382.8 713.8,383.0 714.8,384.0 715.8,384.4 716.8,383.8 717.8,382.2 718.8,380.5 719.8,380.0 720.8,380.9 721.8,381.7 722.8,380.8 723.8,383.6 724.8,383.1 725.8,383.5 726.8,379.7 727.8,380.9 728.8,379.6 729.8,382.2 730.8,382.1 731.8,382.9 732.8,381.6 733.8,380.6 734.8,378.5 735.8,377.9 736.8,381.9 737.8,382.3 738.8,384.9 739.8,388.1 740.8,387.6 741.8,387.8 742.8,384.7 743.8,389.3 744.8,389.0 745.8,388.2 746.8,387.5 747.8,390.3 748.8,390.3 749.8,389.7 750.8,388.8 751.8,389.4 752.8,387.1 753.8,386.4 754.8,387.4 755.8,384.0 756.8,382.2 757.8,383.5 758.8,382.4 759.8,382.7 760.8,381.0 761.8,377.5 762.8,379.0 763.8,380.0 764.8,381.3 765.8,383.3 766.8,384.6 767.8,380.4 768.8,380.3 769.8,380.0 770.8,380.6 771.8,382.0 772.8,383.2 773.8,382.6 774.8,381.2 775.8,383.5 776.8,381.5 777.8,383.7 778.8,381.7 779.8,384.8 780.8,384.1 781.8,383.1 782.8,385.4 783.8,383.7 784.8,384.4 785.8,384.0 786.8,381.9 787.8,386.1 788.8,385.3 789.8,383.4 790.8,382.2 791.8,381.9 792.8,381.0 793.8,380.5 794.8,381.0 795.8,382.2 796.8,381.6 797.8,382.6 798.8,385.3 799.8,384.5 800.8,384.6 801.8,381.1 802.8,382.7 803.8,385.2 804.8,385.1 805.8,383.2 806.8,383.2 807.8,381.4 808.8,383.2 809.8,383.3 810.8,382.0 811.8,383.4 812.8,384.9 813.8,383.1 814.8,383.0 815.8,382.4 816.8,381.7 817.8,382.8 818.8,384.0 819.8,384.4 820.8,381.5 821.8,383.9 822.8,384.4 823.8,382.8 824.8,384.0 825.8,386.3 826.8,386.1 827.8,384.0 828.8,382.8 829.8,383.5 830.8,386.7 831.8,384.4 832.8,382.9 833.8,382.4 834.8,385.3 835.8,384.2 836.8,385.0 837.8,383.9 838.8,384.7 839.8,385.8 840.8,383.7 841.8,382.2 842.8,381.9 843.8,379.1 844.8,383.5 845.8,382.4 846.8,383.1 847.8,387.2 848.8,385.3 849.8,385.2 850.8,386.2 851.8,389.5 852.8,388.3 853.8,386.5 854.8,390.0 855.8,389.1 856.8,389.3 857.8,389.9 858.8,390.2 859.8,390.1 860.8,389.5 861.8,389.7 862.8,386.5 863.8,385.3 864.8,385.9 865.8,383.6 866.8,385.2 867.8,382.5 868.8,379.1 869.8,373.7 870.8,378.8 871.8,381.8 872.8,383.0 873.8,382.7 874.8,385.9 875.8,385.8 876.8,386.2 877.8,387.3 878.8,383.5 879.8,384.4 880.8,385.3 881.8,383.1 882.8,383.7 883.8,387.6 884.8,385.5 885.8,384.4 886.8,385.1 887.8,382.9 888.8,381.9 889.8,380.4 890.8,381.4 891.8,379.7 892.8,380.8 893.8,378.3 894.8,379.2 895.8,380.3 896.8,382.4 897.8,384.1 898.8,383.8 899.8,385.8 900.8,389.2 901.8,387.9 902.8,389.9 903.8,388.7 904.8,390.5 905.8,390.0 906.8,390.1 907.8,390.4 908.8,390.1 909.8,389.0 910.8,386.8 911.8,390.5 912.8,383.3 913.8,384.3 914.8,381.9 915.8,384.1 916.8,386.2 917.8,384.2 918.8,381.4 919.8,379.2 920.8,380.3 921.8,378.0 922.8,380.3 923.8,383.9 924.8,382.7 925.8,382.7 926.8,381.0 927.8,380.6 928.8,381.4 929.8,382.0 930.8,383.4 931.8,383.4 932.8,386.0 933.8,388.2 934.8,385.7 935.8,385.4 936.8,383.7 937.8,386.9 938.8,388.0 939.8,390.2 940.8,390.3 941.8,388.6 942.8,387.6 943.8,387.7 944.8,386.7 945.8,386.1 946.8,385.8 947.8,388.8 948.8,388.8 949.8,390.6 950.8,390.2 951.8,390.2 952.8,389.9 953.8,389.6 954.8,389.3 955.8,387.8 956.8,389.1 957.8,390.1 958.8,389.5 959.8,388.2 960.8,386.5 961.8,388.8 962.8,389.4 963.8,389.9 964.8,388.6 965.8,387.2 966.8,386.5 967.8,384.1 968.8,381.3 969.8,379.2 970.8,380.3 971.8,380.9 972.8,383.5 973.8,385.9 974.8,382.6 975.8,383.4 976.8,383.5 977.8,383.1 978.8,385.0 979.8,386.3 980.8,386.4 981.8,385.5 982.8,385.0 983.8,383.0 984.8,382.3 985.8,383.7 986.8,385.2 987.8,384.9 988.8,386.3 989.8,388.4 990.8,387.4 991.8,388.5 992.8,389.0 993.8,386.9 994.8,388.7 995.8,390.0 996.8,389.1 997.8,385.9 998.8,387.6 999.8,387.4 1000.8,388.2 1001.8,387.2 1002.8,387.5 1003.8,388.3 1004.8,388.6 1005.8,387.3 1006.8,387.1 1007.8,388.2 1008.8,386.9 1009.8,387.2 1010.8,387.7 1011.8,388.2 1012.8,386.8 1013.8,385.9 1014.8,386.7 1015.8,386.4 1016.8,387.3 1017.8,386.8 1018.8,388.7 1019.8,390.4 1020.8,389.1 1021.8,388.2 1022.8,389.7 1023.8,385.5 1024.8,384.7 1025.8,384.7 1026.8,386.6 1027.8,387.3 1028.8,386.7 1029.8,384.8 1030.8,382.7 1031.8,382.5 1032.8,381.8 1033.8,384.8 1034.8,388.0 1035.8,390.4 1036.8,388.1 1037.8,390.4 1038.8,389.7 1039.8,388.9 1040.8,387.3 1041.8,388.2 1042.8,384.4 1043.8,381.7 1044.8,381.5 1045.8,384.1 1046.8,383.5 1047.8,379.4 1048.8,385.5 1049.8,385.9 1050.8,386.5 1051.8,383.7 1052.8,381.8 1053.8,377.6 1054.8,380.9 1055.8,379.8 1056.8,382.5 1057.8,383.3 1058.8,386.4 1059.8,384.0 1060.8,384.2 1061.8,385.4 1062.8,385.6 1063.8,379.8 1064.8,379.0 1065.8,382.0 1066.8,380.5 1067.8,382.9 1068.8,382.3 1069.8,381.9 1070.8,383.8 1071.8,385.6 1072.8,386.4 1073.8,386.9 1074.8,388.4 1075.8,387.9 1076.8,386.7 1077.8,387.4 1078.8,386.7 1079.8,388.2" fill="none" stroke="#0c0c0c" stroke-width="1.35" stroke-linejoin="miter" stroke-miterlimit="3"/>
<rect x="398.80" y="398.20" width="681.70" height="46.90" fill="#e7e7e7"/>
<path d="M417.30 398.20V445.10M430.30 398.20V445.10M443.30 398.20V445.10M456.30 398.20V445.10M469.30 398.20V445.10M482.30 398.20V445.10M495.30 398.20V445.10M508.30 398.20V445.10M521.30 398.20V445.10M534.30 398.20V445.10M547.30 398.20V445.10M560.30 398.20V445.10M573.30 398.20V445.10M586.30 398.20V445.10M599.30 398.20V445.10M612.30 398.20V445.10M625.30 398.20V445.10M638.30 398.20V445.10M651.30 398.20V445.10M664.30 398.20V445.10M677.30 398.20V445.10M690.30 398.20V445.10M703.30 398.20V445.10M716.30 398.20V445.10M729.30 398.20V445.10M742.30 398.20V445.10M755.30 398.20V445.10M768.30 398.20V445.10M781.30 398.20V445.10M794.30 398.20V445.10M807.30 398.20V445.10M820.30 398.20V445.10M833.30 398.20V445.10M846.30 398.20V445.10M859.30 398.20V445.10M872.30 398.20V445.10M885.30 398.20V445.10M898.30 398.20V445.10M911.30 398.20V445.10M924.30 398.20V445.10M937.30 398.20V445.10M950.30 398.20V445.10M963.30 398.20V445.10M976.30 398.20V445.10M989.30 398.20V445.10M1002.30 398.20V445.10M1015.30 398.20V445.10M1028.30 398.20V445.10M1041.30 398.20V445.10M1054.30 398.20V445.10M1067.30 398.20V445.10M417.30 407.30H1080.50M417.30 416.85H1080.50M417.30 426.40H1080.50M417.30 435.95H1080.50" stroke="#dadada" stroke-width="1" fill="none" shape-rendering="crispEdges"/>
<text x="413.80" y="409.80" text-anchor="end" class="yl">4</text>
<text x="413.80" y="419.35" text-anchor="end" class="yl">3</text>
<text x="413.80" y="428.90" text-anchor="end" class="yl">2</text>
<text x="413.80" y="438.45" text-anchor="end" class="yl">1</text>
<path d="M417.30 413.60H1079.50" stroke="#ee8a8a" stroke-width="1.7" stroke-dasharray="9.1 4.17" fill="none"/>
<path d="M761.30 398.20V445.10" stroke="#9a9ae2" stroke-width="1" fill="none" shape-rendering="crispEdges"/>
<polyline points="417.8,442.9 418.8,444.3 419.8,442.5 420.8,443.1 421.8,440.4 422.8,441.9 423.8,442.3 424.8,441.7 425.8,441.0 426.8,440.7 427.8,440.5 428.8,438.5 429.8,438.8 430.8,438.9 431.8,436.3 432.8,438.2 433.8,439.9 434.8,438.9 435.8,441.5 436.8,439.0 437.8,439.1 438.8,442.0 439.8,439.7 440.8,441.9 441.8,443.1 442.8,442.7 443.8,444.3 444.8,443.1 445.8,443.7 446.8,440.0 447.8,440.7 448.8,443.4 449.8,441.5 450.8,441.6 451.8,444.1 452.8,443.8 453.8,442.5 454.8,440.5 455.8,440.6 456.8,441.3 457.8,444.2 458.8,443.0 459.8,443.5 460.8,442.8 461.8,441.4 462.8,442.4 463.8,441.1 464.8,438.1 465.8,436.1 466.8,437.7 467.8,436.8 468.8,434.6 469.8,433.4 470.8,432.8 471.8,437.1 472.8,435.8 473.8,437.1 474.8,438.8 475.8,438.6 476.8,436.7 477.8,438.4 478.8,435.4 479.8,433.1 480.8,430.7 481.8,433.5 482.8,433.3 483.8,433.7 484.8,434.9 485.8,436.7 486.8,437.8 487.8,435.5 488.8,437.0 489.8,437.9 490.8,439.9 491.8,437.0 492.8,434.2 493.8,435.8 494.8,433.8 495.8,432.3 496.8,436.0 497.8,435.7 498.8,437.0 499.8,439.1 500.8,439.3 501.8,440.9 502.8,441.4 503.8,438.8 504.8,442.0 505.8,444.1 506.8,442.0 507.8,443.6 508.8,444.0 509.8,443.9 510.8,444.0 511.8,442.4 512.8,440.4 513.8,441.4 514.8,443.2 515.8,438.5 516.8,438.2 517.8,438.5 518.8,439.8 519.8,441.7 520.8,442.2 521.8,441.9 522.8,443.8 523.8,442.6 524.8,444.0 525.8,442.3 526.8,440.4 527.8,443.1 528.8,440.9 529.8,442.3 530.8,442.6 531.8,443.8 532.8,444.1 533.8,439.9 534.8,439.3 535.8,439.6 536.8,439.5 537.8,436.3 538.8,439.9 539.8,440.0 540.8,438.1 541.8,439.1 542.8,438.5 543.8,437.6 544.8,442.0 545.8,444.2 546.8,443.5 547.8,439.3 548.8,441.0 549.8,439.8 550.8,439.8 551.8,438.3 552.8,442.3 553.8,437.8 554.8,438.4 555.8,438.1 556.8,442.0 557.8,440.5 558.8,443.9 559.8,444.2 560.8,442.2 561.8,440.4 562.8,442.4 563.8,444.1 564.8,442.6 565.8,443.1 566.8,443.6 567.8,444.0 568.8,443.6 569.8,443.7 570.8,443.3 571.8,444.3 572.8,443.5 573.8,440.3 574.8,438.4 575.8,437.4 576.8,436.1 577.8,431.2 578.8,432.1 579.8,435.1 580.8,435.9 581.8,436.5 582.8,432.6 583.8,434.6 584.8,434.4 585.8,435.5 586.8,433.3 587.8,435.9 588.8,435.7 589.8,432.1 590.8,433.7 591.8,436.4 592.8,435.6 593.8,436.2 594.8,435.7 595.8,434.2 596.8,433.3 597.8,433.9 598.8,432.9 599.8,435.9 600.8,435.3 601.8,433.5 602.8,434.4 603.8,435.6 604.8,433.7 605.8,430.9 606.8,434.6 607.8,433.2 608.8,436.9 609.8,437.7 610.8,434.4 611.8,432.4 612.8,434.7 613.8,435.7 614.8,436.5 615.8,432.6 616.8,434.9 617.8,434.4 618.8,435.1 619.8,438.1 620.8,437.5 621.8,436.1 622.8,434.8 623.8,437.3 624.8,436.4 625.8,434.4 626.8,437.0 627.8,437.1 628.8,435.5 629.8,435.7 630.8,437.1 631.8,436.9 632.8,434.2 633.8,434.5 634.8,434.0 635.8,436.0 636.8,436.7 637.8,439.8 638.8,437.9 639.8,440.0 640.8,436.9 641.8,442.0 642.8,444.0 643.8,440.2 644.8,439.6 645.8,439.8 646.8,438.0 647.8,436.7 648.8,436.4 649.8,439.9 650.8,440.5 651.8,437.6 652.8,439.3 653.8,439.2 654.8,436.1 655.8,438.0 656.8,438.4 657.8,435.3 658.8,437.5 659.8,437.4 660.8,439.3 661.8,442.6 662.8,442.3 663.8,440.6 664.8,441.2 665.8,440.2 666.8,444.2 667.8,442.4 668.8,441.3 669.8,444.0 670.8,441.9 671.8,443.8 672.8,441.6 673.8,442.6 674.8,441.9 675.8,438.3 676.8,439.8 677.8,443.8 678.8,437.7 679.8,437.2 680.8,435.4 681.8,430.3 682.8,433.6 683.8,431.9 684.8,429.7 685.8,433.6 686.8,432.3 687.8,436.1 688.8,438.2 689.8,438.8 690.8,437.0 691.8,438.3 692.8,437.0 693.8,439.3 694.8,439.4 695.8,440.7 696.8,440.4 697.8,441.3 698.8,441.3 699.8,433.9 700.8,437.9 701.8,436.1 702.8,432.9 703.8,432.8 704.8,433.9 705.8,431.9 706.8,436.6 707.8,438.4 708.8,434.3 709.8,436.1 710.8,440.6 711.8,437.4 712.8,438.3 713.8,434.2 714.8,435.0 715.8,436.7 716.8,436.3 717.8,435.5 718.8,436.2 719.8,436.3 720.8,433.1 721.8,435.8 722.8,436.6 723.8,439.2 724.8,436.2 725.8,435.5 726.8,435.9 727.8,436.1 728.8,435.4 729.8,433.7 730.8,433.7 731.8,435.5 732.8,439.4 733.8,434.5 734.8,435.3 735.8,432.5 736.8,433.6 737.8,434.3 738.8,434.2 739.8,435.2 740.8,436.0 741.8,435.6 742.8,438.0 743.8,436.3 744.8,436.7 745.8,434.3 746.8,435.2 747.8,436.6 748.8,436.2 749.8,434.9 750.8,436.1 751.8,437.1 752.8,437.1 753.8,438.3 754.8,436.5 755.8,437.7 756.8,437.8 757.8,436.0 758.8,435.4 759.8,437.6 760.8,434.6 761.8,435.1 762.8,434.3 763.8,438.4 764.8,438.0 765.8,433.0 766.8,436.0 767.8,434.6 768.8,434.6 769.8,433.7 770.8,434.8 771.8,433.2 772.8,434.0 773.8,434.5 774.8,436.2 775.8,433.0 776.8,435.2 777.8,435.6 778.8,438.3 779.8,436.9 780.8,438.0 781.8,435.5 782.8,437.3 783.8,438.6 784.8,441.2 785.8,442.2 786.8,441.7 787.8,441.7 788.8,443.7 789.8,441.1 790.8,440.0 791.8,442.3 792.8,443.3 793.8,440.8 794.8,440.0 795.8,438.8 796.8,437.9 797.8,435.2 798.8,437.3 799.8,434.4 800.8,438.7 801.8,443.2 802.8,440.9 803.8,436.4 804.8,434.2 805.8,436.9 806.8,432.3 807.8,433.9 808.8,439.7 809.8,440.6 810.8,440.5 811.8,439.7 812.8,439.3 813.8,442.8 814.8,444.0 815.8,443.3 816.8,441.2 817.8,439.6 818.8,438.4 819.8,440.9 820.8,439.1 821.8,438.3 822.8,438.9 823.8,438.6 824.8,443.4 825.8,441.4 826.8,444.0 827.8,442.7 828.8,440.7 829.8,444.2 830.8,443.5 831.8,444.3 832.8,441.1 833.8,443.5 834.8,442.9 835.8,443.5 836.8,441.5 837.8,442.7 838.8,440.8 839.8,443.2 840.8,437.6 841.8,439.8 842.8,442.2 843.8,441.9 844.8,440.4 845.8,438.2 846.8,436.0 847.8,435.1 848.8,436.4 849.8,432.8 850.8,434.7 851.8,435.3 852.8,440.7 853.8,442.6 854.8,442.1 855.8,440.2 856.8,440.2 857.8,439.8 858.8,440.1 859.8,442.7 860.8,442.9 861.8,435.8 862.8,434.9 863.8,432.8 864.8,435.3 865.8,435.8 866.8,437.4 867.8,438.1 868.8,437.9 869.8,437.8 870.8,435.6 871.8,437.0 872.8,437.4 873.8,436.8 874.8,434.9 875.8,435.9 876.8,436.7 877.8,435.9 878.8,435.6 879.8,435.6 880.8,436.7 881.8,435.6 882.8,435.2 883.8,432.7 884.8,437.1 885.8,438.3 886.8,435.4 887.8,434.1 888.8,436.4 889.8,438.8 890.8,437.3 891.8,437.8 892.8,435.6 893.8,435.2 894.8,435.4 895.8,438.1 896.8,436.1 897.8,436.5 898.8,437.4 899.8,442.3 900.8,442.2 901.8,438.8 902.8,439.7 903.8,441.0 904.8,442.6 905.8,444.3 906.8,440.8 907.8,441.8 908.8,441.0 909.8,441.0 910.8,444.1 911.8,442.1 912.8,441.6 913.8,443.9 914.8,443.2 915.8,443.0 916.8,443.4 917.8,442.3 918.8,441.5 919.8,443.6 920.8,443.9 921.8,444.3 922.8,442.9 923.8,442.9 924.8,444.0 925.8,444.3 926.8,443.8 927.8,444.1 928.8,443.8 929.8,444.0 930.8,444.3 931.8,443.4 932.8,441.9 933.8,441.3 934.8,440.8 935.8,442.4 936.8,441.8 937.8,440.7 938.8,440.9 939.8,441.6 940.8,440.8 941.8,444.1 942.8,443.9 943.8,442.4 944.8,440.8 945.8,442.5 946.8,440.2 947.8,441.4 948.8,442.9 949.8,441.0 950.8,443.1 951.8,442.8 952.8,441.4 953.8,441.9 954.8,441.4 955.8,443.0 956.8,439.4 957.8,440.1 958.8,438.8 959.8,435.7 960.8,435.6 961.8,436.7 962.8,436.9 963.8,438.3 964.8,435.5 965.8,435.3 966.8,438.2 967.8,437.0 968.8,436.9 969.8,434.0 970.8,432.4 971.8,435.1 972.8,436.6 973.8,437.3 974.8,435.1 975.8,438.7 976.8,437.1 977.8,434.2 978.8,432.1 979.8,434.8 980.8,436.8 981.8,437.4 982.8,436.8 983.8,438.3 984.8,436.0 985.8,439.2 986.8,443.7 987.8,439.4 988.8,439.3 989.8,437.9 990.8,435.9 991.8,438.0 992.8,436.9 993.8,438.0 994.8,439.5 995.8,439.8 996.8,438.2 997.8,438.7 998.8,439.5 999.8,439.4 1000.8,439.9 1001.8,441.2 1002.8,440.0 1003.8,436.7 1004.8,437.2 1005.8,437.9 1006.8,436.3 1007.8,438.6 1008.8,439.1 1009.8,438.0 1010.8,439.9 1011.8,441.6 1012.8,441.2 1013.8,442.1 1014.8,439.6 1015.8,438.3 1016.8,436.9 1017.8,437.5 1018.8,436.3 1019.8,435.0 1020.8,437.7 1021.8,435.8 1022.8,436.8 1023.8,438.0 1024.8,436.2 1025.8,438.6 1026.8,439.4 1027.8,437.6 1028.8,435.9 1029.8,435.7 1030.8,436.4 1031.8,437.1 1032.8,435.9 1033.8,435.2 1034.8,434.5 1035.8,434.6 1036.8,438.7 1037.8,436.6 1038.8,435.0 1039.8,437.1 1040.8,438.5 1041.8,439.4 1042.8,440.1 1043.8,442.8 1044.8,440.1 1045.8,437.7 1046.8,436.2 1047.8,436.1 1048.8,436.7 1049.8,441.7 1050.8,442.4 1051.8,442.2 1052.8,441.4 1053.8,444.1 1054.8,443.9 1055.8,443.2 1056.8,442.0 1057.8,440.0 1058.8,442.7 1059.8,442.2 1060.8,440.5 1061.8,441.5 1062.8,439.5 1063.8,439.5 1064.8,441.4 1065.8,442.7 1066.8,441.4 1067.8,441.9 1068.8,441.6 1069.8,442.5 1070.8,437.7 1071.8,437.2 1072.8,439.7 1073.8,437.3 1074.8,442.7 1075.8,438.6 1076.8,439.8 1077.8,441.0 1078.8,444.0 1079.8,440.4" fill="none" stroke="#0c0c0c" stroke-width="1.35" stroke-linejoin="miter" stroke-miterlimit="3"/>
<rect x="398.80" y="451.90" width="681.70" height="46.90" fill="#e7e7e7"/>
<path d="M417.30 451.90V498.80M430.30 451.90V498.80M443.30 451.90V498.80M456.30 451.90V498.80M469.30 451.90V498.80M482.30 451.90V498.80M495.30 451.90V498.80M508.30 451.90V498.80M521.30 451.90V498.80M534.30 451.90V498.80M547.30 451.90V498.80M560.30 451.90V498.80M573.30 451.90V498.80M586.30 451.90V498.80M599.30 451.90V498.80M612.30 451.90V498.80M625.30 451.90V498.80M638.30 451.90V498.80M651.30 451.90V498.80M664.30 451.90V498.80M677.30 451.90V498.80M690.30 451.90V498.80M703.30 451.90V498.80M716.30 451.90V498.80M729.30 451.90V498.80M742.30 451.90V498.80M755.30 451.90V498.80M768.30 451.90V498.80M781.30 451.90V498.80M794.30 451.90V498.80M807.30 451.90V498.80M820.30 451.90V498.80M833.30 451.90V498.80M846.30 451.90V498.80M859.30 451.90V498.80M872.30 451.90V498.80M885.30 451.90V498.80M898.30 451.90V498.80M911.30 451.90V498.80M924.30 451.90V498.80M937.30 451.90V498.80M950.30 451.90V498.80M963.30 451.90V498.80M976.30 451.90V498.80M989.30 451.90V498.80M1002.30 451.90V498.80M1015.30 451.90V498.80M1028.30 451.90V498.80M1041.30 451.90V498.80M1054.30 451.90V498.80M1067.30 451.90V498.80M417.30 461.00H1080.50M417.30 470.55H1080.50M417.30 480.10H1080.50M417.30 489.65H1080.50" stroke="#dadada" stroke-width="1" fill="none" shape-rendering="crispEdges"/>
<text x="413.80" y="463.50" text-anchor="end" class="yl">4</text>
<text x="413.80" y="473.05" text-anchor="end" class="yl">3</text>
<text x="413.80" y="482.60" text-anchor="end" class="yl">2</text>
<text x="413.80" y="492.15" text-anchor="end" class="yl">1</text>
<path d="M417.30 465.90H1079.50" stroke="#ee8a8a" stroke-width="1.7" stroke-dasharray="9.1 4.17" fill="none"/>
<path d="M761.30 451.90V498.80" stroke="#9a9ae2" stroke-width="1" fill="none" shape-rendering="crispEdges"/>
<polyline points="417.8,497.9 418.8,495.0 419.8,494.8 420.8,493.2 421.8,492.3 422.8,494.5 423.8,494.2 424.8,494.6 425.8,491.2 426.8,490.6 427.8,494.1 428.8,495.6 429.8,496.1 430.8,496.7 431.8,496.5 432.8,495.5 433.8,496.7 434.8,495.8 435.8,496.6 436.8,497.5 437.8,495.7 438.8,494.7 439.8,496.8 440.8,495.3 441.8,496.6 442.8,496.2 443.8,493.7 444.8,493.7 445.8,492.5 446.8,490.5 447.8,491.2 448.8,490.0 449.8,487.4 450.8,489.7 451.8,489.1 452.8,489.2 453.8,490.1 454.8,489.0 455.8,488.4 456.8,494.3 457.8,495.7 458.8,495.3 459.8,494.8 460.8,495.2 461.8,496.8 462.8,497.6 463.8,497.7 464.8,495.8 465.8,497.0 466.8,497.5 467.8,497.9 468.8,496.7 469.8,495.2 470.8,497.9 471.8,496.3 472.8,496.7 473.8,495.1 474.8,495.3 475.8,496.9 476.8,496.7 477.8,496.2 478.8,497.6 479.8,497.8 480.8,498.0 481.8,497.4 482.8,496.3 483.8,497.6 484.8,497.4 485.8,496.6 486.8,495.7 487.8,494.0 488.8,494.4 489.8,486.4 490.8,485.6 491.8,486.2 492.8,488.5 493.8,489.9 494.8,489.1 495.8,486.2 496.8,489.0 497.8,489.3 498.8,492.6 499.8,494.8 500.8,495.7 501.8,495.8 502.8,496.4 503.8,495.5 504.8,497.5 505.8,495.3 506.8,495.5 507.8,495.5 508.8,492.2 509.8,492.1 510.8,493.0 511.8,493.2 512.8,489.1 513.8,488.0 514.8,489.5 515.8,489.5 516.8,489.8 517.8,487.0 518.8,490.7 519.8,487.3 520.8,491.5 521.8,491.2 522.8,487.6 523.8,490.1 524.8,491.7 525.8,491.2 526.8,493.0 527.8,494.5 528.8,492.0 529.8,492.8 530.8,489.6 531.8,488.5 532.8,487.9 533.8,488.7 534.8,488.1 535.8,488.5 536.8,488.7 537.8,489.4 538.8,489.3 539.8,489.5 540.8,490.3 541.8,491.0 542.8,494.5 543.8,493.1 544.8,494.2 545.8,497.3 546.8,495.5 547.8,494.6 548.8,494.6 549.8,496.5 550.8,496.0 551.8,496.2 552.8,493.7 553.8,494.0 554.8,496.4 555.8,496.4 556.8,496.8 557.8,494.5 558.8,496.4 559.8,497.7 560.8,496.6 561.8,497.9 562.8,496.5 563.8,496.7 564.8,495.1 565.8,496.9 566.8,497.8 567.8,498.0 568.8,497.6 569.8,494.9 570.8,496.8 571.8,497.7 572.8,498.0 573.8,497.8 574.8,497.4 575.8,497.6 576.8,497.4 577.8,496.8 578.8,496.8 579.8,493.3 580.8,497.8 581.8,496.1 582.8,494.0 583.8,493.7 584.8,492.6 585.8,492.0 586.8,491.9 587.8,490.1 588.8,495.1 589.8,493.3 590.8,489.2 591.8,491.8 592.8,491.2 593.8,492.4 594.8,489.1 595.8,488.9 596.8,488.8 597.8,487.9 598.8,492.5 599.8,491.3 600.8,490.7 601.8,492.4 602.8,489.0 603.8,488.0 604.8,487.0 605.8,488.8 606.8,491.1 607.8,490.0 608.8,488.8 609.8,490.4 610.8,489.8 611.8,490.2 612.8,490.8 613.8,487.7 614.8,487.9 615.8,489.1 616.8,490.1 617.8,492.7 618.8,490.5 619.8,488.8 620.8,490.5 621.8,488.8 622.8,487.7 623.8,487.9 624.8,490.4 625.8,491.7 626.8,490.7 627.8,492.1 628.8,491.0 629.8,492.5 630.8,493.5 631.8,492.9 632.8,492.2 633.8,489.0 634.8,488.1 635.8,487.3 636.8,489.6 637.8,495.3 638.8,493.1 639.8,494.3 640.8,490.9 641.8,490.8 642.8,490.6 643.8,490.1 644.8,491.7 645.8,489.5 646.8,488.7 647.8,491.3 648.8,491.7 649.8,491.6 650.8,493.2 651.8,494.0 652.8,491.7 653.8,490.3 654.8,491.2 655.8,489.2 656.8,490.1 657.8,492.0 658.8,490.2 659.8,487.9 660.8,487.1 661.8,488.1 662.8,487.9 663.8,489.7 664.8,488.8 665.8,491.6 666.8,491.4 667.8,491.1 668.8,492.8 669.8,496.3 670.8,493.4 671.8,497.2 672.8,497.3 673.8,496.9 674.8,492.0 675.8,496.2 676.8,493.3 677.8,491.7 678.8,496.4 679.8,496.1 680.8,491.3 681.8,490.9 682.8,491.7 683.8,492.7 684.8,493.0 685.8,488.4 686.8,491.0 687.8,492.8 688.8,492.4 689.8,493.5 690.8,493.7 691.8,495.6 692.8,497.8 693.8,496.1 694.8,495.6 695.8,496.0 696.8,494.7 697.8,493.2 698.8,493.4 699.8,492.7 700.8,494.8 701.8,497.5 702.8,495.7 703.8,494.7 704.8,496.9 705.8,494.7 706.8,496.3 707.8,493.9 708.8,490.8 709.8,491.9 710.8,492.2 711.8,490.9 712.8,493.6 713.8,495.6 714.8,495.0 715.8,495.0 716.8,495.7 717.8,496.3 718.8,497.7 719.8,495.9 720.8,497.5 721.8,495.5 722.8,494.9 723.8,494.0 724.8,493.2 725.8,495.4 726.8,493.8 727.8,494.6 728.8,493.8 729.8,494.2 730.8,489.6 731.8,490.0 732.8,487.1 733.8,488.9 734.8,490.8 735.8,492.9 736.8,492.3 737.8,492.6 738.8,492.4 739.8,489.5 740.8,487.8 741.8,488.9 742.8,489.4 743.8,490.0 744.8,491.1 745.8,492.7 746.8,492.1 747.8,494.9 748.8,495.1 749.8,494.8 750.8,494.1 751.8,494.8 752.8,495.2 753.8,492.4 754.8,495.6 755.8,495.1 756.8,492.8 757.8,492.3 758.8,490.4 759.8,491.1 760.8,492.9 761.8,492.8 762.8,489.0 763.8,491.5 764.8,493.1 765.8,491.0 766.8,491.0 767.8,491.0 768.8,493.6 769.8,492.2 770.8,492.1 771.8,492.2 772.8,492.8 773.8,493.7 774.8,492.6 775.8,491.9 776.8,490.9 777.8,489.5 778.8,491.3 779.8,492.0 780.8,490.3 781.8,490.5 782.8,490.5 783.8,491.2 784.8,491.9 785.8,490.0 786.8,488.5 787.8,489.2 788.8,492.8 789.8,492.6 790.8,490.2 791.8,489.2 792.8,490.9 793.8,489.2 794.8,487.6 795.8,488.0 796.8,490.0 797.8,489.9 798.8,488.9 799.8,488.5 800.8,487.0 801.8,487.6 802.8,488.6 803.8,489.4 804.8,489.4 805.8,488.9 806.8,487.6 807.8,487.2 808.8,489.0 809.8,487.7 810.8,487.5 811.8,486.5 812.8,489.8 813.8,486.9 814.8,486.7 815.8,486.1 816.8,486.5 817.8,487.3 818.8,486.8 819.8,487.6 820.8,489.1 821.8,487.0 822.8,488.9 823.8,486.6 824.8,486.4 825.8,488.5 826.8,489.6 827.8,489.8 828.8,491.6 829.8,490.7 830.8,490.3 831.8,489.5 832.8,489.6 833.8,489.8 834.8,488.1 835.8,490.9 836.8,489.9 837.8,490.5 838.8,492.7 839.8,492.4 840.8,494.3 841.8,494.6 842.8,496.0 843.8,497.7 844.8,496.8 845.8,494.4 846.8,495.7 847.8,495.8 848.8,496.0 849.8,494.3 850.8,494.5 851.8,495.6 852.8,495.2 853.8,498.0 854.8,495.9 855.8,492.8 856.8,492.7 857.8,493.2 858.8,496.2 859.8,495.9 860.8,493.6 861.8,494.3 862.8,497.9 863.8,497.0 864.8,495.7 865.8,496.9 866.8,497.4 867.8,494.0 868.8,493.8 869.8,496.4 870.8,494.7 871.8,491.9 872.8,494.7 873.8,496.8 874.8,495.7 875.8,495.2 876.8,497.0 877.8,496.8 878.8,495.6 879.8,494.4 880.8,493.0 881.8,489.4 882.8,491.0 883.8,491.4 884.8,492.1 885.8,490.3 886.8,488.0 887.8,488.1 888.8,489.8 889.8,490.2 890.8,491.9 891.8,493.6 892.8,493.0 893.8,494.9 894.8,498.0 895.8,497.8 896.8,495.3 897.8,497.2 898.8,493.0 899.8,493.4 900.8,489.4 901.8,486.9 902.8,485.2 903.8,482.9 904.8,485.9 905.8,483.4 906.8,483.4 907.8,489.0 908.8,489.0 909.8,490.0 910.8,492.0 911.8,487.6 912.8,491.0 913.8,491.7 914.8,492.5 915.8,494.0 916.8,492.5 917.8,492.0 918.8,495.5 919.8,495.1 920.8,493.9 921.8,495.3 922.8,493.4 923.8,495.6 924.8,497.2 925.8,495.6 926.8,494.6 927.8,493.8 928.8,489.9 929.8,490.6 930.8,490.0 931.8,490.2 932.8,488.5 933.8,487.0 934.8,486.3 935.8,489.9 936.8,489.4 937.8,491.9 938.8,492.7 939.8,489.7 940.8,489.3 941.8,492.0 942.8,491.2 943.8,492.0 944.8,490.9 945.8,489.2 946.8,488.3 947.8,488.4 948.8,486.3 949.8,486.8 950.8,485.2 951.8,489.9 952.8,490.6 953.8,493.9 954.8,491.7 955.8,490.2 956.8,493.1 957.8,494.9 958.8,490.5 959.8,491.6 960.8,490.9 961.8,491.1 962.8,490.4 963.8,488.7 964.8,489.5 965.8,494.3 966.8,494.6 967.8,494.2 968.8,497.0 969.8,496.0 970.8,497.5 971.8,495.8 972.8,496.3 973.8,497.6 974.8,497.5 975.8,497.3 976.8,497.4 977.8,495.9 978.8,492.5 979.8,492.4 980.8,495.2 981.8,494.5 982.8,495.2 983.8,494.9 984.8,495.0 985.8,494.8 986.8,494.7 987.8,494.2 988.8,496.5 989.8,497.4 990.8,496.3 991.8,497.5 992.8,495.1 993.8,497.9 994.8,495.0 995.8,494.8 996.8,492.7 997.8,494.5 998.8,493.1 999.8,493.3 1000.8,495.7 1001.8,497.0 1002.8,495.1 1003.8,494.1 1004.8,496.7 1005.8,497.8 1006.8,496.9 1007.8,497.6 1008.8,497.8 1009.8,494.6 1010.8,497.9 1011.8,497.6 1012.8,497.5 1013.8,497.9 1014.8,497.5 1015.8,497.8 1016.8,497.6 1017.8,496.6 1018.8,498.0 1019.8,497.7 1020.8,495.8 1021.8,496.6 1022.8,497.6 1023.8,495.4 1024.8,495.1 1025.8,496.8 1026.8,494.2 1027.8,490.4 1028.8,492.4 1029.8,492.5 1030.8,493.9 1031.8,491.7 1032.8,490.4 1033.8,491.1 1034.8,490.0 1035.8,490.2 1036.8,492.1 1037.8,492.4 1038.8,491.8 1039.8,492.9 1040.8,492.9 1041.8,493.8 1042.8,492.2 1043.8,491.3 1044.8,489.5 1045.8,492.4 1046.8,491.5 1047.8,493.0 1048.8,488.1 1049.8,493.7 1050.8,494.1 1051.8,497.1 1052.8,494.3 1053.8,495.2 1054.8,494.7 1055.8,493.2 1056.8,492.3 1057.8,491.9 1058.8,491.5 1059.8,491.8 1060.8,487.7 1061.8,489.8 1062.8,485.5 1063.8,487.4 1064.8,485.6 1065.8,488.3 1066.8,485.2 1067.8,489.1 1068.8,489.8 1069.8,487.4 1070.8,487.4 1071.8,487.0 1072.8,486.4 1073.8,487.7 1074.8,489.6 1075.8,492.6 1076.8,493.4 1077.8,496.0 1078.8,496.7 1079.8,494.5" fill="none" stroke="#0c0c0c" stroke-width="1.35" stroke-linejoin="miter" stroke-miterlimit="3"/>
<rect x="398.80" y="505.60" width="681.70" height="46.90" fill="#e7e7e7"/>
<path d="M417.30 505.60V552.50M430.30 505.60V552.50M443.30 505.60V552.50M456.30 505.60V552.50M469.30 505.60V552.50M482.30 505.60V552.50M495.30 505.60V552.50M508.30 505.60V552.50M521.30 505.60V552.50M534.30 505.60V552.50M547.30 505.60V552.50M560.30 505.60V552.50M573.30 505.60V552.50M586.30 505.60V552.50M599.30 505.60V552.50M612.30 505.60V552.50M625.30 505.60V552.50M638.30 505.60V552.50M651.30 505.60V552.50M664.30 505.60V552.50M677.30 505.60V552.50M690.30 505.60V552.50M703.30 505.60V552.50M716.30 505.60V552.50M729.30 505.60V552.50M742.30 505.60V552.50M755.30 505.60V552.50M768.30 505.60V552.50M781.30 505.60V552.50M794.30 505.60V552.50M807.30 505.60V552.50M820.30 505.60V552.50M833.30 505.60V552.50M846.30 505.60V552.50M859.30 505.60V552.50M872.30 505.60V552.50M885.30 505.60V552.50M898.30 505.60V552.50M911.30 505.60V552.50M924.30 505.60V552.50M937.30 505.60V552.50M950.30 505.60V552.50M963.30 505.60V552.50M976.30 505.60V552.50M989.30 505.60V552.50M1002.30 505.60V552.50M1015.30 505.60V552.50M1028.30 505.60V552.50M1041.30 505.60V552.50M1054.30 505.60V552.50M1067.30 505.60V552.50M417.30 514.70H1080.50M417.30 524.25H1080.50M417.30 533.80H1080.50M417.30 543.35H1080.50" stroke="#dadada" stroke-width="1" fill="none" shape-rendering="crispEdges"/>
<text x="413.80" y="517.20" text-anchor="end" class="yl">4</text>
<text x="413.80" y="526.75" text-anchor="end" class="yl">3</text>
<text x="413.80" y="536.30" text-anchor="end" class="yl">2</text>
<text x="413.80" y="545.85" text-anchor="end" class="yl">1</text>
<path d="M417.30 533.10H1079.50" stroke="#ee8a8a" stroke-width="1.7" stroke-dasharray="9.1 4.17" fill="none"/>
<path d="M761.30 505.60V552.50" stroke="#9a9ae2" stroke-width="1" fill="none" shape-rendering="crispEdges"/>
<polyline points="417.8,549.0 418.8,546.2 419.8,544.8 420.8,547.7 421.8,547.2 422.8,542.9 423.8,543.0 424.8,544.9 425.8,546.5 426.8,548.8 427.8,550.0 428.8,551.6 429.8,546.5 430.8,551.6 431.8,550.6 432.8,549.4 433.8,549.7 434.8,546.9 435.8,547.8 436.8,548.1 437.8,549.5 438.8,551.0 439.8,549.6 440.8,547.9 441.8,548.9 442.8,550.8 443.8,550.7 444.8,551.3 445.8,549.1 446.8,549.6 447.8,549.3 448.8,551.4 449.8,546.9 450.8,548.8 451.8,548.8 452.8,548.4 453.8,545.2 454.8,543.8 455.8,544.7 456.8,544.0 457.8,544.7 458.8,539.2 459.8,542.5 460.8,539.5 461.8,542.1 462.8,540.9 463.8,540.9 464.8,544.4 465.8,543.4 466.8,548.0 467.8,547.9 468.8,551.0 469.8,550.8 470.8,550.9 471.8,551.3 472.8,551.3 473.8,551.0 474.8,551.4 475.8,551.3 476.8,549.1 477.8,547.4 478.8,549.7 479.8,551.5 480.8,551.4 481.8,549.3 482.8,548.7 483.8,551.4 484.8,549.3 485.8,549.6 486.8,550.6 487.8,549.3 488.8,549.7 489.8,551.4 490.8,550.3 491.8,550.8 492.8,551.1 493.8,548.7 494.8,551.7 495.8,550.3 496.8,551.5 497.8,551.6 498.8,551.1 499.8,548.6 500.8,550.4 501.8,549.1 502.8,547.0 503.8,547.1 504.8,548.4 505.8,547.6 506.8,548.9 507.8,547.6 508.8,549.9 509.8,551.5 510.8,550.3 511.8,547.9 512.8,546.4 513.8,547.9 514.8,547.9 515.8,549.4 516.8,551.6 517.8,551.7 518.8,551.0 519.8,551.5 520.8,548.6 521.8,551.6 522.8,551.5 523.8,551.0 524.8,549.5 525.8,548.8 526.8,551.1 527.8,551.0 528.8,550.6 529.8,551.7 530.8,551.2 531.8,550.8 532.8,547.9 533.8,548.4 534.8,550.2 535.8,549.6 536.8,548.8 537.8,549.2 538.8,549.1 539.8,548.8 540.8,548.8 541.8,550.0 542.8,549.3 543.8,551.3 544.8,551.0 545.8,550.7 546.8,551.5 547.8,550.5 548.8,551.6 549.8,549.3 550.8,551.4 551.8,549.6 552.8,550.7 553.8,550.7 554.8,551.3 555.8,549.5 556.8,549.2 557.8,546.9 558.8,545.3 559.8,545.4 560.8,546.6 561.8,547.1 562.8,549.1 563.8,547.6 564.8,545.9 565.8,548.2 566.8,543.4 567.8,544.9 568.8,543.8 569.8,546.4 570.8,546.4 571.8,546.6 572.8,545.9 573.8,546.0 574.8,547.0 575.8,546.3 576.8,545.2 577.8,542.9 578.8,538.7 579.8,537.4 580.8,537.0 581.8,540.6 582.8,543.0 583.8,545.7 584.8,545.3 585.8,543.7 586.8,545.2 587.8,544.8 588.8,545.0 589.8,547.9 590.8,543.0 591.8,545.7 592.8,543.8 593.8,542.2 594.8,544.2 595.8,541.5 596.8,540.7 597.8,540.4 598.8,543.5 599.8,543.4 600.8,541.4 601.8,544.6 602.8,545.5 603.8,542.6 604.8,541.6 605.8,543.6 606.8,546.0 607.8,547.8 608.8,549.4 609.8,548.0 610.8,543.9 611.8,546.6 612.8,543.2 613.8,546.7 614.8,548.2 615.8,547.4 616.8,544.9 617.8,545.3 618.8,547.5 619.8,545.5 620.8,547.4 621.8,547.0 622.8,546.4 623.8,548.2 624.8,548.0 625.8,548.4 626.8,549.0 627.8,546.0 628.8,543.4 629.8,545.9 630.8,544.4 631.8,540.7 632.8,540.6 633.8,540.9 634.8,541.8 635.8,540.6 636.8,543.3 637.8,547.4 638.8,549.4 639.8,550.1 640.8,549.0 641.8,547.0 642.8,550.0 643.8,550.4 644.8,551.1 645.8,550.9 646.8,551.4 647.8,547.8 648.8,549.6 649.8,546.0 650.8,547.8 651.8,547.7 652.8,547.6 653.8,549.1 654.8,550.6 655.8,549.2 656.8,551.0 657.8,551.5 658.8,551.3 659.8,550.8 660.8,548.4 661.8,549.3 662.8,546.9 663.8,546.9 664.8,545.1 665.8,543.1 666.8,542.6 667.8,544.4 668.8,547.1 669.8,548.5 670.8,545.4 671.8,542.3 672.8,542.9 673.8,542.8 674.8,549.3 675.8,545.4 676.8,547.8 677.8,547.6 678.8,544.7 679.8,545.2 680.8,544.2 681.8,541.9 682.8,538.4 683.8,541.0 684.8,545.2 685.8,544.5 686.8,546.3 687.8,546.2 688.8,545.5 689.8,545.7 690.8,542.4 691.8,543.5 692.8,546.0 693.8,545.7 694.8,545.4 695.8,545.3 696.8,543.5 697.8,545.3 698.8,547.2 699.8,544.9 700.8,545.1 701.8,543.9 702.8,544.6 703.8,543.3 704.8,544.2 705.8,543.6 706.8,543.3 707.8,544.0 708.8,542.2 709.8,543.7 710.8,545.2 711.8,543.6 712.8,541.5 713.8,544.8 714.8,549.0 715.8,547.1 716.8,545.9 717.8,546.2 718.8,546.4 719.8,545.8 720.8,545.9 721.8,543.7 722.8,543.4 723.8,544.5 724.8,541.4 725.8,542.7 726.8,544.6 727.8,542.8 728.8,540.6 729.8,543.3 730.8,541.6 731.8,543.1 732.8,545.4 733.8,543.0 734.8,542.5 735.8,542.8 736.8,544.4 737.8,540.9 738.8,542.8 739.8,542.5 740.8,542.3 741.8,544.6 742.8,544.3 743.8,545.7 744.8,542.0 745.8,542.2 746.8,542.2 747.8,544.8 748.8,545.1 749.8,544.8 750.8,546.5 751.8,546.6 752.8,539.4 753.8,540.3 754.8,544.4 755.8,541.8 756.8,541.3 757.8,543.8 758.8,543.8 759.8,546.0 760.8,546.3 761.8,547.5 762.8,546.6 763.8,544.9 764.8,542.4 765.8,542.4 766.8,545.1 767.8,542.3 768.8,544.4 769.8,543.9 770.8,544.3 771.8,543.5 772.8,544.4 773.8,542.3 774.8,543.1 775.8,542.5 776.8,544.6 777.8,541.6 778.8,546.1 779.8,547.0 780.8,548.1 781.8,545.9 782.8,547.4 783.8,547.4 784.8,550.8 785.8,549.1 786.8,546.2 787.8,543.7 788.8,540.4 789.8,540.4 790.8,537.8 791.8,542.8 792.8,545.2 793.8,543.0 794.8,543.9 795.8,544.0 796.8,545.4 797.8,541.4 798.8,541.0 799.8,541.7 800.8,544.6 801.8,544.8 802.8,542.6 803.8,547.1 804.8,548.2 805.8,548.0 806.8,546.9 807.8,546.9 808.8,549.5 809.8,547.9 810.8,546.7 811.8,545.0 812.8,548.5 813.8,546.2 814.8,546.9 815.8,547.3 816.8,547.5 817.8,546.5 818.8,544.8 819.8,545.9 820.8,544.2 821.8,544.5 822.8,543.2 823.8,540.4 824.8,540.7 825.8,540.7 826.8,542.9 827.8,542.0 828.8,543.6 829.8,544.0 830.8,541.9 831.8,543.0 832.8,541.3 833.8,541.5 834.8,540.1 835.8,542.9 836.8,546.1 837.8,545.6 838.8,545.7 839.8,549.3 840.8,546.6 841.8,548.0 842.8,547.4 843.8,547.3 844.8,548.0 845.8,546.5 846.8,547.7 847.8,548.7 848.8,546.3 849.8,544.4 850.8,545.5 851.8,547.4 852.8,547.7 853.8,549.1 854.8,548.2 855.8,547.1 856.8,542.5 857.8,542.5 858.8,539.9 859.8,537.8 860.8,541.3 861.8,542.9 862.8,541.3 863.8,546.4 864.8,545.4 865.8,546.1 866.8,551.6 867.8,548.3 868.8,549.1 869.8,548.9 870.8,546.9 871.8,545.3 872.8,548.1 873.8,548.0 874.8,546.5 875.8,544.9 876.8,546.1 877.8,545.3 878.8,547.3 879.8,546.7 880.8,547.6 881.8,543.9 882.8,541.3 883.8,543.8 884.8,543.2 885.8,542.7 886.8,538.8 887.8,541.6 888.8,543.8 889.8,544.9 890.8,544.3 891.8,548.5 892.8,545.4 893.8,544.9 894.8,543.9 895.8,546.1 896.8,547.4 897.8,545.6 898.8,541.4 899.8,541.2 900.8,541.5 901.8,544.2 902.8,545.4 903.8,547.0 904.8,545.1 905.8,543.2 906.8,546.8 907.8,544.4 908.8,543.3 909.8,544.9 910.8,544.4 911.8,545.0 912.8,546.4 913.8,548.8 914.8,542.8 915.8,547.3 916.8,546.3 917.8,545.5 918.8,545.5 919.8,545.8 920.8,542.1 921.8,542.2 922.8,542.8 923.8,542.2 924.8,541.8 925.8,545.2 926.8,543.0 927.8,545.1 928.8,545.7 929.8,543.6 930.8,544.3 931.8,545.7 932.8,545.4 933.8,544.0 934.8,549.0 935.8,546.9 936.8,543.6 937.8,544.6 938.8,542.9 939.8,543.6 940.8,545.4 941.8,545.5 942.8,545.3 943.8,545.5 944.8,541.2 945.8,542.9 946.8,545.5 947.8,546.7 948.8,545.8 949.8,547.5 950.8,547.6 951.8,550.1 952.8,547.8 953.8,546.1 954.8,546.0 955.8,544.6 956.8,542.1 957.8,541.3 958.8,540.4 959.8,541.0 960.8,536.4 961.8,537.3 962.8,542.2 963.8,543.4 964.8,539.4 965.8,540.9 966.8,542.6 967.8,542.6 968.8,538.0 969.8,538.9 970.8,540.0 971.8,540.9 972.8,542.5 973.8,542.1 974.8,539.5 975.8,540.5 976.8,541.3 977.8,538.2 978.8,543.0 979.8,542.4 980.8,542.6 981.8,538.1 982.8,540.2 983.8,542.4 984.8,543.1 985.8,543.6 986.8,541.7 987.8,543.2 988.8,543.7 989.8,539.1 990.8,539.7 991.8,539.0 992.8,539.9 993.8,540.9 994.8,542.3 995.8,543.1 996.8,543.0 997.8,541.3 998.8,541.6 999.8,539.5 1000.8,540.3 1001.8,538.8 1002.8,539.0 1003.8,541.8 1004.8,543.7 1005.8,544.1 1006.8,544.1 1007.8,544.9 1008.8,545.5 1009.8,544.1 1010.8,545.0 1011.8,542.3 1012.8,542.0 1013.8,548.2 1014.8,544.4 1015.8,546.1 1016.8,545.9 1017.8,548.3 1018.8,551.6 1019.8,551.6 1020.8,550.9 1021.8,551.6 1022.8,551.4 1023.8,551.4 1024.8,551.3 1025.8,550.2 1026.8,550.8 1027.8,551.0 1028.8,548.9 1029.8,546.1 1030.8,548.8 1031.8,548.1 1032.8,549.7 1033.8,548.2 1034.8,546.9 1035.8,550.2 1036.8,551.5 1037.8,551.6 1038.8,548.0 1039.8,549.5 1040.8,551.4 1041.8,551.3 1042.8,548.7 1043.8,549.2 1044.8,550.5 1045.8,550.0 1046.8,550.4 1047.8,551.5 1048.8,551.6 1049.8,551.2 1050.8,551.0 1051.8,550.0 1052.8,551.2 1053.8,550.1 1054.8,547.0 1055.8,548.9 1056.8,546.7 1057.8,545.7 1058.8,544.7 1059.8,545.9 1060.8,542.3 1061.8,542.0 1062.8,545.7 1063.8,546.9 1064.8,543.9 1065.8,544.7 1066.8,548.6 1067.8,547.7 1068.8,546.1 1069.8,549.8 1070.8,547.3 1071.8,545.9 1072.8,548.7 1073.8,550.7 1074.8,549.7 1075.8,549.1 1076.8,548.3 1077.8,549.0 1078.8,551.1 1079.8,549.6" fill="none" stroke="#0c0c0c" stroke-width="1.35" stroke-linejoin="miter" stroke-miterlimit="3"/>
<rect x="398.80" y="559.30" width="681.70" height="46.90" fill="#e7e7e7"/>
<path d="M417.30 559.30V606.20M430.30 559.30V606.20M443.30 559.30V606.20M456.30 559.30V606.20M469.30 559.30V606.20M482.30 559.30V606.20M495.30 559.30V606.20M508.30 559.30V606.20M521.30 559.30V606.20M534.30 559.30V606.20M547.30 559.30V606.20M560.30 559.30V606.20M573.30 559.30V606.20M586.30 559.30V606.20M599.30 559.30V606.20M612.30 559.30V606.20M625.30 559.30V606.20M638.30 559.30V606.20M651.30 559.30V606.20M664.30 559.30V606.20M677.30 559.30V606.20M690.30 559.30V606.20M703.30 559.30V606.20M716.30 559.30V606.20M729.30 559.30V606.20M742.30 559.30V606.20M755.30 559.30V606.20M768.30 559.30V606.20M781.30 559.30V606.20M794.30 559.30V606.20M807.30 559.30V606.20M820.30 559.30V606.20M833.30 559.30V606.20M846.30 559.30V606.20M859.30 559.30V606.20M872.30 559.30V606.20M885.30 559.30V606.20M898.30 559.30V606.20M911.30 559.30V606.20M924.30 559.30V606.20M937.30 559.30V606.20M950.30 559.30V606.20M963.30 559.30V606.20M976.30 559.30V606.20M989.30 559.30V606.20M1002.30 559.30V606.20M1015.30 559.30V606.20M1028.30 559.30V606.20M1041.30 559.30V606.20M1054.30 559.30V606.20M1067.30 559.30V606.20M417.30 568.40H1080.50M417.30 577.95H1080.50M417.30 587.50H1080.50M417.30 597.05H1080.50" stroke="#dadada" stroke-width="1" fill="none" shape-rendering="crispEdges"/>
<text x="413.80" y="570.90" text-anchor="end" class="yl">4</text>
<text x="413.80" y="580.45" text-anchor="end" class="yl">3</text>
<text x="413.80" y="590.00" text-anchor="end" class="yl">2</text>
<text x="413.80" y="599.55" text-anchor="end" class="yl">1</text>
<path d="M417.30 577.30H1079.50" stroke="#ee8a8a" stroke-width="1.7" stroke-dasharray="9.1 4.17" fill="none"/>
<path d="M761.30 559.30V606.20" stroke="#9a9ae2" stroke-width="1" fill="none" shape-rendering="crispEdges"/>
<polyline points="417.8,600.6 418.8,602.5 419.8,601.9 420.8,603.2 421.8,599.6 422.8,599.1 423.8,601.3 424.8,600.1 425.8,599.5 426.8,597.5 427.8,595.7 428.8,597.1 429.8,596.1 430.8,593.2 431.8,595.0 432.8,593.5 433.8,597.5 434.8,601.5 435.8,600.9 436.8,598.1 437.8,597.9 438.8,598.5 439.8,598.3 440.8,598.9 441.8,601.0 442.8,598.7 443.8,601.7 444.8,600.8 445.8,597.9 446.8,596.9 447.8,594.7 448.8,594.4 449.8,595.4 450.8,594.1 451.8,600.6 452.8,600.7 453.8,595.5 454.8,595.8 455.8,596.7 456.8,595.8 457.8,599.5 458.8,596.6 459.8,593.9 460.8,595.3 461.8,594.5 462.8,593.1 463.8,595.3 464.8,596.9 465.8,599.0 466.8,594.8 467.8,597.1 468.8,596.5 469.8,595.2 470.8,594.0 471.8,595.7 472.8,590.9 473.8,593.8 474.8,593.3 475.8,596.3 476.8,595.8 477.8,597.2 478.8,596.7 479.8,597.5 480.8,599.7 481.8,596.0 482.8,595.5 483.8,595.4 484.8,600.0 485.8,600.2 486.8,596.4 487.8,600.2 488.8,599.3 489.8,596.4 490.8,596.1 491.8,596.9 492.8,598.0 493.8,597.7 494.8,599.0 495.8,598.6 496.8,597.0 497.8,600.0 498.8,598.7 499.8,598.3 500.8,598.8 501.8,599.6 502.8,598.4 503.8,595.2 504.8,596.9 505.8,594.9 506.8,593.2 507.8,594.9 508.8,595.6 509.8,596.0 510.8,596.2 511.8,598.7 512.8,602.2 513.8,600.3 514.8,597.4 515.8,597.7 516.8,601.7 517.8,600.9 518.8,597.9 519.8,595.7 520.8,597.9 521.8,598.6 522.8,600.3 523.8,600.7 524.8,597.8 525.8,599.3 526.8,599.4 527.8,600.3 528.8,599.5 529.8,601.0 530.8,598.2 531.8,599.1 532.8,601.1 533.8,601.9 534.8,597.4 535.8,597.7 536.8,601.2 537.8,599.0 538.8,595.6 539.8,592.5 540.8,594.6 541.8,594.6 542.8,598.9 543.8,596.5 544.8,599.3 545.8,598.8 546.8,602.0 547.8,603.5 548.8,605.4 549.8,603.9 550.8,601.7 551.8,605.2 552.8,605.0 553.8,605.0 554.8,604.1 555.8,602.0 556.8,600.1 557.8,602.1 558.8,599.8 559.8,601.0 560.8,604.1 561.8,602.8 562.8,602.8 563.8,603.2 564.8,602.5 565.8,601.3 566.8,599.0 567.8,599.8 568.8,599.3 569.8,599.9 570.8,598.5 571.8,594.4 572.8,595.6 573.8,595.5 574.8,595.7 575.8,594.3 576.8,595.4 577.8,596.6 578.8,598.8 579.8,597.4 580.8,594.5 581.8,591.5 582.8,593.7 583.8,595.3 584.8,597.9 585.8,595.4 586.8,599.2 587.8,599.4 588.8,599.5 589.8,602.1 590.8,601.8 591.8,599.9 592.8,599.5 593.8,601.2 594.8,602.9 595.8,603.9 596.8,601.8 597.8,599.9 598.8,605.3 599.8,603.2 600.8,601.7 601.8,602.2 602.8,601.5 603.8,600.7 604.8,602.7 605.8,604.4 606.8,601.2 607.8,603.8 608.8,601.2 609.8,602.1 610.8,602.7 611.8,601.6 612.8,602.1 613.8,600.0 614.8,599.0 615.8,598.5 616.8,598.3 617.8,598.9 618.8,598.8 619.8,601.0 620.8,605.1 621.8,603.9 622.8,604.4 623.8,602.8 624.8,602.0 625.8,601.3 626.8,603.5 627.8,604.3 628.8,601.5 629.8,602.7 630.8,603.2 631.8,601.9 632.8,604.4 633.8,602.8 634.8,603.5 635.8,603.8 636.8,602.3 637.8,602.1 638.8,598.8 639.8,603.6 640.8,603.5 641.8,601.8 642.8,602.4 643.8,602.1 644.8,601.6 645.8,602.8 646.8,602.2 647.8,600.4 648.8,599.9 649.8,601.7 650.8,604.2 651.8,603.3 652.8,603.8 653.8,600.3 654.8,597.9 655.8,599.0 656.8,596.4 657.8,595.4 658.8,593.4 659.8,593.1 660.8,596.1 661.8,596.3 662.8,594.8 663.8,595.6 664.8,596.5 665.8,595.2 666.8,596.6 667.8,595.5 668.8,596.5 669.8,594.3 670.8,597.8 671.8,595.9 672.8,596.5 673.8,596.2 674.8,595.8 675.8,594.9 676.8,597.1 677.8,594.7 678.8,596.8 679.8,597.9 680.8,597.7 681.8,595.1 682.8,592.6 683.8,593.5 684.8,597.7 685.8,596.9 686.8,596.9 687.8,595.9 688.8,596.0 689.8,594.8 690.8,596.8 691.8,598.4 692.8,596.6 693.8,595.7 694.8,593.6 695.8,594.6 696.8,592.8 697.8,596.9 698.8,595.7 699.8,593.5 700.8,594.8 701.8,595.2 702.8,596.7 703.8,593.5 704.8,599.1 705.8,594.6 706.8,595.3 707.8,597.6 708.8,599.1 709.8,599.4 710.8,597.8 711.8,597.5 712.8,598.1 713.8,601.0 714.8,603.2 715.8,602.8 716.8,605.0 717.8,602.2 718.8,602.7 719.8,603.4 720.8,601.3 721.8,601.9 722.8,601.6 723.8,599.6 724.8,600.1 725.8,599.3 726.8,601.1 727.8,604.1 728.8,604.2 729.8,601.6 730.8,601.8 731.8,596.9 732.8,596.9 733.8,595.2 734.8,595.6 735.8,595.0 736.8,597.0 737.8,598.3 738.8,597.0 739.8,595.7 740.8,594.9 741.8,595.5 742.8,593.9 743.8,594.0 744.8,595.1 745.8,591.8 746.8,594.4 747.8,593.1 748.8,594.5 749.8,595.7 750.8,594.7 751.8,594.5 752.8,592.8 753.8,591.8 754.8,594.9 755.8,597.0 756.8,595.3 757.8,597.3 758.8,596.5 759.8,596.3 760.8,594.6 761.8,594.0 762.8,594.7 763.8,595.5 764.8,592.4 765.8,593.5 766.8,594.0 767.8,596.4 768.8,595.0 769.8,594.7 770.8,593.7 771.8,593.5 772.8,595.4 773.8,595.3 774.8,594.1 775.8,599.4 776.8,597.5 777.8,595.6 778.8,596.5 779.8,595.3 780.8,595.4 781.8,594.6 782.8,595.3 783.8,594.1 784.8,592.4 785.8,595.1 786.8,596.8 787.8,597.5 788.8,596.4 789.8,599.6 790.8,603.3 791.8,598.9 792.8,600.7 793.8,599.5 794.8,602.0 795.8,603.6 796.8,602.2 797.8,604.7 798.8,603.3 799.8,603.1 800.8,604.4 801.8,605.3 802.8,604.0 803.8,604.2 804.8,600.8 805.8,600.2 806.8,602.0 807.8,602.9 808.8,602.7 809.8,605.2 810.8,604.9 811.8,603.7 812.8,599.8 813.8,605.3 814.8,603.7 815.8,602.8 816.8,599.9 817.8,599.7 818.8,601.7 819.8,599.4 820.8,601.4 821.8,603.8 822.8,601.2 823.8,600.7 824.8,600.7 825.8,599.6 826.8,601.3 827.8,603.1 828.8,602.0 829.8,604.8 830.8,603.6 831.8,604.7 832.8,602.9 833.8,602.3 834.8,604.0 835.8,605.1 836.8,604.1 837.8,605.4 838.8,604.6 839.8,605.3 840.8,603.7 841.8,602.1 842.8,602.2 843.8,602.2 844.8,604.0 845.8,602.7 846.8,599.6 847.8,599.0 848.8,597.9 849.8,594.3 850.8,594.6 851.8,595.3 852.8,594.4 853.8,596.7 854.8,598.4 855.8,598.1 856.8,596.4 857.8,599.7 858.8,601.0 859.8,602.0 860.8,602.5 861.8,602.8 862.8,602.2 863.8,602.5 864.8,602.3 865.8,601.8 866.8,603.1 867.8,603.3 868.8,603.3 869.8,605.4 870.8,605.2 871.8,605.4 872.8,604.1 873.8,604.0 874.8,602.2 875.8,602.3 876.8,604.7 877.8,604.4 878.8,601.3 879.8,604.4 880.8,603.1 881.8,603.8 882.8,601.4 883.8,605.0 884.8,603.1 885.8,603.6 886.8,605.1 887.8,603.7 888.8,604.7 889.8,605.1 890.8,605.2 891.8,605.3 892.8,605.4 893.8,602.4 894.8,598.3 895.8,601.7 896.8,600.5 897.8,604.2 898.8,604.2 899.8,601.9 900.8,603.0 901.8,601.3 902.8,604.6 903.8,601.6 904.8,599.8 905.8,595.9 906.8,597.6 907.8,598.0 908.8,602.0 909.8,603.4 910.8,601.3 911.8,605.1 912.8,605.4 913.8,602.0 914.8,602.7 915.8,605.0 916.8,604.8 917.8,605.1 918.8,603.2 919.8,604.4 920.8,604.9 921.8,605.3 922.8,603.3 923.8,604.2 924.8,603.4 925.8,603.1 926.8,603.8 927.8,604.2 928.8,604.3 929.8,603.3 930.8,602.3 931.8,600.4 932.8,599.6 933.8,599.3 934.8,601.6 935.8,603.6 936.8,603.4 937.8,604.1 938.8,604.3 939.8,604.3 940.8,604.9 941.8,602.8 942.8,601.7 943.8,599.8 944.8,602.6 945.8,602.7 946.8,604.2 947.8,605.2 948.8,604.4 949.8,605.1 950.8,603.2 951.8,605.3 952.8,603.6 953.8,604.4 954.8,604.5 955.8,605.2 956.8,605.0 957.8,603.2 958.8,601.1 959.8,603.9 960.8,602.8 961.8,603.0 962.8,599.8 963.8,602.0 964.8,600.2 965.8,601.9 966.8,602.6 967.8,603.4 968.8,601.9 969.8,601.9 970.8,602.5 971.8,602.3 972.8,604.8 973.8,599.7 974.8,601.4 975.8,601.4 976.8,601.9 977.8,604.2 978.8,602.5 979.8,600.4 980.8,599.9 981.8,597.8 982.8,598.3 983.8,598.3 984.8,597.5 985.8,597.8 986.8,594.4 987.8,597.4 988.8,601.7 989.8,602.0 990.8,602.3 991.8,603.7 992.8,603.7 993.8,605.4 994.8,604.9 995.8,605.3 996.8,605.0 997.8,604.9 998.8,604.7 999.8,602.6 1000.8,600.1 1001.8,600.4 1002.8,600.8 1003.8,599.5 1004.8,598.7 1005.8,600.0 1006.8,596.4 1007.8,600.2 1008.8,599.5 1009.8,598.8 1010.8,602.6 1011.8,600.6 1012.8,599.4 1013.8,600.0 1014.8,601.2 1015.8,603.2 1016.8,604.3 1017.8,600.3 1018.8,601.1 1019.8,599.1 1020.8,598.3 1021.8,594.3 1022.8,594.6 1023.8,597.5 1024.8,599.8 1025.8,599.4 1026.8,599.8 1027.8,598.5 1028.8,599.6 1029.8,598.3 1030.8,599.0 1031.8,599.1 1032.8,598.7 1033.8,595.6 1034.8,598.0 1035.8,595.9 1036.8,600.3 1037.8,592.4 1038.8,594.2 1039.8,595.2 1040.8,596.4 1041.8,599.4 1042.8,599.3 1043.8,600.5 1044.8,599.5 1045.8,600.7 1046.8,605.2 1047.8,602.1 1048.8,602.3 1049.8,603.7 1050.8,603.8 1051.8,602.9 1052.8,603.8 1053.8,602.9 1054.8,603.9 1055.8,604.8 1056.8,604.1 1057.8,604.1 1058.8,603.8 1059.8,602.4 1060.8,601.4 1061.8,600.6 1062.8,599.2 1063.8,600.4 1064.8,601.3 1065.8,600.5 1066.8,598.4 1067.8,596.2 1068.8,595.5 1069.8,598.6 1070.8,599.0 1071.8,599.3 1072.8,599.7 1073.8,599.5 1074.8,599.3 1075.8,599.4 1076.8,599.4 1077.8,597.4 1078.8,598.4 1079.8,599.1" fill="none" stroke="#0c0c0c" stroke-width="1.35" stroke-linejoin="miter" stroke-miterlimit="3"/>
<rect x="398.80" y="613.00" width="681.70" height="46.90" fill="#e7e7e7"/>
<path d="M417.30 613.00V659.90M430.30 613.00V659.90M443.30 613.00V659.90M456.30 613.00V659.90M469.30 613.00V659.90M482.30 613.00V659.90M495.30 613.00V659.90M508.30 613.00V659.90M521.30 613.00V659.90M534.30 613.00V659.90M547.30 613.00V659.90M560.30 613.00V659.90M573.30 613.00V659.90M586.30 613.00V659.90M599.30 613.00V659.90M612.30 613.00V659.90M625.30 613.00V659.90M638.30 613.00V659.90M651.30 613.00V659.90M664.30 613.00V659.90M677.30 613.00V659.90M690.30 613.00V659.90M703.30 613.00V659.90M716.30 613.00V659.90M729.30 613.00V659.90M742.30 613.00V659.90M755.30 613.00V659.90M768.30 613.00V659.90M781.30 613.00V659.90M794.30 613.00V659.90M807.30 613.00V659.90M820.30 613.00V659.90M833.30 613.00V659.90M846.30 613.00V659.90M859.30 613.00V659.90M872.30 613.00V659.90M885.30 613.00V659.90M898.30 613.00V659.90M911.30 613.00V659.90M924.30 613.00V659.90M937.30 613.00V659.90M950.30 613.00V659.90M963.30 613.00V659.90M976.30 613.00V659.90M989.30 613.00V659.90M1002.30 613.00V659.90M1015.30 613.00V659.90M1028.30 613.00V659.90M1041.30 613.00V659.90M1054.30 613.00V659.90M1067.30 613.00V659.90M417.30 622.10H1080.50M417.30 631.65H1080.50M417.30 641.20H1080.50M417.30 650.75H1080.50" stroke="#dadada" stroke-width="1" fill="none" shape-rendering="crispEdges"/>
<text x="413.80" y="624.60" text-anchor="end" class="yl">4</text>
<text x="413.80" y="634.15" text-anchor="end" class="yl">3</text>
<text x="413.80" y="643.70" text-anchor="end" class="yl">2</text>
<text x="413.80" y="653.25" text-anchor="end" class="yl">1</text>
<path d="M417.30 636.50H1079.50" stroke="#ee8a8a" stroke-width="1.7" stroke-dasharray="9.1 4.17" fill="none"/>
<path d="M761.30 613.00V659.90" stroke="#9a9ae2" stroke-width="1" fill="none" shape-rendering="crispEdges"/>
<polyline points="417.8,657.1 418.8,654.5 419.8,653.9 420.8,650.9 421.8,650.7 422.8,650.1 423.8,648.2 424.8,649.0 425.8,646.6 426.8,649.1 427.8,648.8 428.8,646.2 429.8,644.8 430.8,650.8 431.8,652.4 432.8,651.8 433.8,651.5 434.8,650.3 435.8,653.2 436.8,650.6 437.8,648.8 438.8,650.9 439.8,652.7 440.8,652.7 441.8,654.1 442.8,652.0 443.8,652.8 444.8,651.4 445.8,651.5 446.8,650.6 447.8,651.7 448.8,651.2 449.8,651.7 450.8,649.9 451.8,647.1 452.8,651.7 453.8,650.9 454.8,649.8 455.8,650.0 456.8,652.6 457.8,648.8 458.8,648.8 459.8,651.2 460.8,654.9 461.8,653.6 462.8,650.7 463.8,653.8 464.8,653.1 465.8,650.3 466.8,652.6 467.8,649.4 468.8,651.8 469.8,651.1 470.8,648.2 471.8,652.6 472.8,654.8 473.8,653.1 474.8,652.0 475.8,651.4 476.8,650.9 477.8,652.6 478.8,652.5 479.8,651.5 480.8,652.4 481.8,650.8 482.8,650.5 483.8,650.9 484.8,651.0 485.8,652.5 486.8,653.1 487.8,650.7 488.8,648.6 489.8,647.9 490.8,650.9 491.8,652.1 492.8,649.7 493.8,650.6 494.8,652.8 495.8,652.6 496.8,653.7 497.8,653.2 498.8,657.6 499.8,654.4 500.8,657.1 501.8,658.6 502.8,658.9 503.8,658.8 504.8,658.3 505.8,658.7 506.8,659.1 507.8,658.7 508.8,658.1 509.8,657.6 510.8,658.8 511.8,657.6 512.8,657.0 513.8,655.7 514.8,654.6 515.8,651.5 516.8,651.6 517.8,654.9 518.8,654.0 519.8,652.9 520.8,655.6 521.8,654.2 522.8,655.9 523.8,656.1 524.8,656.0 525.8,659.0 526.8,658.8 527.8,656.7 528.8,654.2 529.8,655.1 530.8,657.4 531.8,656.1 532.8,655.9 533.8,655.0 534.8,656.1 535.8,655.2 536.8,657.1 537.8,652.0 538.8,654.4 539.8,653.9 540.8,658.8 541.8,659.0 542.8,657.0 543.8,654.4 544.8,658.8 545.8,658.0 546.8,658.5 547.8,656.7 548.8,655.6 549.8,658.4 550.8,658.2 551.8,656.9 552.8,657.7 553.8,657.8 554.8,658.9 555.8,657.2 556.8,658.9 557.8,658.2 558.8,655.9 559.8,657.1 560.8,652.8 561.8,652.0 562.8,650.6 563.8,648.4 564.8,649.1 565.8,650.2 566.8,649.8 567.8,649.2 568.8,650.2 569.8,651.1 570.8,653.5 571.8,652.4 572.8,655.0 573.8,653.6 574.8,651.1 575.8,650.7 576.8,650.3 577.8,647.6 578.8,651.3 579.8,651.3 580.8,656.1 581.8,657.6 582.8,654.2 583.8,651.5 584.8,651.7 585.8,650.8 586.8,654.4 587.8,653.2 588.8,654.0 589.8,654.0 590.8,655.5 591.8,656.7 592.8,656.6 593.8,654.9 594.8,655.2 595.8,656.1 596.8,655.4 597.8,654.6 598.8,655.4 599.8,655.7 600.8,654.3 601.8,655.5 602.8,656.8 603.8,657.1 604.8,655.0 605.8,653.0 606.8,657.1 607.8,658.4 608.8,657.9 609.8,656.5 610.8,653.7 611.8,651.8 612.8,648.6 613.8,651.9 614.8,646.4 615.8,648.5 616.8,648.4 617.8,648.2 618.8,651.3 619.8,649.3 620.8,652.7 621.8,656.4 622.8,653.1 623.8,655.5 624.8,657.0 625.8,655.1 626.8,654.3 627.8,657.7 628.8,657.3 629.8,656.5 630.8,657.0 631.8,657.4 632.8,653.9 633.8,655.3 634.8,655.9 635.8,655.5 636.8,652.3 637.8,655.0 638.8,650.0 639.8,652.7 640.8,651.3 641.8,647.4 642.8,648.5 643.8,646.7 644.8,650.0 645.8,648.4 646.8,650.4 647.8,650.4 648.8,651.5 649.8,651.7 650.8,651.0 651.8,648.5 652.8,649.5 653.8,650.3 654.8,651.5 655.8,651.1 656.8,651.5 657.8,650.1 658.8,652.1 659.8,651.2 660.8,648.8 661.8,646.9 662.8,646.5 663.8,647.4 664.8,650.0 665.8,651.3 666.8,651.1 667.8,650.8 668.8,654.4 669.8,649.2 670.8,652.8 671.8,651.1 672.8,653.1 673.8,656.8 674.8,653.4 675.8,650.6 676.8,652.1 677.8,652.4 678.8,652.9 679.8,652.9 680.8,649.8 681.8,652.4 682.8,654.1 683.8,652.7 684.8,652.9 685.8,651.0 686.8,651.3 687.8,652.5 688.8,650.2 689.8,649.4 690.8,651.7 691.8,650.2 692.8,650.9 693.8,650.5 694.8,651.4 695.8,650.6 696.8,649.9 697.8,651.1 698.8,650.4 699.8,653.5 700.8,650.7 701.8,651.7 702.8,653.4 703.8,654.8 704.8,653.6 705.8,656.6 706.8,653.1 707.8,654.0 708.8,653.5 709.8,656.1 710.8,655.9 711.8,655.9 712.8,651.8 713.8,651.1 714.8,651.2 715.8,649.1 716.8,651.9 717.8,651.4 718.8,652.3 719.8,650.7 720.8,650.9 721.8,652.2 722.8,653.4 723.8,656.4 724.8,656.4 725.8,656.3 726.8,658.8 727.8,657.7 728.8,656.3 729.8,652.5 730.8,657.1 731.8,655.6 732.8,655.4 733.8,654.7 734.8,656.6 735.8,654.9 736.8,656.6 737.8,658.6 738.8,656.8 739.8,657.2 740.8,658.0 741.8,657.2 742.8,658.7 743.8,658.9 744.8,652.9 745.8,650.5 746.8,653.0 747.8,652.7 748.8,648.4 749.8,650.8 750.8,650.6 751.8,649.0 752.8,649.7 753.8,650.3 754.8,650.6 755.8,651.7 756.8,652.3 757.8,653.6 758.8,655.3 759.8,656.1 760.8,652.4 761.8,655.0 762.8,655.1 763.8,657.1 764.8,656.7 765.8,654.8 766.8,657.1 767.8,656.3 768.8,655.4 769.8,657.3 770.8,657.7 771.8,654.5 772.8,654.3 773.8,656.9 774.8,656.4 775.8,656.1 776.8,657.7 777.8,655.7 778.8,656.8 779.8,657.7 780.8,656.6 781.8,657.1 782.8,655.2 783.8,657.3 784.8,656.3 785.8,656.5 786.8,654.2 787.8,652.6 788.8,649.6 789.8,649.1 790.8,648.4 791.8,650.8 792.8,653.7 793.8,653.5 794.8,653.4 795.8,654.0 796.8,651.9 797.8,650.0 798.8,647.4 799.8,648.3 800.8,646.0 801.8,648.8 802.8,649.9 803.8,648.8 804.8,649.4 805.8,648.9 806.8,647.6 807.8,647.8 808.8,647.4 809.8,650.6 810.8,654.3 811.8,651.9 812.8,654.7 813.8,654.6 814.8,653.1 815.8,655.3 816.8,657.4 817.8,655.4 818.8,659.1 819.8,659.1 820.8,657.6 821.8,656.1 822.8,655.7 823.8,655.4 824.8,651.3 825.8,651.8 826.8,654.1 827.8,658.0 828.8,657.8 829.8,656.2 830.8,653.2 831.8,651.6 832.8,652.2 833.8,656.7 834.8,657.4 835.8,656.3 836.8,655.9 837.8,656.2 838.8,654.4 839.8,655.1 840.8,654.9 841.8,654.1 842.8,653.6 843.8,654.8 844.8,654.2 845.8,653.4 846.8,656.0 847.8,658.0 848.8,658.6 849.8,658.6 850.8,659.1 851.8,658.6 852.8,658.3 853.8,658.1 854.8,657.3 855.8,658.2 856.8,658.0 857.8,658.6 858.8,657.8 859.8,658.9 860.8,657.0 861.8,656.0 862.8,657.6 863.8,657.9 864.8,658.8 865.8,659.0 866.8,655.1 867.8,657.4 868.8,658.3 869.8,659.1 870.8,658.9 871.8,658.9 872.8,657.5 873.8,659.1 874.8,657.2 875.8,655.7 876.8,655.5 877.8,656.2 878.8,655.9 879.8,656.7 880.8,653.5 881.8,651.7 882.8,650.2 883.8,650.6 884.8,650.2 885.8,651.2 886.8,646.1 887.8,647.7 888.8,651.1 889.8,650.1 890.8,649.7 891.8,650.0 892.8,651.1 893.8,649.3 894.8,650.8 895.8,649.9 896.8,648.8 897.8,650.7 898.8,652.7 899.8,647.9 900.8,650.4 901.8,650.8 902.8,650.9 903.8,648.8 904.8,649.4 905.8,651.0 906.8,649.5 907.8,649.0 908.8,650.0 909.8,648.6 910.8,650.7 911.8,648.9 912.8,651.5 913.8,653.3 914.8,651.3 915.8,651.1 916.8,650.6 917.8,648.5 918.8,654.8 919.8,653.1 920.8,653.5 921.8,652.9 922.8,653.3 923.8,656.4 924.8,653.8 925.8,652.8 926.8,657.2 927.8,658.8 928.8,655.6 929.8,655.0 930.8,654.6 931.8,651.7 932.8,651.2 933.8,648.9 934.8,649.8 935.8,651.8 936.8,652.2 937.8,652.8 938.8,651.2 939.8,655.8 940.8,654.9 941.8,654.1 942.8,654.5 943.8,653.2 944.8,652.0 945.8,650.5 946.8,649.2 947.8,652.3 948.8,650.3 949.8,650.0 950.8,651.3 951.8,650.8 952.8,651.2 953.8,655.3 954.8,653.5 955.8,654.6 956.8,652.7 957.8,653.0 958.8,653.4 959.8,654.9 960.8,654.2 961.8,656.9 962.8,654.7 963.8,656.3 964.8,656.7 965.8,655.3 966.8,655.6 967.8,656.6 968.8,655.1 969.8,653.6 970.8,652.2 971.8,650.2 972.8,650.6 973.8,650.6 974.8,650.4 975.8,652.3 976.8,655.0 977.8,653.0 978.8,656.4 979.8,656.7 980.8,654.4 981.8,652.2 982.8,652.3 983.8,652.5 984.8,651.7 985.8,650.4 986.8,652.8 987.8,653.3 988.8,654.5 989.8,652.6 990.8,652.6 991.8,651.5 992.8,652.1 993.8,647.5 994.8,650.0 995.8,646.8 996.8,647.7 997.8,651.9 998.8,648.3 999.8,652.4 1000.8,649.7 1001.8,651.9 1002.8,653.1 1003.8,657.0 1004.8,656.0 1005.8,655.6 1006.8,655.7 1007.8,652.8 1008.8,651.1 1009.8,650.8 1010.8,647.7 1011.8,645.1 1012.8,642.1 1013.8,645.8 1014.8,645.8 1015.8,646.7 1016.8,648.2 1017.8,645.3 1018.8,649.3 1019.8,648.7 1020.8,647.7 1021.8,651.0 1022.8,649.0 1023.8,648.6 1024.8,646.3 1025.8,649.4 1026.8,650.6 1027.8,651.2 1028.8,650.3 1029.8,652.0 1030.8,653.9 1031.8,655.8 1032.8,652.1 1033.8,650.3 1034.8,652.5 1035.8,649.4 1036.8,649.4 1037.8,650.5 1038.8,649.1 1039.8,650.4 1040.8,649.2 1041.8,651.1 1042.8,650.9 1043.8,649.2 1044.8,649.7 1045.8,647.5 1046.8,647.9 1047.8,650.0 1048.8,651.1 1049.8,653.3 1050.8,652.0 1051.8,653.1 1052.8,654.7 1053.8,654.2 1054.8,652.2 1055.8,653.2 1056.8,652.5 1057.8,652.2 1058.8,650.2 1059.8,651.8 1060.8,648.0 1061.8,649.8 1062.8,647.5 1063.8,649.3 1064.8,652.1 1065.8,652.7 1066.8,654.1 1067.8,654.8 1068.8,656.1 1069.8,656.5 1070.8,656.9 1071.8,657.3 1072.8,655.1 1073.8,655.5 1074.8,654.9 1075.8,655.1 1076.8,655.0 1077.8,656.3 1078.8,658.6 1079.8,658.3" fill="none" stroke="#0c0c0c" stroke-width="1.35" stroke-linejoin="miter" stroke-miterlimit="3"/>
<path d="M1017.0 224.7H1027.4" stroke="#ddd" stroke-width="4" stroke-linecap="round"/><rect x="1042.2" y="215.7" width="12.5" height="10" fill="none" stroke="#ddd" stroke-width="2"/><rect x="1041.2" y="214.7" width="14.5" height="3.6" fill="#ddd"/><path d="M1069.1 216.3L1079.1 226.3M1079.1 216.3L1069.1 226.3" stroke="#ddd" stroke-width="3.6"/></svg>
<div class="sb" style="left:96.8px;top:466px"><svg width="29" height="29"><circle cx="14.7" cy="14.3" r="8.8" fill="#fff"/><path d="M20.24 14.30H10.74 M15.40 9.64L10.74 14.30L15.40 18.96" stroke="#555" stroke-width="2.73" fill="none" stroke-linecap="butt" stroke-linejoin="miter"/></svg></div>
<div class="sb" style="left:130.8px;top:466px"><svg width="29" height="29"><circle cx="14.7" cy="14.3" r="8.8" fill="#fff"/><path d="M9.16 14.30H18.66 M14.00 9.64L18.66 14.30L14.00 18.96" stroke="#555" stroke-width="2.73" fill="none" stroke-linecap="butt" stroke-linejoin="miter"/></svg></div>
<div class="a" style="left:177.2px;top:475.3px;width:602.8px;height:10px;background:#555"></div>
<div class="a" style="left:413px;top:476.5px;width:45.5px;height:7.6px;background:#3b3b3b"></div>
<svg class="a" style="left:177.2px;top:475.3px" width="602.8" height="10"><path d="M2.5 5L6.5 1.3V8.7Z M600.3 5L596.3 1.3V8.7Z" fill="#333"/></svg>
</div>
</div></body></html>
